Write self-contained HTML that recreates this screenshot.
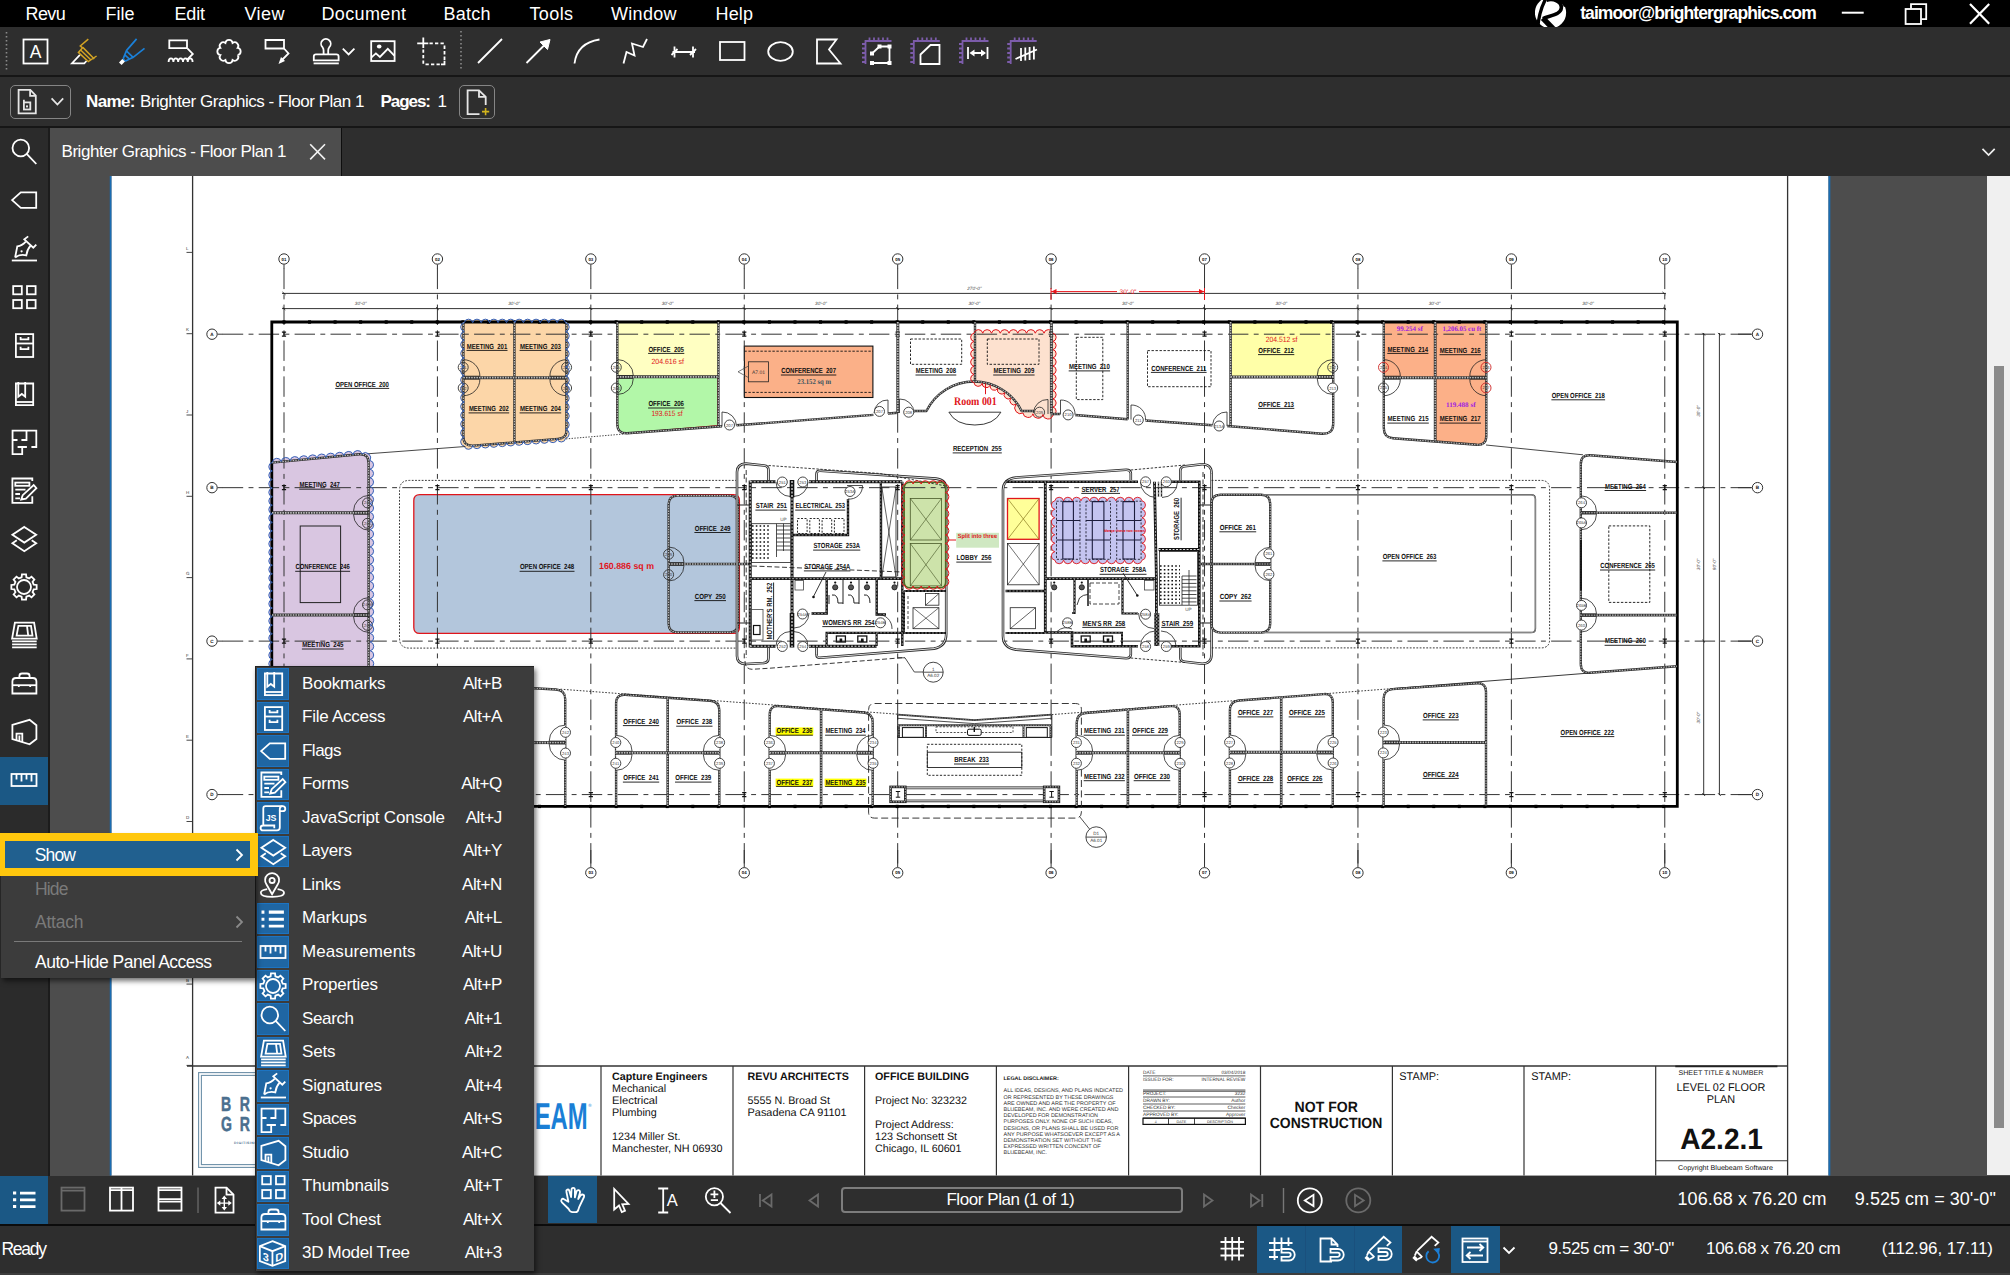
<!DOCTYPE html>
<html><head><meta charset="utf-8"><title>Revu</title>
<style>
html,body{margin:0;padding:0}
body{width:2010px;height:1275px;position:relative;overflow:hidden;background:#4d4d4d;font-family:"Liberation Sans",sans-serif}
div,svg{-webkit-font-smoothing:antialiased}
</style></head><body>
<svg style="position:absolute;left:0;top:0" width="2010" height="1275" viewBox="0 0 2010 1275" shape-rendering="geometricPrecision" text-rendering="geometricPrecision"><defs><clipPath id="dc"><rect x="49.5" y="176" width="1937.5" height="999.5"/></clipPath></defs><g clip-path="url(#dc)"><rect x="111.4" y="170" width="1717.1" height="1010" rx="0" stroke="none" fill="#fff" /><path d="M110.6 176L110.6 1176" stroke="#1a6db3" stroke-width="1.7" fill="none" /><path d="M1829.4 176L1829.4 1176" stroke="#1a6db3" stroke-width="1.9" fill="none" /><path d="M192.6 176L192.6 1176" stroke="#333" stroke-width="1.3" fill="none" /><path d="M1787.6 176L1787.6 1176" stroke="#333" stroke-width="1.3" fill="none" /><path d="M186.5 252.4L192 252.4" stroke="#333" stroke-width="0.9" fill="none" /><text x="186" y="250.1" font-family="Liberation Sans" font-size="4.5" fill="#333">L</text><path d="M186.5 333.7L192 333.7" stroke="#333" stroke-width="0.9" fill="none" /><text x="186" y="331.4" font-family="Liberation Sans" font-size="4.5" fill="#333">K</text><path d="M186.5 415L192 415" stroke="#333" stroke-width="0.9" fill="none" /><text x="186" y="412.7" font-family="Liberation Sans" font-size="4.5" fill="#333">J</text><path d="M186.5 496.3L192 496.3" stroke="#333" stroke-width="0.9" fill="none" /><text x="186" y="494" font-family="Liberation Sans" font-size="4.5" fill="#333">H</text><path d="M186.5 577.6L192 577.6" stroke="#333" stroke-width="0.9" fill="none" /><text x="186" y="575.3" font-family="Liberation Sans" font-size="4.5" fill="#333">G</text><path d="M186.5 658.9L192 658.9" stroke="#333" stroke-width="0.9" fill="none" /><text x="186" y="656.6" font-family="Liberation Sans" font-size="4.5" fill="#333">F</text><path d="M186.5 740.2L192 740.2" stroke="#333" stroke-width="0.9" fill="none" /><text x="186" y="737.9" font-family="Liberation Sans" font-size="4.5" fill="#333">E</text><path d="M186.5 821.5L192 821.5" stroke="#333" stroke-width="0.9" fill="none" /><text x="186" y="819.2" font-family="Liberation Sans" font-size="4.5" fill="#333">D</text><path d="M186.5 902.8L192 902.8" stroke="#333" stroke-width="0.9" fill="none" /><text x="186" y="900.5" font-family="Liberation Sans" font-size="4.5" fill="#333">C</text><path d="M186.5 984.1L192 984.1" stroke="#333" stroke-width="0.9" fill="none" /><text x="186" y="981.8" font-family="Liberation Sans" font-size="4.5" fill="#333">B</text><path d="M186.5 1065.4L192 1065.4" stroke="#333" stroke-width="0.9" fill="none" /><text x="186" y="1059" font-family="Liberation Sans" font-size="4.5" fill="#333">A</text><path d="M464.3 322.6A4.31 4.31 0 0 1 472.74 322.6A4.31 4.31 0 0 1 481.18 322.6A4.31 4.31 0 0 1 489.62 322.6A4.31 4.31 0 0 1 498.07 322.6A4.31 4.31 0 0 1 506.51 322.6A4.31 4.31 0 0 1 514.95 322.6A4.31 4.31 0 0 1 523.39 322.6A4.31 4.31 0 0 1 531.83 322.6A4.31 4.31 0 0 1 540.27 322.6A4.31 4.31 0 0 1 548.72 322.6A4.31 4.31 0 0 1 557.16 322.6A4.31 4.31 0 0 1 565.6 322.6A4.54 4.54 0 0 1 565.6 331.49A4.54 4.54 0 0 1 565.6 340.38A4.54 4.54 0 0 1 565.6 349.28A4.54 4.54 0 0 1 565.6 358.17A4.54 4.54 0 0 1 565.6 367.06A4.54 4.54 0 0 1 565.6 375.95A4.54 4.54 0 0 1 565.6 384.85A4.54 4.54 0 0 1 565.6 393.74A4.54 4.54 0 0 1 565.6 402.63A4.54 4.54 0 0 1 565.6 411.52A4.54 4.54 0 0 1 565.6 420.42A4.54 4.54 0 0 1 565.6 429.31A4.54 4.54 0 0 1 565.6 438.2A4.32 4.32 0 0 1 557.16 438.87A4.32 4.32 0 0 1 548.72 439.53A4.32 4.32 0 0 1 540.27 440.2A4.32 4.32 0 0 1 531.83 440.87A4.32 4.32 0 0 1 523.39 441.53A4.32 4.32 0 0 1 514.95 442.2A4.32 4.32 0 0 1 506.51 442.87A4.32 4.32 0 0 1 498.07 443.53A4.32 4.32 0 0 1 489.62 444.2A4.32 4.32 0 0 1 481.18 444.87A4.32 4.32 0 0 1 472.74 445.53A4.32 4.32 0 0 1 464.3 446.2A4.5 4.5 0 0 1 464.3 437.37A4.5 4.5 0 0 1 464.3 428.54A4.5 4.5 0 0 1 464.3 419.71A4.5 4.5 0 0 1 464.3 410.89A4.5 4.5 0 0 1 464.3 402.06A4.5 4.5 0 0 1 464.3 393.23A4.5 4.5 0 0 1 464.3 384.4A4.5 4.5 0 0 1 464.3 375.57A4.5 4.5 0 0 1 464.3 366.74A4.5 4.5 0 0 1 464.3 357.91A4.5 4.5 0 0 1 464.3 349.09A4.5 4.5 0 0 1 464.3 340.26A4.5 4.5 0 0 1 464.3 331.43A4.5 4.5 0 0 1 464.3 322.6Z" stroke="none" stroke-width="0" fill="#fcd6a8" /><rect x="617.3" y="322" width="100.6" height="54.5" rx="0" stroke="none" fill="#ffffc2" /><path d="M617.3 377.5H717.9V425.6L627 433.3Q617.3 433.6 617.3 424Z" stroke="#e0151b" stroke-width="1.2" fill="#b2f7a8" /><rect x="744.4" y="346.1" width="128.5" height="51.4" rx="0" stroke="#111" stroke-width="1.1" fill="#fbb088" /><path d="M974 333.2A4.47 4.47 0 0 1 982.76 333.2A4.47 4.47 0 0 1 991.51 333.2A4.47 4.47 0 0 1 1000.27 333.2A4.47 4.47 0 0 1 1009.02 333.2A4.47 4.47 0 0 1 1017.78 333.2A4.47 4.47 0 0 1 1026.53 333.2A4.47 4.47 0 0 1 1035.29 333.2A4.47 4.47 0 0 1 1044.04 333.2A4.47 4.47 0 0 1 1052.8 333.2A4.19 4.19 0 0 1 1052.8 341.41A4.19 4.19 0 0 1 1052.8 349.62A4.19 4.19 0 0 1 1052.8 357.83A4.19 4.19 0 0 1 1052.8 366.04A4.19 4.19 0 0 1 1052.8 374.25A4.19 4.19 0 0 1 1052.8 382.46A4.19 4.19 0 0 1 1052.8 390.67A4.19 4.19 0 0 1 1052.8 398.88A4.19 4.19 0 0 1 1052.8 407.09A4.19 4.19 0 0 1 1052.8 415.3A5.08 5.08 0 0 1 1042.87 414.53A5.08 5.08 0 0 1 1032.93 413.77A5.08 5.08 0 0 1 1023 413A5.63 5.63 0 0 1 1016.06 404.41A4.18 4.18 0 0 1 1010.8 398.13A4.18 4.18 0 0 1 1004.62 392.77A4.18 4.18 0 0 1 997.67 388.45A4.18 4.18 0 0 1 990.12 385.28A4.18 4.18 0 0 1 982.16 383.35A4.18 4.18 0 0 1 974 382.7A4.21 4.21 0 0 1 974 374.45A4.21 4.21 0 0 1 974 366.2A4.21 4.21 0 0 1 974 357.95A4.21 4.21 0 0 1 974 349.7A4.21 4.21 0 0 1 974 341.45A4.21 4.21 0 0 1 974 333.2Z" stroke="none" stroke-width="0" fill="#fde1cf" /><rect x="1231.8" y="322" width="99.9" height="54.3" rx="0" stroke="none" fill="#ffffa8" /><rect x="1384.5" y="322" width="101.5" height="55.6" rx="0" stroke="none" fill="#fcb088" /><path d="M1435.5 377H1486V436Q1486 445 1477 444.6L1435.5 441Z" stroke="#222" stroke-width="0" fill="#fcb088" /><path d="M272.3 462.4A4.6 4.6 0 0 1 281.27 461.54A4.6 4.6 0 0 1 290.24 460.68A4.6 4.6 0 0 1 299.21 459.82A4.6 4.6 0 0 1 308.18 458.96A4.6 4.6 0 0 1 317.15 458.1A4.6 4.6 0 0 1 326.12 457.24A4.6 4.6 0 0 1 335.09 456.38A4.6 4.6 0 0 1 344.06 455.52A4.6 4.6 0 0 1 353.03 454.66A4.6 4.6 0 0 1 362 453.8A5.32 5.32 0 0 1 370 460.5A4.41 4.41 0 0 1 370.01 469.15A4.41 4.41 0 0 1 370.02 477.79A4.41 4.41 0 0 1 370.02 486.44A4.41 4.41 0 0 1 370.03 495.08A4.41 4.41 0 0 1 370.04 503.73A4.41 4.41 0 0 1 370.05 512.38A4.41 4.41 0 0 1 370.06 521.02A4.41 4.41 0 0 1 370.07 529.67A4.41 4.41 0 0 1 370.07 538.31A4.41 4.41 0 0 1 370.08 546.96A4.41 4.41 0 0 1 370.09 555.6A4.41 4.41 0 0 1 370.1 564.25A4.41 4.41 0 0 1 370.11 572.9A4.41 4.41 0 0 1 370.12 581.54A4.41 4.41 0 0 1 370.12 590.19A4.41 4.41 0 0 1 370.13 598.83A4.41 4.41 0 0 1 370.14 607.48A4.41 4.41 0 0 1 370.15 616.12A4.41 4.41 0 0 1 370.16 624.77A4.41 4.41 0 0 1 370.17 633.42A4.41 4.41 0 0 1 370.18 642.06A4.41 4.41 0 0 1 370.18 650.71A4.41 4.41 0 0 1 370.19 659.35A4.41 4.41 0 0 1 370.2 668A4.54 4.54 0 0 1 361.3 668A4.54 4.54 0 0 1 352.4 668A4.54 4.54 0 0 1 343.5 668A4.54 4.54 0 0 1 334.6 668A4.54 4.54 0 0 1 325.7 668A4.54 4.54 0 0 1 316.8 668A4.54 4.54 0 0 1 307.9 668A4.54 4.54 0 0 1 299 668A4.54 4.54 0 0 1 290.1 668A4.54 4.54 0 0 1 281.2 668A4.54 4.54 0 0 1 272.3 668A4.37 4.37 0 0 1 272.3 659.43A4.37 4.37 0 0 1 272.3 650.87A4.37 4.37 0 0 1 272.3 642.3A4.37 4.37 0 0 1 272.3 633.73A4.37 4.37 0 0 1 272.3 625.17A4.37 4.37 0 0 1 272.3 616.6A4.37 4.37 0 0 1 272.3 608.03A4.37 4.37 0 0 1 272.3 599.47A4.37 4.37 0 0 1 272.3 590.9A4.37 4.37 0 0 1 272.3 582.33A4.37 4.37 0 0 1 272.3 573.77A4.37 4.37 0 0 1 272.3 565.2A4.37 4.37 0 0 1 272.3 556.63A4.37 4.37 0 0 1 272.3 548.07A4.37 4.37 0 0 1 272.3 539.5A4.37 4.37 0 0 1 272.3 530.93A4.37 4.37 0 0 1 272.3 522.37A4.37 4.37 0 0 1 272.3 513.8A4.37 4.37 0 0 1 272.3 505.23A4.37 4.37 0 0 1 272.3 496.67A4.37 4.37 0 0 1 272.3 488.1A4.37 4.37 0 0 1 272.3 479.53A4.37 4.37 0 0 1 272.3 470.97A4.37 4.37 0 0 1 272.3 462.4Z" stroke="none" stroke-width="0" fill="#d9c6e1" /><path d="M419.8 494.6H733.4Q739.4 494.6 739.4 500.6V627.4Q739.4 633.4 733.4 633.4H419.8Q413.8 633.4 413.8 627.4V500.6Q413.8 494.6 419.8 494.6Z" stroke="#e0151b" stroke-width="1.3" fill="#b3c6dc" /><path d="M905 484A3.43 3.43 0 0 1 911.73 484A3.43 3.43 0 0 1 918.47 484A3.43 3.43 0 0 1 925.2 484A3.43 3.43 0 0 1 931.93 484A3.43 3.43 0 0 1 938.67 484A3.43 3.43 0 0 1 945.4 484A3.47 3.47 0 0 1 945.4 490.8A3.47 3.47 0 0 1 945.4 497.6A3.47 3.47 0 0 1 945.4 504.4A3.47 3.47 0 0 1 945.4 511.2A3.47 3.47 0 0 1 945.4 518A3.47 3.47 0 0 1 945.4 524.8A3.47 3.47 0 0 1 945.4 531.6A3.47 3.47 0 0 1 945.4 538.4A3.47 3.47 0 0 1 945.4 545.2A3.47 3.47 0 0 1 945.4 552A3.47 3.47 0 0 1 945.4 558.8A3.47 3.47 0 0 1 945.4 565.6A3.47 3.47 0 0 1 945.4 572.4A3.47 3.47 0 0 1 945.4 579.2A3.47 3.47 0 0 1 945.4 586A3.43 3.43 0 0 1 938.67 586A3.43 3.43 0 0 1 931.93 586A3.43 3.43 0 0 1 925.2 586A3.43 3.43 0 0 1 918.47 586A3.43 3.43 0 0 1 911.73 586A3.43 3.43 0 0 1 905 586A3.47 3.47 0 0 1 905 579.2A3.47 3.47 0 0 1 905 572.4A3.47 3.47 0 0 1 905 565.6A3.47 3.47 0 0 1 905 558.8A3.47 3.47 0 0 1 905 552A3.47 3.47 0 0 1 905 545.2A3.47 3.47 0 0 1 905 538.4A3.47 3.47 0 0 1 905 531.6A3.47 3.47 0 0 1 905 524.8A3.47 3.47 0 0 1 905 518A3.47 3.47 0 0 1 905 511.2A3.47 3.47 0 0 1 905 504.4A3.47 3.47 0 0 1 905 497.6A3.47 3.47 0 0 1 905 490.8A3.47 3.47 0 0 1 905 484Z" stroke="none" stroke-width="0" fill="#cde3aa" /><rect x="956.2" y="532.8" width="42.8" height="14.9" rx="0" stroke="none" fill="#cfe8c2" /><rect x="1007.5" y="498.5" width="31.6" height="40.8" rx="0" stroke="#e0151b" stroke-width="1.3" fill="#ffff99" /><path d="M1054.8 500.8A4.45 4.45 0 0 1 1063.52 500.8A4.45 4.45 0 0 1 1072.24 500.8A4.45 4.45 0 0 1 1080.96 500.8A4.45 4.45 0 0 1 1089.68 500.8A4.45 4.45 0 0 1 1098.4 500.8A4.45 4.45 0 0 1 1107.12 500.8A4.45 4.45 0 0 1 1115.84 500.8A4.45 4.45 0 0 1 1124.56 500.8A4.45 4.45 0 0 1 1133.28 500.8A4.45 4.45 0 0 1 1142 500.8A4.33 4.33 0 0 1 1142 509.29A4.33 4.33 0 0 1 1142 517.77A4.33 4.33 0 0 1 1142 526.26A4.33 4.33 0 0 1 1142 534.74A4.33 4.33 0 0 1 1142 543.23A4.33 4.33 0 0 1 1142 551.71A4.33 4.33 0 0 1 1142 560.2A4.45 4.45 0 0 1 1133.28 560.2A4.45 4.45 0 0 1 1124.56 560.2A4.45 4.45 0 0 1 1115.84 560.2A4.45 4.45 0 0 1 1107.12 560.2A4.45 4.45 0 0 1 1098.4 560.2A4.45 4.45 0 0 1 1089.68 560.2A4.45 4.45 0 0 1 1080.96 560.2A4.45 4.45 0 0 1 1072.24 560.2A4.45 4.45 0 0 1 1063.52 560.2A4.45 4.45 0 0 1 1054.8 560.2A4.33 4.33 0 0 1 1054.8 551.71A4.33 4.33 0 0 1 1054.8 543.23A4.33 4.33 0 0 1 1054.8 534.74A4.33 4.33 0 0 1 1054.8 526.26A4.33 4.33 0 0 1 1054.8 517.77A4.33 4.33 0 0 1 1054.8 509.29A4.33 4.33 0 0 1 1054.8 500.8Z" stroke="none" stroke-width="0" fill="#c4c4f0" /><path d="M284 264.3L284 269" stroke="#333" stroke-width="1" fill="none" /><path d="M284 268.7L284 867.5" stroke="#333" stroke-width="1" fill="none" stroke-dasharray="20.4 5.35 4.9 5.25" /><path d="M284 850L284 867.5" stroke="#333" stroke-width="1" fill="none" /><circle cx="284" cy="259" r="5.2" fill="#fff" stroke="#333" stroke-width="1"/><text x="284" y="260.58" text-anchor="middle" font-family="Liberation Sans" font-size="4.4" font-weight="bold" fill="#111">01</text><circle cx="284" cy="872.8" r="5.2" fill="#fff" stroke="#333" stroke-width="1"/><text x="284" y="874.38" text-anchor="middle" font-family="Liberation Sans" font-size="4.4" font-weight="bold" fill="#111">01</text><path d="M437.42 264.3L437.42 269" stroke="#333" stroke-width="1" fill="none" /><path d="M437.42 268.7L437.42 867.5" stroke="#333" stroke-width="1" fill="none" stroke-dasharray="20.4 5.35 4.9 5.25" /><path d="M437.42 850L437.42 867.5" stroke="#333" stroke-width="1" fill="none" /><circle cx="437.42" cy="259" r="5.2" fill="#fff" stroke="#333" stroke-width="1"/><text x="437.42" y="260.58" text-anchor="middle" font-family="Liberation Sans" font-size="4.4" font-weight="bold" fill="#111">02</text><circle cx="437.42" cy="872.8" r="5.2" fill="#fff" stroke="#333" stroke-width="1"/><text x="437.42" y="874.38" text-anchor="middle" font-family="Liberation Sans" font-size="4.4" font-weight="bold" fill="#111">02</text><path d="M590.84 264.3L590.84 269" stroke="#333" stroke-width="1" fill="none" /><path d="M590.84 268.7L590.84 867.5" stroke="#333" stroke-width="1" fill="none" stroke-dasharray="20.4 5.35 4.9 5.25" /><path d="M590.84 850L590.84 867.5" stroke="#333" stroke-width="1" fill="none" /><circle cx="590.84" cy="259" r="5.2" fill="#fff" stroke="#333" stroke-width="1"/><text x="590.84" y="260.58" text-anchor="middle" font-family="Liberation Sans" font-size="4.4" font-weight="bold" fill="#111">03</text><circle cx="590.84" cy="872.8" r="5.2" fill="#fff" stroke="#333" stroke-width="1"/><text x="590.84" y="874.38" text-anchor="middle" font-family="Liberation Sans" font-size="4.4" font-weight="bold" fill="#111">03</text><path d="M744.26 264.3L744.26 269" stroke="#333" stroke-width="1" fill="none" /><path d="M744.26 268.7L744.26 867.5" stroke="#333" stroke-width="1" fill="none" stroke-dasharray="20.4 5.35 4.9 5.25" /><path d="M744.26 850L744.26 867.5" stroke="#333" stroke-width="1" fill="none" /><circle cx="744.26" cy="259" r="5.2" fill="#fff" stroke="#333" stroke-width="1"/><text x="744.26" y="260.58" text-anchor="middle" font-family="Liberation Sans" font-size="4.4" font-weight="bold" fill="#111">04</text><circle cx="744.26" cy="872.8" r="5.2" fill="#fff" stroke="#333" stroke-width="1"/><text x="744.26" y="874.38" text-anchor="middle" font-family="Liberation Sans" font-size="4.4" font-weight="bold" fill="#111">04</text><path d="M897.68 264.3L897.68 269" stroke="#333" stroke-width="1" fill="none" /><path d="M897.68 268.7L897.68 867.5" stroke="#333" stroke-width="1" fill="none" stroke-dasharray="20.4 5.35 4.9 5.25" /><path d="M897.68 850L897.68 867.5" stroke="#333" stroke-width="1" fill="none" /><circle cx="897.68" cy="259" r="5.2" fill="#fff" stroke="#333" stroke-width="1"/><text x="897.68" y="260.58" text-anchor="middle" font-family="Liberation Sans" font-size="4.4" font-weight="bold" fill="#111">05</text><circle cx="897.68" cy="872.8" r="5.2" fill="#fff" stroke="#333" stroke-width="1"/><text x="897.68" y="874.38" text-anchor="middle" font-family="Liberation Sans" font-size="4.4" font-weight="bold" fill="#111">05</text><path d="M1051.1 264.3L1051.1 269" stroke="#333" stroke-width="1" fill="none" /><path d="M1051.1 268.7L1051.1 867.5" stroke="#333" stroke-width="1" fill="none" stroke-dasharray="20.4 5.35 4.9 5.25" /><path d="M1051.1 850L1051.1 867.5" stroke="#333" stroke-width="1" fill="none" /><circle cx="1051.1" cy="259" r="5.2" fill="#fff" stroke="#333" stroke-width="1"/><text x="1051.1" y="260.58" text-anchor="middle" font-family="Liberation Sans" font-size="4.4" font-weight="bold" fill="#111">06</text><circle cx="1051.1" cy="872.8" r="5.2" fill="#fff" stroke="#333" stroke-width="1"/><text x="1051.1" y="874.38" text-anchor="middle" font-family="Liberation Sans" font-size="4.4" font-weight="bold" fill="#111">06</text><path d="M1204.52 264.3L1204.52 269" stroke="#333" stroke-width="1" fill="none" /><path d="M1204.52 268.7L1204.52 867.5" stroke="#333" stroke-width="1" fill="none" stroke-dasharray="20.4 5.35 4.9 5.25" /><path d="M1204.52 850L1204.52 867.5" stroke="#333" stroke-width="1" fill="none" /><circle cx="1204.52" cy="259" r="5.2" fill="#fff" stroke="#333" stroke-width="1"/><text x="1204.52" y="260.58" text-anchor="middle" font-family="Liberation Sans" font-size="4.4" font-weight="bold" fill="#111">07</text><circle cx="1204.52" cy="872.8" r="5.2" fill="#fff" stroke="#333" stroke-width="1"/><text x="1204.52" y="874.38" text-anchor="middle" font-family="Liberation Sans" font-size="4.4" font-weight="bold" fill="#111">07</text><path d="M1357.94 264.3L1357.94 269" stroke="#333" stroke-width="1" fill="none" /><path d="M1357.94 268.7L1357.94 867.5" stroke="#333" stroke-width="1" fill="none" stroke-dasharray="20.4 5.35 4.9 5.25" /><path d="M1357.94 850L1357.94 867.5" stroke="#333" stroke-width="1" fill="none" /><circle cx="1357.94" cy="259" r="5.2" fill="#fff" stroke="#333" stroke-width="1"/><text x="1357.94" y="260.58" text-anchor="middle" font-family="Liberation Sans" font-size="4.4" font-weight="bold" fill="#111">08</text><circle cx="1357.94" cy="872.8" r="5.2" fill="#fff" stroke="#333" stroke-width="1"/><text x="1357.94" y="874.38" text-anchor="middle" font-family="Liberation Sans" font-size="4.4" font-weight="bold" fill="#111">08</text><path d="M1511.36 264.3L1511.36 269" stroke="#333" stroke-width="1" fill="none" /><path d="M1511.36 268.7L1511.36 867.5" stroke="#333" stroke-width="1" fill="none" stroke-dasharray="20.4 5.35 4.9 5.25" /><path d="M1511.36 850L1511.36 867.5" stroke="#333" stroke-width="1" fill="none" /><circle cx="1511.36" cy="259" r="5.2" fill="#fff" stroke="#333" stroke-width="1"/><text x="1511.36" y="260.58" text-anchor="middle" font-family="Liberation Sans" font-size="4.4" font-weight="bold" fill="#111">09</text><circle cx="1511.36" cy="872.8" r="5.2" fill="#fff" stroke="#333" stroke-width="1"/><text x="1511.36" y="874.38" text-anchor="middle" font-family="Liberation Sans" font-size="4.4" font-weight="bold" fill="#111">09</text><path d="M1664.78 264.3L1664.78 269" stroke="#333" stroke-width="1" fill="none" /><path d="M1664.78 268.7L1664.78 867.5" stroke="#333" stroke-width="1" fill="none" stroke-dasharray="20.4 5.35 4.9 5.25" /><path d="M1664.78 850L1664.78 867.5" stroke="#333" stroke-width="1" fill="none" /><circle cx="1664.78" cy="259" r="5.2" fill="#fff" stroke="#333" stroke-width="1"/><text x="1664.78" y="260.58" text-anchor="middle" font-family="Liberation Sans" font-size="4.4" font-weight="bold" fill="#111">10</text><circle cx="1664.78" cy="872.8" r="5.2" fill="#fff" stroke="#333" stroke-width="1"/><text x="1664.78" y="874.38" text-anchor="middle" font-family="Liberation Sans" font-size="4.4" font-weight="bold" fill="#111">10</text><path d="M217.3 334.2L223 334.2" stroke="#333" stroke-width="1" fill="none" /><path d="M222.8 334.2L1752.3 334.2" stroke="#333" stroke-width="1" fill="none" stroke-dasharray="20.4 5.35 4.9 5.25" /><path d="M1738 334.2L1752.3 334.2" stroke="#333" stroke-width="1" fill="none" /><circle cx="212" cy="334.2" r="5.2" fill="#fff" stroke="#333" stroke-width="1"/><text x="212" y="335.86" text-anchor="middle" font-family="Liberation Sans" font-size="4.6" font-weight="bold" fill="#111">A</text><circle cx="1757.5" cy="334.2" r="5.2" fill="#fff" stroke="#333" stroke-width="1"/><text x="1757.5" y="335.86" text-anchor="middle" font-family="Liberation Sans" font-size="4.6" font-weight="bold" fill="#111">A</text><path d="M217.3 487.66L223 487.66" stroke="#333" stroke-width="1" fill="none" /><path d="M222.8 487.66L1752.3 487.66" stroke="#333" stroke-width="1" fill="none" stroke-dasharray="20.4 5.35 4.9 5.25" /><path d="M1738 487.66L1752.3 487.66" stroke="#333" stroke-width="1" fill="none" /><circle cx="212" cy="487.66" r="5.2" fill="#fff" stroke="#333" stroke-width="1"/><text x="212" y="489.32" text-anchor="middle" font-family="Liberation Sans" font-size="4.6" font-weight="bold" fill="#111">B</text><circle cx="1757.5" cy="487.66" r="5.2" fill="#fff" stroke="#333" stroke-width="1"/><text x="1757.5" y="489.32" text-anchor="middle" font-family="Liberation Sans" font-size="4.6" font-weight="bold" fill="#111">B</text><path d="M217.3 641.12L223 641.12" stroke="#333" stroke-width="1" fill="none" /><path d="M222.8 641.12L1752.3 641.12" stroke="#333" stroke-width="1" fill="none" stroke-dasharray="20.4 5.35 4.9 5.25" /><path d="M1738 641.12L1752.3 641.12" stroke="#333" stroke-width="1" fill="none" /><circle cx="212" cy="641.12" r="5.2" fill="#fff" stroke="#333" stroke-width="1"/><text x="212" y="642.78" text-anchor="middle" font-family="Liberation Sans" font-size="4.6" font-weight="bold" fill="#111">C</text><circle cx="1757.5" cy="641.12" r="5.2" fill="#fff" stroke="#333" stroke-width="1"/><text x="1757.5" y="642.78" text-anchor="middle" font-family="Liberation Sans" font-size="4.6" font-weight="bold" fill="#111">C</text><path d="M217.3 794.58L223 794.58" stroke="#333" stroke-width="1" fill="none" /><path d="M222.8 794.58L1752.3 794.58" stroke="#333" stroke-width="1" fill="none" stroke-dasharray="20.4 5.35 4.9 5.25" /><path d="M1738 794.58L1752.3 794.58" stroke="#333" stroke-width="1" fill="none" /><circle cx="212" cy="794.58" r="5.2" fill="#fff" stroke="#333" stroke-width="1"/><text x="212" y="796.24" text-anchor="middle" font-family="Liberation Sans" font-size="4.6" font-weight="bold" fill="#111">D</text><circle cx="1757.5" cy="794.58" r="5.2" fill="#fff" stroke="#333" stroke-width="1"/><text x="1757.5" y="796.24" text-anchor="middle" font-family="Liberation Sans" font-size="4.6" font-weight="bold" fill="#111">D</text><path d="M281.9 332.2H286.1M281.9 336.2H286.1M284 332.2V336.2" stroke="#111" stroke-width="1.2" fill="none" /><path d="M281.9 485.66H286.1M281.9 489.66H286.1M284 485.66V489.66" stroke="#111" stroke-width="1.2" fill="none" /><path d="M281.9 639.12H286.1M281.9 643.12H286.1M284 639.12V643.12" stroke="#111" stroke-width="1.2" fill="none" /><path d="M281.9 792.58H286.1M281.9 796.58H286.1M284 792.58V796.58" stroke="#111" stroke-width="1.2" fill="none" /><path d="M435.32 332.2H439.52M435.32 336.2H439.52M437.42 332.2V336.2" stroke="#111" stroke-width="1.2" fill="none" /><path d="M435.32 485.66H439.52M435.32 489.66H439.52M437.42 485.66V489.66" stroke="#111" stroke-width="1.2" fill="none" /><path d="M435.32 639.12H439.52M435.32 643.12H439.52M437.42 639.12V643.12" stroke="#111" stroke-width="1.2" fill="none" /><path d="M435.32 792.58H439.52M435.32 796.58H439.52M437.42 792.58V796.58" stroke="#111" stroke-width="1.2" fill="none" /><path d="M588.74 332.2H592.94M588.74 336.2H592.94M590.84 332.2V336.2" stroke="#111" stroke-width="1.2" fill="none" /><path d="M588.74 485.66H592.94M588.74 489.66H592.94M590.84 485.66V489.66" stroke="#111" stroke-width="1.2" fill="none" /><path d="M588.74 639.12H592.94M588.74 643.12H592.94M590.84 639.12V643.12" stroke="#111" stroke-width="1.2" fill="none" /><path d="M588.74 792.58H592.94M588.74 796.58H592.94M590.84 792.58V796.58" stroke="#111" stroke-width="1.2" fill="none" /><path d="M742.16 332.2H746.36M742.16 336.2H746.36M744.26 332.2V336.2" stroke="#111" stroke-width="1.2" fill="none" /><path d="M742.16 485.66H746.36M742.16 489.66H746.36M744.26 485.66V489.66" stroke="#111" stroke-width="1.2" fill="none" /><path d="M742.16 639.12H746.36M742.16 643.12H746.36M744.26 639.12V643.12" stroke="#111" stroke-width="1.2" fill="none" /><path d="M742.16 792.58H746.36M742.16 796.58H746.36M744.26 792.58V796.58" stroke="#111" stroke-width="1.2" fill="none" /><path d="M895.58 332.2H899.78M895.58 336.2H899.78M897.68 332.2V336.2" stroke="#111" stroke-width="1.2" fill="none" /><path d="M895.58 485.66H899.78M895.58 489.66H899.78M897.68 485.66V489.66" stroke="#111" stroke-width="1.2" fill="none" /><path d="M895.58 639.12H899.78M895.58 643.12H899.78M897.68 639.12V643.12" stroke="#111" stroke-width="1.2" fill="none" /><path d="M895.58 792.58H899.78M895.58 796.58H899.78M897.68 792.58V796.58" stroke="#111" stroke-width="1.2" fill="none" /><path d="M1049 332.2H1053.2M1049 336.2H1053.2M1051.1 332.2V336.2" stroke="#111" stroke-width="1.2" fill="none" /><path d="M1049 485.66H1053.2M1049 489.66H1053.2M1051.1 485.66V489.66" stroke="#111" stroke-width="1.2" fill="none" /><path d="M1049 639.12H1053.2M1049 643.12H1053.2M1051.1 639.12V643.12" stroke="#111" stroke-width="1.2" fill="none" /><path d="M1049 792.58H1053.2M1049 796.58H1053.2M1051.1 792.58V796.58" stroke="#111" stroke-width="1.2" fill="none" /><path d="M1202.42 332.2H1206.62M1202.42 336.2H1206.62M1204.52 332.2V336.2" stroke="#111" stroke-width="1.2" fill="none" /><path d="M1202.42 485.66H1206.62M1202.42 489.66H1206.62M1204.52 485.66V489.66" stroke="#111" stroke-width="1.2" fill="none" /><path d="M1202.42 639.12H1206.62M1202.42 643.12H1206.62M1204.52 639.12V643.12" stroke="#111" stroke-width="1.2" fill="none" /><path d="M1202.42 792.58H1206.62M1202.42 796.58H1206.62M1204.52 792.58V796.58" stroke="#111" stroke-width="1.2" fill="none" /><path d="M1355.84 332.2H1360.04M1355.84 336.2H1360.04M1357.94 332.2V336.2" stroke="#111" stroke-width="1.2" fill="none" /><path d="M1355.84 485.66H1360.04M1355.84 489.66H1360.04M1357.94 485.66V489.66" stroke="#111" stroke-width="1.2" fill="none" /><path d="M1355.84 639.12H1360.04M1355.84 643.12H1360.04M1357.94 639.12V643.12" stroke="#111" stroke-width="1.2" fill="none" /><path d="M1355.84 792.58H1360.04M1355.84 796.58H1360.04M1357.94 792.58V796.58" stroke="#111" stroke-width="1.2" fill="none" /><path d="M1509.26 332.2H1513.46M1509.26 336.2H1513.46M1511.36 332.2V336.2" stroke="#111" stroke-width="1.2" fill="none" /><path d="M1509.26 485.66H1513.46M1509.26 489.66H1513.46M1511.36 485.66V489.66" stroke="#111" stroke-width="1.2" fill="none" /><path d="M1509.26 639.12H1513.46M1509.26 643.12H1513.46M1511.36 639.12V643.12" stroke="#111" stroke-width="1.2" fill="none" /><path d="M1509.26 792.58H1513.46M1509.26 796.58H1513.46M1511.36 792.58V796.58" stroke="#111" stroke-width="1.2" fill="none" /><path d="M1662.68 332.2H1666.88M1662.68 336.2H1666.88M1664.78 332.2V336.2" stroke="#111" stroke-width="1.2" fill="none" /><path d="M1662.68 485.66H1666.88M1662.68 489.66H1666.88M1664.78 485.66V489.66" stroke="#111" stroke-width="1.2" fill="none" /><path d="M1662.68 639.12H1666.88M1662.68 643.12H1666.88M1664.78 639.12V643.12" stroke="#111" stroke-width="1.2" fill="none" /><path d="M1662.68 792.58H1666.88M1662.68 796.58H1666.88M1664.78 792.58V796.58" stroke="#111" stroke-width="1.2" fill="none" /><path d="M282 293.4L1666 293.4" stroke="#333" stroke-width="1" fill="none" /><path d="M282 308.6L1666 308.6" stroke="#333" stroke-width="1" fill="none" /><path d="M282.7 307.3L285.3 309.9" stroke="#111" stroke-width="0.9" fill="none" /><path d="M436.12 307.3L438.72 309.9" stroke="#111" stroke-width="0.9" fill="none" /><path d="M589.54 307.3L592.14 309.9" stroke="#111" stroke-width="0.9" fill="none" /><path d="M742.96 307.3L745.56 309.9" stroke="#111" stroke-width="0.9" fill="none" /><path d="M896.38 307.3L898.98 309.9" stroke="#111" stroke-width="0.9" fill="none" /><path d="M1049.8 307.3L1052.4 309.9" stroke="#111" stroke-width="0.9" fill="none" /><path d="M1203.22 307.3L1205.82 309.9" stroke="#111" stroke-width="0.9" fill="none" /><path d="M1356.64 307.3L1359.24 309.9" stroke="#111" stroke-width="0.9" fill="none" /><path d="M1510.06 307.3L1512.66 309.9" stroke="#111" stroke-width="0.9" fill="none" /><path d="M1663.48 307.3L1666.08 309.9" stroke="#111" stroke-width="0.9" fill="none" /><path d="M282.5 292L285.5 294.8" stroke="#111" stroke-width="0.9" fill="none" /><path d="M1662.5 292L1665.5 294.8" stroke="#111" stroke-width="0.9" fill="none" /><text x="360.71" y="305" text-anchor="middle" font-family="Liberation Sans" font-style="italic" font-size="4.6" fill="#444">30'-0"</text><text x="514.13" y="305" text-anchor="middle" font-family="Liberation Sans" font-style="italic" font-size="4.6" fill="#444">30'-0"</text><text x="667.55" y="305" text-anchor="middle" font-family="Liberation Sans" font-style="italic" font-size="4.6" fill="#444">30'-0"</text><text x="820.97" y="305" text-anchor="middle" font-family="Liberation Sans" font-style="italic" font-size="4.6" fill="#444">30'-0"</text><text x="974.39" y="305" text-anchor="middle" font-family="Liberation Sans" font-style="italic" font-size="4.6" fill="#444">30'-0"</text><text x="1127.81" y="305" text-anchor="middle" font-family="Liberation Sans" font-style="italic" font-size="4.6" fill="#444">30'-0"</text><text x="1281.23" y="305" text-anchor="middle" font-family="Liberation Sans" font-style="italic" font-size="4.6" fill="#444">30'-0"</text><text x="1434.65" y="305" text-anchor="middle" font-family="Liberation Sans" font-style="italic" font-size="4.6" fill="#444">30'-0"</text><text x="1588.07" y="305" text-anchor="middle" font-family="Liberation Sans" font-style="italic" font-size="4.6" fill="#444">30'-0"</text><text x="974.4" y="289.6" text-anchor="middle" font-family="Liberation Sans" font-style="italic" font-size="4.6" fill="#444">270'-0"</text><path d="M1703.7 333L1703.7 795" stroke="#333" stroke-width="1" fill="none" /><path d="M1719.4 333L1719.4 795" stroke="#333" stroke-width="1" fill="none" /><path d="M1702.4 332.9L1705 335.5" stroke="#111" stroke-width="0.9" fill="none" /><path d="M1702.4 486.36L1705 488.96" stroke="#111" stroke-width="0.9" fill="none" /><path d="M1702.4 639.82L1705 642.42" stroke="#111" stroke-width="0.9" fill="none" /><path d="M1702.4 793.28L1705 795.88" stroke="#111" stroke-width="0.9" fill="none" /><path d="M1718.1 332.9L1720.7 335.5" stroke="#111" stroke-width="0.9" fill="none" /><path d="M1718.1 793.28L1720.7 795.88" stroke="#111" stroke-width="0.9" fill="none" /><text transform="translate(1700.2 410.9) rotate(-90)" text-anchor="middle" font-family="Liberation Sans" font-style="italic" font-size="4.6" fill="#444">30'-0"</text><text transform="translate(1700.2 564.3) rotate(-90)" text-anchor="middle" font-family="Liberation Sans" font-style="italic" font-size="4.6" fill="#444">30'-0"</text><text transform="translate(1700.2 717.7) rotate(-90)" text-anchor="middle" font-family="Liberation Sans" font-style="italic" font-size="4.6" fill="#444">30'-0"</text><text transform="translate(1715.8 564.3) rotate(-90)" text-anchor="middle" font-family="Liberation Sans" font-style="italic" font-size="4.6" fill="#444">90'-0"</text><path d="M1051 291.6L1117 291.6" stroke="#e8151b" stroke-width="1" fill="none" /><path d="M1139 291.6L1204.5 291.6" stroke="#e8151b" stroke-width="1" fill="none" /><path d="M1051 288L1051 300" stroke="#e8151b" stroke-width="1" fill="none" /><path d="M1204.5 288L1204.5 300" stroke="#e8151b" stroke-width="1" fill="none" /><path d="M1051.5 291.6L1056.5 289V294.2ZM1204 291.6L1199 289V294.2Z" fill="#e8151b"/><text x="1128" y="294" text-anchor="middle" font-family="Liberation Sans" font-size="6.6" fill="#e8151b">30'-0"</text><path d="M271.8 806.4V322H1677.3V806.4H520" stroke="#000" stroke-width="2.8" fill="none" stroke-linejoin="miter"/><rect x="282.5" y="320.3" width="3" height="3.4" rx="0" stroke="none" fill="#000" /><rect x="282.5" y="804.8" width="3" height="3.3" rx="0" stroke="none" fill="#000" /><rect x="308.05" y="320.3" width="3" height="3.4" rx="0" stroke="none" fill="#000" /><rect x="308.05" y="804.8" width="3" height="3.3" rx="0" stroke="none" fill="#000" /><rect x="333.6" y="320.3" width="3" height="3.4" rx="0" stroke="none" fill="#000" /><rect x="333.6" y="804.8" width="3" height="3.3" rx="0" stroke="none" fill="#000" /><rect x="359.15" y="320.3" width="3" height="3.4" rx="0" stroke="none" fill="#000" /><rect x="359.15" y="804.8" width="3" height="3.3" rx="0" stroke="none" fill="#000" /><rect x="384.7" y="320.3" width="3" height="3.4" rx="0" stroke="none" fill="#000" /><rect x="384.7" y="804.8" width="3" height="3.3" rx="0" stroke="none" fill="#000" /><rect x="410.25" y="320.3" width="3" height="3.4" rx="0" stroke="none" fill="#000" /><rect x="410.25" y="804.8" width="3" height="3.3" rx="0" stroke="none" fill="#000" /><rect x="435.8" y="320.3" width="3" height="3.4" rx="0" stroke="none" fill="#000" /><rect x="435.8" y="804.8" width="3" height="3.3" rx="0" stroke="none" fill="#000" /><rect x="461.35" y="320.3" width="3" height="3.4" rx="0" stroke="none" fill="#000" /><rect x="461.35" y="804.8" width="3" height="3.3" rx="0" stroke="none" fill="#000" /><rect x="486.9" y="320.3" width="3" height="3.4" rx="0" stroke="none" fill="#000" /><rect x="486.9" y="804.8" width="3" height="3.3" rx="0" stroke="none" fill="#000" /><rect x="512.45" y="320.3" width="3" height="3.4" rx="0" stroke="none" fill="#000" /><rect x="512.45" y="804.8" width="3" height="3.3" rx="0" stroke="none" fill="#000" /><rect x="538" y="320.3" width="3" height="3.4" rx="0" stroke="none" fill="#000" /><rect x="538" y="804.8" width="3" height="3.3" rx="0" stroke="none" fill="#000" /><rect x="563.55" y="320.3" width="3" height="3.4" rx="0" stroke="none" fill="#000" /><rect x="563.55" y="804.8" width="3" height="3.3" rx="0" stroke="none" fill="#000" /><rect x="589.1" y="320.3" width="3" height="3.4" rx="0" stroke="none" fill="#000" /><rect x="589.1" y="804.8" width="3" height="3.3" rx="0" stroke="none" fill="#000" /><rect x="614.65" y="320.3" width="3" height="3.4" rx="0" stroke="none" fill="#000" /><rect x="614.65" y="804.8" width="3" height="3.3" rx="0" stroke="none" fill="#000" /><rect x="640.2" y="320.3" width="3" height="3.4" rx="0" stroke="none" fill="#000" /><rect x="640.2" y="804.8" width="3" height="3.3" rx="0" stroke="none" fill="#000" /><rect x="665.75" y="320.3" width="3" height="3.4" rx="0" stroke="none" fill="#000" /><rect x="665.75" y="804.8" width="3" height="3.3" rx="0" stroke="none" fill="#000" /><rect x="691.3" y="320.3" width="3" height="3.4" rx="0" stroke="none" fill="#000" /><rect x="691.3" y="804.8" width="3" height="3.3" rx="0" stroke="none" fill="#000" /><rect x="716.85" y="320.3" width="3" height="3.4" rx="0" stroke="none" fill="#000" /><rect x="716.85" y="804.8" width="3" height="3.3" rx="0" stroke="none" fill="#000" /><rect x="742.4" y="320.3" width="3" height="3.4" rx="0" stroke="none" fill="#000" /><rect x="742.4" y="804.8" width="3" height="3.3" rx="0" stroke="none" fill="#000" /><rect x="767.95" y="320.3" width="3" height="3.4" rx="0" stroke="none" fill="#000" /><rect x="767.95" y="804.8" width="3" height="3.3" rx="0" stroke="none" fill="#000" /><rect x="793.5" y="320.3" width="3" height="3.4" rx="0" stroke="none" fill="#000" /><rect x="793.5" y="804.8" width="3" height="3.3" rx="0" stroke="none" fill="#000" /><rect x="819.05" y="320.3" width="3" height="3.4" rx="0" stroke="none" fill="#000" /><rect x="819.05" y="804.8" width="3" height="3.3" rx="0" stroke="none" fill="#000" /><rect x="844.6" y="320.3" width="3" height="3.4" rx="0" stroke="none" fill="#000" /><rect x="844.6" y="804.8" width="3" height="3.3" rx="0" stroke="none" fill="#000" /><rect x="870.15" y="320.3" width="3" height="3.4" rx="0" stroke="none" fill="#000" /><rect x="870.15" y="804.8" width="3" height="3.3" rx="0" stroke="none" fill="#000" /><rect x="895.7" y="320.3" width="3" height="3.4" rx="0" stroke="none" fill="#000" /><rect x="895.7" y="804.8" width="3" height="3.3" rx="0" stroke="none" fill="#000" /><rect x="921.25" y="320.3" width="3" height="3.4" rx="0" stroke="none" fill="#000" /><rect x="921.25" y="804.8" width="3" height="3.3" rx="0" stroke="none" fill="#000" /><rect x="946.8" y="320.3" width="3" height="3.4" rx="0" stroke="none" fill="#000" /><rect x="946.8" y="804.8" width="3" height="3.3" rx="0" stroke="none" fill="#000" /><rect x="972.35" y="320.3" width="3" height="3.4" rx="0" stroke="none" fill="#000" /><rect x="972.35" y="804.8" width="3" height="3.3" rx="0" stroke="none" fill="#000" /><rect x="997.9" y="320.3" width="3" height="3.4" rx="0" stroke="none" fill="#000" /><rect x="997.9" y="804.8" width="3" height="3.3" rx="0" stroke="none" fill="#000" /><rect x="1023.45" y="320.3" width="3" height="3.4" rx="0" stroke="none" fill="#000" /><rect x="1023.45" y="804.8" width="3" height="3.3" rx="0" stroke="none" fill="#000" /><rect x="1049" y="320.3" width="3" height="3.4" rx="0" stroke="none" fill="#000" /><rect x="1049" y="804.8" width="3" height="3.3" rx="0" stroke="none" fill="#000" /><rect x="1074.55" y="320.3" width="3" height="3.4" rx="0" stroke="none" fill="#000" /><rect x="1074.55" y="804.8" width="3" height="3.3" rx="0" stroke="none" fill="#000" /><rect x="1100.1" y="320.3" width="3" height="3.4" rx="0" stroke="none" fill="#000" /><rect x="1100.1" y="804.8" width="3" height="3.3" rx="0" stroke="none" fill="#000" /><rect x="1125.65" y="320.3" width="3" height="3.4" rx="0" stroke="none" fill="#000" /><rect x="1125.65" y="804.8" width="3" height="3.3" rx="0" stroke="none" fill="#000" /><rect x="1151.2" y="320.3" width="3" height="3.4" rx="0" stroke="none" fill="#000" /><rect x="1151.2" y="804.8" width="3" height="3.3" rx="0" stroke="none" fill="#000" /><rect x="1176.75" y="320.3" width="3" height="3.4" rx="0" stroke="none" fill="#000" /><rect x="1176.75" y="804.8" width="3" height="3.3" rx="0" stroke="none" fill="#000" /><rect x="1202.3" y="320.3" width="3" height="3.4" rx="0" stroke="none" fill="#000" /><rect x="1202.3" y="804.8" width="3" height="3.3" rx="0" stroke="none" fill="#000" /><rect x="1227.85" y="320.3" width="3" height="3.4" rx="0" stroke="none" fill="#000" /><rect x="1227.85" y="804.8" width="3" height="3.3" rx="0" stroke="none" fill="#000" /><rect x="1253.4" y="320.3" width="3" height="3.4" rx="0" stroke="none" fill="#000" /><rect x="1253.4" y="804.8" width="3" height="3.3" rx="0" stroke="none" fill="#000" /><rect x="1278.95" y="320.3" width="3" height="3.4" rx="0" stroke="none" fill="#000" /><rect x="1278.95" y="804.8" width="3" height="3.3" rx="0" stroke="none" fill="#000" /><rect x="1304.5" y="320.3" width="3" height="3.4" rx="0" stroke="none" fill="#000" /><rect x="1304.5" y="804.8" width="3" height="3.3" rx="0" stroke="none" fill="#000" /><rect x="1330.05" y="320.3" width="3" height="3.4" rx="0" stroke="none" fill="#000" /><rect x="1330.05" y="804.8" width="3" height="3.3" rx="0" stroke="none" fill="#000" /><rect x="1355.6" y="320.3" width="3" height="3.4" rx="0" stroke="none" fill="#000" /><rect x="1355.6" y="804.8" width="3" height="3.3" rx="0" stroke="none" fill="#000" /><rect x="1381.15" y="320.3" width="3" height="3.4" rx="0" stroke="none" fill="#000" /><rect x="1381.15" y="804.8" width="3" height="3.3" rx="0" stroke="none" fill="#000" /><rect x="1406.7" y="320.3" width="3" height="3.4" rx="0" stroke="none" fill="#000" /><rect x="1406.7" y="804.8" width="3" height="3.3" rx="0" stroke="none" fill="#000" /><rect x="1432.25" y="320.3" width="3" height="3.4" rx="0" stroke="none" fill="#000" /><rect x="1432.25" y="804.8" width="3" height="3.3" rx="0" stroke="none" fill="#000" /><rect x="1457.8" y="320.3" width="3" height="3.4" rx="0" stroke="none" fill="#000" /><rect x="1457.8" y="804.8" width="3" height="3.3" rx="0" stroke="none" fill="#000" /><rect x="1483.35" y="320.3" width="3" height="3.4" rx="0" stroke="none" fill="#000" /><rect x="1483.35" y="804.8" width="3" height="3.3" rx="0" stroke="none" fill="#000" /><rect x="1508.9" y="320.3" width="3" height="3.4" rx="0" stroke="none" fill="#000" /><rect x="1508.9" y="804.8" width="3" height="3.3" rx="0" stroke="none" fill="#000" /><rect x="1534.45" y="320.3" width="3" height="3.4" rx="0" stroke="none" fill="#000" /><rect x="1534.45" y="804.8" width="3" height="3.3" rx="0" stroke="none" fill="#000" /><rect x="1560" y="320.3" width="3" height="3.4" rx="0" stroke="none" fill="#000" /><rect x="1560" y="804.8" width="3" height="3.3" rx="0" stroke="none" fill="#000" /><rect x="1585.55" y="320.3" width="3" height="3.4" rx="0" stroke="none" fill="#000" /><rect x="1585.55" y="804.8" width="3" height="3.3" rx="0" stroke="none" fill="#000" /><rect x="1611.1" y="320.3" width="3" height="3.4" rx="0" stroke="none" fill="#000" /><rect x="1611.1" y="804.8" width="3" height="3.3" rx="0" stroke="none" fill="#000" /><rect x="1636.65" y="320.3" width="3" height="3.4" rx="0" stroke="none" fill="#000" /><rect x="1636.65" y="804.8" width="3" height="3.3" rx="0" stroke="none" fill="#000" /><rect x="1662.2" y="320.3" width="3" height="3.4" rx="0" stroke="none" fill="#000" /><rect x="1662.2" y="804.8" width="3" height="3.3" rx="0" stroke="none" fill="#000" /><path d="M463.4 322V437Q463.4 446 473 445.6L558 438.9Q566.4 438.2 566.4 431V322" stroke="#303030" stroke-width="2.4" fill="none" stroke-linejoin="round"/><path d="M463.4 322V437Q463.4 446 473 445.6L558 438.9Q566.4 438.2 566.4 431V322" stroke="#bdbdbd" stroke-width="1.0999999999999999" fill="none" stroke-dasharray="1.5 1.1" stroke-linejoin="round"/><path d="M514.4 322V442.3" stroke="#303030" stroke-width="2.4" fill="none" stroke-linejoin="round"/><path d="M514.4 322V442.3" stroke="#bdbdbd" stroke-width="1.0999999999999999" fill="none" stroke-dasharray="1.5 1.1" stroke-linejoin="round"/><path d="M463.4 377.7H566.4" stroke="#303030" stroke-width="3" fill="none" stroke-linejoin="round"/><path d="M463.4 377.7H566.4" stroke="#bdbdbd" stroke-width="1.7" fill="none" stroke-dasharray="1.5 1.1" stroke-linejoin="round"/><path d="M463.4 376.2L479.9 376.2A16.5 16.5 0 0 0 463.4 359.7" stroke="#222" stroke-width="0.8" fill="none" /><path d="M463.4 379.2L479.9 379.2A16.5 16.5 0 0 1 463.4 395.7" stroke="#222" stroke-width="0.8" fill="none" /><path d="M566.4 376.2L549.9 376.2A16.5 16.5 0 0 1 566.4 359.7" stroke="#222" stroke-width="0.8" fill="none" /><path d="M566.4 379.2L549.9 379.2A16.5 16.5 0 0 0 566.4 395.7" stroke="#222" stroke-width="0.8" fill="none" /><circle cx="463.2" cy="367.3" r="5" fill="none" stroke="#333" stroke-width="0.9"/><text x="463.2" y="368.81" text-anchor="middle" font-family="Liberation Sans" font-size="4.2"  fill="#444">201</text><circle cx="463.2" cy="388" r="5" fill="none" stroke="#333" stroke-width="0.9"/><text x="463.2" y="389.51" text-anchor="middle" font-family="Liberation Sans" font-size="4.2"  fill="#444">202</text><circle cx="566.6" cy="367.3" r="5" fill="none" stroke="#333" stroke-width="0.9"/><text x="566.6" y="368.81" text-anchor="middle" font-family="Liberation Sans" font-size="4.2"  fill="#444">203</text><circle cx="566.6" cy="388" r="5" fill="none" stroke="#333" stroke-width="0.9"/><text x="566.6" y="389.51" text-anchor="middle" font-family="Liberation Sans" font-size="4.2"  fill="#444">204</text><path d="M464.3 322.6A4.31 4.31 0 0 1 472.74 322.6A4.31 4.31 0 0 1 481.18 322.6A4.31 4.31 0 0 1 489.62 322.6A4.31 4.31 0 0 1 498.07 322.6A4.31 4.31 0 0 1 506.51 322.6A4.31 4.31 0 0 1 514.95 322.6A4.31 4.31 0 0 1 523.39 322.6A4.31 4.31 0 0 1 531.83 322.6A4.31 4.31 0 0 1 540.27 322.6A4.31 4.31 0 0 1 548.72 322.6A4.31 4.31 0 0 1 557.16 322.6A4.31 4.31 0 0 1 565.6 322.6A4.54 4.54 0 0 1 565.6 331.49A4.54 4.54 0 0 1 565.6 340.38A4.54 4.54 0 0 1 565.6 349.28A4.54 4.54 0 0 1 565.6 358.17A4.54 4.54 0 0 1 565.6 367.06A4.54 4.54 0 0 1 565.6 375.95A4.54 4.54 0 0 1 565.6 384.85A4.54 4.54 0 0 1 565.6 393.74A4.54 4.54 0 0 1 565.6 402.63A4.54 4.54 0 0 1 565.6 411.52A4.54 4.54 0 0 1 565.6 420.42A4.54 4.54 0 0 1 565.6 429.31A4.54 4.54 0 0 1 565.6 438.2A4.32 4.32 0 0 1 557.16 438.87A4.32 4.32 0 0 1 548.72 439.53A4.32 4.32 0 0 1 540.27 440.2A4.32 4.32 0 0 1 531.83 440.87A4.32 4.32 0 0 1 523.39 441.53A4.32 4.32 0 0 1 514.95 442.2A4.32 4.32 0 0 1 506.51 442.87A4.32 4.32 0 0 1 498.07 443.53A4.32 4.32 0 0 1 489.62 444.2A4.32 4.32 0 0 1 481.18 444.87A4.32 4.32 0 0 1 472.74 445.53A4.32 4.32 0 0 1 464.3 446.2A4.5 4.5 0 0 1 464.3 437.37A4.5 4.5 0 0 1 464.3 428.54A4.5 4.5 0 0 1 464.3 419.71A4.5 4.5 0 0 1 464.3 410.89A4.5 4.5 0 0 1 464.3 402.06A4.5 4.5 0 0 1 464.3 393.23A4.5 4.5 0 0 1 464.3 384.4A4.5 4.5 0 0 1 464.3 375.57A4.5 4.5 0 0 1 464.3 366.74A4.5 4.5 0 0 1 464.3 357.91A4.5 4.5 0 0 1 464.3 349.09A4.5 4.5 0 0 1 464.3 340.26A4.5 4.5 0 0 1 464.3 331.43A4.5 4.5 0 0 1 464.3 322.6Z" stroke="#3560b8" stroke-width="1.0" fill="none" /><text x="466.8" y="348.55" textLength="40.4" lengthAdjust="spacingAndGlyphs" xml:space="preserve" font-family="Liberation Sans" font-size="7.4" font-weight="bold" fill="#111">MEETING  201</text><path d="M466.5 350.4L507.5 350.4" stroke="#111" stroke-width="0.9" fill="none" /><text x="519.9" y="348.55" textLength="41" lengthAdjust="spacingAndGlyphs" xml:space="preserve" font-family="Liberation Sans" font-size="7.4" font-weight="bold" fill="#111">MEETING  203</text><path d="M519.6 350.4L561.2 350.4" stroke="#111" stroke-width="0.9" fill="none" /><text x="468.9" y="411.05" textLength="40" lengthAdjust="spacingAndGlyphs" xml:space="preserve" font-family="Liberation Sans" font-size="7.4" font-weight="bold" fill="#111">MEETING  202</text><path d="M468.6 412.9L509.2 412.9" stroke="#111" stroke-width="0.9" fill="none" /><text x="519.9" y="411.05" textLength="41" lengthAdjust="spacingAndGlyphs" xml:space="preserve" font-family="Liberation Sans" font-size="7.4" font-weight="bold" fill="#111">MEETING  204</text><path d="M519.6 412.9L561.2 412.9" stroke="#111" stroke-width="0.9" fill="none" /><text x="335.5" y="386.55" textLength="53.4" lengthAdjust="spacingAndGlyphs" xml:space="preserve" font-family="Liberation Sans" font-size="7.4" font-weight="bold" fill="#111">OPEN OFFICE  200</text><path d="M335.2 388.4L389.2 388.4" stroke="#111" stroke-width="0.9" fill="none" /><path d="M617.3 322V424Q617.3 433.6 627 433.3L722 426.2M718.4 322V426.5" stroke="#303030" stroke-width="2.4" fill="none" stroke-linejoin="round"/><path d="M617.3 322V424Q617.3 433.6 627 433.3L722 426.2M718.4 322V426.5" stroke="#bdbdbd" stroke-width="1.0999999999999999" fill="none" stroke-dasharray="1.5 1.1" stroke-linejoin="round"/><path d="M617.3 376.8H718.4" stroke="#303030" stroke-width="3" fill="none" stroke-linejoin="round"/><path d="M617.3 376.8H718.4" stroke="#bdbdbd" stroke-width="1.7" fill="none" stroke-dasharray="1.5 1.1" stroke-linejoin="round"/><path d="M617.3 375.5L633.3 375.5A16 16 0 0 0 617.3 359.5" stroke="#222" stroke-width="0.8" fill="none" /><path d="M617.3 378.5L633.3 378.5A16 16 0 0 1 617.3 394.5" stroke="#222" stroke-width="0.8" fill="none" /><circle cx="616.3" cy="367.3" r="5" fill="none" stroke="#333" stroke-width="0.9"/><text x="616.3" y="368.81" text-anchor="middle" font-family="Liberation Sans" font-size="4.2"  fill="#444">205</text><circle cx="616.3" cy="388" r="5" fill="none" stroke="#333" stroke-width="0.9"/><text x="616.3" y="389.51" text-anchor="middle" font-family="Liberation Sans" font-size="4.2"  fill="#444">206</text><path d="M722 426.5V412A14 14 0 0 1 736.5 426" stroke="#222" stroke-width="0.8" fill="#fff" /><circle cx="729.5" cy="425" r="5" fill="#fff" stroke="#333" stroke-width="0.9"/><text x="729.5" y="426.51" text-anchor="middle" font-family="Liberation Sans" font-size="4.2"  fill="#444">207</text><text x="648.4" y="351.55" textLength="35.6" lengthAdjust="spacingAndGlyphs" xml:space="preserve" font-family="Liberation Sans" font-size="7.4" font-weight="bold" fill="#111">OFFICE  205</text><path d="M648.1 353.4L684.3 353.4" stroke="#111" stroke-width="0.9" fill="none" /><text x="648.4" y="406.15" textLength="35.6" lengthAdjust="spacingAndGlyphs" xml:space="preserve" font-family="Liberation Sans" font-size="7.4" font-weight="bold" fill="#111">OFFICE  206</text><path d="M648.1 408L684.3 408" stroke="#111" stroke-width="0.9" fill="none" /><text x="651.4" y="363.81" textLength="32.6" lengthAdjust="spacingAndGlyphs" xml:space="preserve" font-family="Liberation Sans" font-size="7.6"  fill="#e0151b">204.616 sf</text><text x="651.4" y="415.81" textLength="31.2" lengthAdjust="spacingAndGlyphs" xml:space="preserve" font-family="Liberation Sans" font-size="7.6"  fill="#e0151b">193.615 sf</text><path d="M736.5 425.3L873.4 414.9" stroke="#303030" stroke-width="2.4" fill="none" stroke-linejoin="round"/><path d="M736.5 425.3L873.4 414.9" stroke="#bdbdbd" stroke-width="1.0999999999999999" fill="none" stroke-dasharray="1.5 1.1" stroke-linejoin="round"/><path d="M888 413.5L897.8 412.8" stroke="#303030" stroke-width="2.4" fill="none" stroke-linejoin="round"/><path d="M888 413.5L897.8 412.8" stroke="#bdbdbd" stroke-width="1.0999999999999999" fill="none" stroke-dasharray="1.5 1.1" stroke-linejoin="round"/><path d="M744.4 351.2L872.9 351.2" stroke="#111" stroke-width="0.9" fill="none" stroke-dasharray="2.4 1.6" /><path d="M744.4 392.4L872.9 392.4" stroke="#111" stroke-width="0.9" fill="none" stroke-dasharray="2.4 1.6" /><rect x="748.5" y="361.8" width="20" height="20" rx="0" stroke="#222" stroke-width="0.8" fill="none" /><path d="M748.5 366L738 371.8L748.5 377.6" stroke="#444" stroke-width="0.7" fill="none" /><text x="758.5" y="373.6" text-anchor="middle" font-family="Liberation Sans" font-size="5" fill="#333">A7.01</text><text x="781.2" y="373.15" textLength="54.8" lengthAdjust="spacingAndGlyphs" xml:space="preserve" font-family="Liberation Sans" font-size="7.4" font-weight="bold" fill="#111">CONFERENCE  207</text><path d="M780.9 375L836.3 375" stroke="#111" stroke-width="0.9" fill="none" /><text x="797.3" y="384.35" textLength="33.8" lengthAdjust="spacingAndGlyphs" xml:space="preserve" font-family="Liberation Serif" font-size="7.4" font-weight="bold" fill="#3b5560">23.152 sq m</text><path d="M888 413.8V400A13.5 13.5 0 0 0 874 413" stroke="#222" stroke-width="0.8" fill="#fff" /><circle cx="879.5" cy="411.4" r="5" fill="#fff" stroke="#333" stroke-width="0.9"/><text x="879.5" y="412.91" text-anchor="middle" font-family="Liberation Sans" font-size="4.2"  fill="#444">207</text><path d="M897.8 322V413" stroke="#303030" stroke-width="3" fill="none" stroke-linejoin="round"/><path d="M897.8 322V413" stroke="#bdbdbd" stroke-width="1.7" fill="none" stroke-dasharray="1.5 1.1" stroke-linejoin="round"/><path d="M899.5 413V399A14 14 0 0 1 914 413" stroke="#222" stroke-width="0.8" fill="#fff" /><circle cx="908.7" cy="412.2" r="5" fill="#fff" stroke="#333" stroke-width="0.9"/><text x="908.7" y="413.71" text-anchor="middle" font-family="Liberation Sans" font-size="4.2"  fill="#444">208</text><rect x="910.5" y="339" width="51.2" height="25.3" rx="0" stroke="#111" stroke-width="0.9" fill="none" stroke-dasharray="2.4 1.6" /><text x="915.8" y="373.15" textLength="40.2" lengthAdjust="spacingAndGlyphs" xml:space="preserve" font-family="Liberation Sans" font-size="7.4" font-weight="bold" fill="#111">MEETING  208</text><path d="M915.5 375L956.3 375" stroke="#111" stroke-width="0.9" fill="none" /><path d="M975 322V381.5" stroke="#303030" stroke-width="2.4" fill="none" stroke-linejoin="round"/><path d="M975 322V381.5" stroke="#bdbdbd" stroke-width="1.0999999999999999" fill="none" stroke-dasharray="1.5 1.1" stroke-linejoin="round"/><path d="M914 411H926.4A53.1 53.1 0 0 1 1021.6 411H1034" stroke="#303030" stroke-width="2.4" fill="none" stroke-linejoin="round"/><path d="M914 411H926.4A53.1 53.1 0 0 1 1021.6 411H1034" stroke="#bdbdbd" stroke-width="1.0999999999999999" fill="none" stroke-dasharray="1.5 1.1" stroke-linejoin="round"/><rect x="987.3" y="339" width="51.7" height="25.3" rx="0" stroke="#111" stroke-width="0.9" fill="none" stroke-dasharray="2.4 1.6" /><text x="993.5" y="373.15" textLength="40.8" lengthAdjust="spacingAndGlyphs" xml:space="preserve" font-family="Liberation Sans" font-size="7.4" font-weight="bold" fill="#111">MEETING  209</text><path d="M993.2 375L1034.6 375" stroke="#111" stroke-width="0.9" fill="none" /><path d="M1048 414V399.5A14 14 0 0 0 1033.5 413" stroke="#222" stroke-width="0.8" fill="none" /><circle cx="1039.6" cy="412.2" r="5" fill="none" stroke="#333" stroke-width="0.9"/><text x="1039.6" y="413.71" text-anchor="middle" font-family="Liberation Sans" font-size="4.2"  fill="#444">209</text><path d="M974 333.2A4.47 4.47 0 0 1 982.76 333.2A4.47 4.47 0 0 1 991.51 333.2A4.47 4.47 0 0 1 1000.27 333.2A4.47 4.47 0 0 1 1009.02 333.2A4.47 4.47 0 0 1 1017.78 333.2A4.47 4.47 0 0 1 1026.53 333.2A4.47 4.47 0 0 1 1035.29 333.2A4.47 4.47 0 0 1 1044.04 333.2A4.47 4.47 0 0 1 1052.8 333.2A4.19 4.19 0 0 1 1052.8 341.41A4.19 4.19 0 0 1 1052.8 349.62A4.19 4.19 0 0 1 1052.8 357.83A4.19 4.19 0 0 1 1052.8 366.04A4.19 4.19 0 0 1 1052.8 374.25A4.19 4.19 0 0 1 1052.8 382.46A4.19 4.19 0 0 1 1052.8 390.67A4.19 4.19 0 0 1 1052.8 398.88A4.19 4.19 0 0 1 1052.8 407.09A4.19 4.19 0 0 1 1052.8 415.3A5.08 5.08 0 0 1 1042.87 414.53A5.08 5.08 0 0 1 1032.93 413.77A5.08 5.08 0 0 1 1023 413A5.63 5.63 0 0 1 1016.06 404.41A4.18 4.18 0 0 1 1010.8 398.13A4.18 4.18 0 0 1 1004.62 392.77A4.18 4.18 0 0 1 997.67 388.45A4.18 4.18 0 0 1 990.12 385.28A4.18 4.18 0 0 1 982.16 383.35A4.18 4.18 0 0 1 974 382.7A4.21 4.21 0 0 1 974 374.45A4.21 4.21 0 0 1 974 366.2A4.21 4.21 0 0 1 974 357.95A4.21 4.21 0 0 1 974 349.7A4.21 4.21 0 0 1 974 341.45A4.21 4.21 0 0 1 974 333.2Z" stroke="#e0151b" stroke-width="1.0" fill="none" /><path d="M985.5 383.4L985.5 394.2" stroke="#e0151b" stroke-width="1" fill="none" /><text x="954" y="404.59" textLength="42.8" lengthAdjust="spacingAndGlyphs" xml:space="preserve" font-family="Liberation Serif" font-size="11.6" font-weight="bold" fill="#e0151b">Room 001</text><path d="M948.9 412.2H1000.9Q994 425 974.9 425Q955.8 425 948.9 412.2Z" stroke="#222" stroke-width="0.9" fill="none" /><text x="953" y="451.05" textLength="48.5" lengthAdjust="spacingAndGlyphs" xml:space="preserve" font-family="Liberation Sans" font-size="7.4" font-weight="bold" fill="#111">RECEPTION  255</text><path d="M952.7 452.9L1001.8 452.9" stroke="#111" stroke-width="0.9" fill="none" /><path d="M1051.4 322V414" stroke="#303030" stroke-width="3" fill="none" stroke-linejoin="round"/><path d="M1051.4 322V414" stroke="#bdbdbd" stroke-width="1.7" fill="none" stroke-dasharray="1.5 1.1" stroke-linejoin="round"/><path d="M1060.5 414.5V400A14 14 0 0 1 1075 414.8" stroke="#222" stroke-width="0.8" fill="#fff" /><circle cx="1068.1" cy="414.9" r="5" fill="#fff" stroke="#333" stroke-width="0.9"/><text x="1068.1" y="416.41" text-anchor="middle" font-family="Liberation Sans" font-size="4.2"  fill="#444">210</text><rect x="1076.3" y="337.3" width="26.5" height="62.3" rx="0" stroke="#111" stroke-width="0.9" fill="none" stroke-dasharray="2.4 1.6" /><text x="1069" y="369.05" textLength="40.8" lengthAdjust="spacingAndGlyphs" xml:space="preserve" font-family="Liberation Sans" font-size="7.4" font-weight="bold" fill="#111">MEETING  210</text><path d="M1068.7 370.9L1110.1 370.9" stroke="#111" stroke-width="0.9" fill="none" /><path d="M1127.7 322V419.5" stroke="#303030" stroke-width="2.4" fill="none" stroke-linejoin="round"/><path d="M1127.7 322V419.5" stroke="#bdbdbd" stroke-width="1.0999999999999999" fill="none" stroke-dasharray="1.5 1.1" stroke-linejoin="round"/><path d="M1131 419.6V405A14 14 0 0 1 1145.5 420.3" stroke="#222" stroke-width="0.8" fill="#fff" /><circle cx="1138.3" cy="420" r="5" fill="#fff" stroke="#333" stroke-width="0.9"/><text x="1138.3" y="421.51" text-anchor="middle" font-family="Liberation Sans" font-size="4.2"  fill="#444">211</text><rect x="1147.5" y="350.6" width="63.5" height="36.1" rx="0" stroke="#111" stroke-width="0.9" fill="none" stroke-dasharray="2.4 1.6" /><text x="1151.2" y="370.55" textLength="55.1" lengthAdjust="spacingAndGlyphs" xml:space="preserve" font-family="Liberation Sans" font-size="7.4" font-weight="bold" fill="#111">CONFERENCE  211</text><path d="M1150.9 372.4L1206.6 372.4" stroke="#111" stroke-width="0.9" fill="none" /><path d="M1051.4 414H1060M1075 415L1127.7 419.2M1145.5 420.5L1212.4 425.2M1227 426L1322 433.7Q1333.2 434.3 1333.2 424V322" stroke="#303030" stroke-width="2.4" fill="none" stroke-linejoin="round"/><path d="M1051.4 414H1060M1075 415L1127.7 419.2M1145.5 420.5L1212.4 425.2M1227 426L1322 433.7Q1333.2 434.3 1333.2 424V322" stroke="#bdbdbd" stroke-width="1.0999999999999999" fill="none" stroke-dasharray="1.5 1.1" stroke-linejoin="round"/><path d="M1227 426V412A14 14 0 0 0 1212.5 425" stroke="#222" stroke-width="0.8" fill="#fff" /><circle cx="1219.1" cy="426" r="5" fill="#fff" stroke="#333" stroke-width="0.9"/><text x="1219.1" y="427.51" text-anchor="middle" font-family="Liberation Sans" font-size="4.2"  fill="#444">213A</text><path d="M1230.6 322V426.2" stroke="#303030" stroke-width="2.6" fill="none" stroke-linejoin="round"/><path d="M1230.6 322V426.2" stroke="#bdbdbd" stroke-width="1.3" fill="none" stroke-dasharray="1.5 1.1" stroke-linejoin="round"/><path d="M1230.6 376.9H1333.2" stroke="#303030" stroke-width="3" fill="none" stroke-linejoin="round"/><path d="M1230.6 376.9H1333.2" stroke="#bdbdbd" stroke-width="1.7" fill="none" stroke-dasharray="1.5 1.1" stroke-linejoin="round"/><path d="M1333.2 375.5L1317.2 375.5A16 16 0 0 1 1333.2 359.5" stroke="#222" stroke-width="0.8" fill="none" /><path d="M1333.2 378.5L1317.2 378.5A16 16 0 0 0 1333.2 394.5" stroke="#222" stroke-width="0.8" fill="none" /><circle cx="1332.7" cy="367.3" r="5" fill="none" stroke="#333" stroke-width="0.9"/><text x="1332.7" y="368.81" text-anchor="middle" font-family="Liberation Sans" font-size="4.2"  fill="#444">212</text><circle cx="1332.7" cy="388" r="5" fill="#fff" stroke="#333" stroke-width="0.9"/><text x="1332.7" y="389.51" text-anchor="middle" font-family="Liberation Sans" font-size="4.2"  fill="#444">213</text><text x="1265.8" y="341.61" textLength="31.7" lengthAdjust="spacingAndGlyphs" xml:space="preserve" font-family="Liberation Sans" font-size="7.6"  fill="#e0151b">204.512 sf</text><text x="1258.3" y="352.75" textLength="35.7" lengthAdjust="spacingAndGlyphs" xml:space="preserve" font-family="Liberation Sans" font-size="7.4" font-weight="bold" fill="#111">OFFICE  212</text><path d="M1258 354.6L1294.3 354.6" stroke="#111" stroke-width="0.9" fill="none" /><text x="1258.3" y="406.55" textLength="35.7" lengthAdjust="spacingAndGlyphs" xml:space="preserve" font-family="Liberation Sans" font-size="7.4" font-weight="bold" fill="#111">OFFICE  213</text><path d="M1258 408.4L1294.3 408.4" stroke="#111" stroke-width="0.9" fill="none" /><path d="M1383.8 322V428Q1383.8 437.6 1393 438.3L1477 444.8Q1486.3 445.3 1486.3 436V322" stroke="#303030" stroke-width="2.4" fill="none" stroke-linejoin="round"/><path d="M1383.8 322V428Q1383.8 437.6 1393 438.3L1477 444.8Q1486.3 445.3 1486.3 436V322" stroke="#bdbdbd" stroke-width="1.0999999999999999" fill="none" stroke-dasharray="1.5 1.1" stroke-linejoin="round"/><path d="M1435.2 322V441.5" stroke="#303030" stroke-width="2.8" fill="none" stroke-linejoin="round"/><path d="M1435.2 322V441.5" stroke="#bdbdbd" stroke-width="1.4999999999999998" fill="none" stroke-dasharray="1.5 1.1" stroke-linejoin="round"/><path d="M1383.8 377.7H1486.3" stroke="#303030" stroke-width="3" fill="none" stroke-linejoin="round"/><path d="M1383.8 377.7H1486.3" stroke="#bdbdbd" stroke-width="1.7" fill="none" stroke-dasharray="1.5 1.1" stroke-linejoin="round"/><path d="M1383.8 376.2L1400.3 376.2A16.5 16.5 0 0 0 1383.8 359.7" stroke="#222" stroke-width="0.8" fill="none" /><path d="M1383.8 379.2L1400.3 379.2A16.5 16.5 0 0 1 1383.8 395.7" stroke="#222" stroke-width="0.8" fill="none" /><path d="M1486.3 376.2L1469.8 376.2A16.5 16.5 0 0 1 1486.3 359.7" stroke="#222" stroke-width="0.8" fill="none" /><path d="M1486.3 379.2L1469.8 379.2A16.5 16.5 0 0 0 1486.3 395.7" stroke="#222" stroke-width="0.8" fill="none" /><circle cx="1383.5" cy="367.3" r="5" fill="none" stroke="#c22" stroke-width="0.9"/><text x="1383.5" y="368.81" text-anchor="middle" font-family="Liberation Sans" font-size="4.2"  fill="#444">214</text><circle cx="1383.5" cy="387.9" r="5" fill="none" stroke="#333" stroke-width="0.9"/><text x="1383.5" y="389.41" text-anchor="middle" font-family="Liberation Sans" font-size="4.2"  fill="#444">215</text><circle cx="1486" cy="367.3" r="5" fill="none" stroke="#c22" stroke-width="0.9"/><text x="1486" y="368.81" text-anchor="middle" font-family="Liberation Sans" font-size="4.2"  fill="#444">216</text><circle cx="1486" cy="387.9" r="5" fill="none" stroke="#c22" stroke-width="0.9"/><text x="1486" y="389.41" text-anchor="middle" font-family="Liberation Sans" font-size="4.2"  fill="#444">217</text><text x="1396.8" y="331.41" textLength="26" lengthAdjust="spacingAndGlyphs" xml:space="preserve" font-family="Liberation Serif" font-size="7" font-weight="bold" fill="#a01ce0">99.254 sf</text><text x="1442.5" y="331.41" textLength="38.7" lengthAdjust="spacingAndGlyphs" xml:space="preserve" font-family="Liberation Serif" font-size="7" font-weight="bold" fill="#a01ce0">1,206.05 cu ft</text><text x="1446" y="407.41" textLength="29.5" lengthAdjust="spacingAndGlyphs" xml:space="preserve" font-family="Liberation Serif" font-size="7" font-weight="bold" fill="#a01ce0">119.488 sf</text><text x="1387.6" y="351.55" textLength="40.5" lengthAdjust="spacingAndGlyphs" xml:space="preserve" font-family="Liberation Sans" font-size="7.4" font-weight="bold" fill="#111">MEETING  214</text><path d="M1387.3 353.4L1428.4 353.4" stroke="#111" stroke-width="0.9" fill="none" /><text x="1439.8" y="352.85" textLength="40.9" lengthAdjust="spacingAndGlyphs" xml:space="preserve" font-family="Liberation Sans" font-size="7.4" font-weight="bold" fill="#111">MEETING  216</text><path d="M1439.5 354.7L1481 354.7" stroke="#111" stroke-width="0.9" fill="none" /><text x="1387.6" y="421.25" textLength="40.9" lengthAdjust="spacingAndGlyphs" xml:space="preserve" font-family="Liberation Sans" font-size="7.4" font-weight="bold" fill="#111">MEETING  215</text><path d="M1387.3 423.1L1428.8 423.1" stroke="#111" stroke-width="0.9" fill="none" /><text x="1439.8" y="421.25" textLength="40.9" lengthAdjust="spacingAndGlyphs" xml:space="preserve" font-family="Liberation Sans" font-size="7.4" font-weight="bold" fill="#111">MEETING  217</text><path d="M1439.5 423.1L1481 423.1" stroke="#111" stroke-width="0.9" fill="none" /><text x="1551.7" y="397.95" textLength="53.1" lengthAdjust="spacingAndGlyphs" xml:space="preserve" font-family="Liberation Sans" font-size="7.4" font-weight="bold" fill="#111">OPEN OFFICE  218</text><path d="M1551.4 399.8L1605.1 399.8" stroke="#111" stroke-width="0.9" fill="none" /><path d="M367.5 453.8L465.4 446.5" stroke="#333" stroke-width="0.9" fill="none" /><path d="M566 438.9L624 434" stroke="#333" stroke-width="0.9" fill="none" stroke-dasharray="1.4 1.4" /><path d="M1486 445L1583 454.8" stroke="#333" stroke-width="0.9" fill="none" /><path d="M272 462.6L359.5 454.3Q368.6 453.6 368.6 463V668" stroke="#303030" stroke-width="2.4" fill="none" stroke-linejoin="round"/><path d="M272 462.6L359.5 454.3Q368.6 453.6 368.6 463V668" stroke="#bdbdbd" stroke-width="1.0999999999999999" fill="none" stroke-dasharray="1.5 1.1" stroke-linejoin="round"/><path d="M272 512.8H368.6" stroke="#303030" stroke-width="3" fill="none" stroke-linejoin="round"/><path d="M272 512.8H368.6" stroke="#bdbdbd" stroke-width="1.7" fill="none" stroke-dasharray="1.5 1.1" stroke-linejoin="round"/><path d="M272 615H368.6" stroke="#303030" stroke-width="3" fill="none" stroke-linejoin="round"/><path d="M272 615H368.6" stroke="#bdbdbd" stroke-width="1.7" fill="none" stroke-dasharray="1.5 1.1" stroke-linejoin="round"/><rect x="300.2" y="526" width="40.4" height="76.6" rx="0" stroke="#222" stroke-width="1" fill="none" /><path d="M369.5 511.3H353.5A16 16 0 0 1 369.5 495.3" stroke="#222" stroke-width="0.8" fill="none" /><path d="M369.5 514.3H353.5A16 16 0 0 0 369.5 530.3" stroke="#222" stroke-width="0.8" fill="none" /><path d="M369.5 613.5H353.5A16 16 0 0 1 369.5 597.5" stroke="#222" stroke-width="0.8" fill="none" /><path d="M369.5 616.5H353.5A16 16 0 0 0 369.5 632.5" stroke="#222" stroke-width="0.8" fill="none" /><circle cx="367.5" cy="502.9" r="5" fill="none" stroke="#333" stroke-width="0.9"/><text x="367.5" y="504.41" text-anchor="middle" font-family="Liberation Sans" font-size="4.2"  fill="#444">247</text><circle cx="367.5" cy="523.3" r="5" fill="none" stroke="#333" stroke-width="0.9"/><text x="367.5" y="524.81" text-anchor="middle" font-family="Liberation Sans" font-size="4.2"  fill="#444">246</text><circle cx="367.5" cy="604.9" r="5" fill="none" stroke="#333" stroke-width="0.9"/><text x="367.5" y="606.41" text-anchor="middle" font-family="Liberation Sans" font-size="4.2"  fill="#444">246A</text><circle cx="367.5" cy="625.3" r="5" fill="none" stroke="#333" stroke-width="0.9"/><text x="367.5" y="626.81" text-anchor="middle" font-family="Liberation Sans" font-size="4.2"  fill="#444">245</text><path d="M272.3 462.4A4.6 4.6 0 0 1 281.27 461.54A4.6 4.6 0 0 1 290.24 460.68A4.6 4.6 0 0 1 299.21 459.82A4.6 4.6 0 0 1 308.18 458.96A4.6 4.6 0 0 1 317.15 458.1A4.6 4.6 0 0 1 326.12 457.24A4.6 4.6 0 0 1 335.09 456.38A4.6 4.6 0 0 1 344.06 455.52A4.6 4.6 0 0 1 353.03 454.66A4.6 4.6 0 0 1 362 453.8A5.32 5.32 0 0 1 370 460.5A4.41 4.41 0 0 1 370.01 469.15A4.41 4.41 0 0 1 370.02 477.79A4.41 4.41 0 0 1 370.02 486.44A4.41 4.41 0 0 1 370.03 495.08A4.41 4.41 0 0 1 370.04 503.73A4.41 4.41 0 0 1 370.05 512.38A4.41 4.41 0 0 1 370.06 521.02A4.41 4.41 0 0 1 370.07 529.67A4.41 4.41 0 0 1 370.07 538.31A4.41 4.41 0 0 1 370.08 546.96A4.41 4.41 0 0 1 370.09 555.6A4.41 4.41 0 0 1 370.1 564.25A4.41 4.41 0 0 1 370.11 572.9A4.41 4.41 0 0 1 370.12 581.54A4.41 4.41 0 0 1 370.12 590.19A4.41 4.41 0 0 1 370.13 598.83A4.41 4.41 0 0 1 370.14 607.48A4.41 4.41 0 0 1 370.15 616.12A4.41 4.41 0 0 1 370.16 624.77A4.41 4.41 0 0 1 370.17 633.42A4.41 4.41 0 0 1 370.18 642.06A4.41 4.41 0 0 1 370.18 650.71A4.41 4.41 0 0 1 370.19 659.35A4.41 4.41 0 0 1 370.2 668" stroke="#3560b8" stroke-width="1.0" fill="none" /><path d="M272.3 668A4.37 4.37 0 0 1 272.3 659.43A4.37 4.37 0 0 1 272.3 650.87A4.37 4.37 0 0 1 272.3 642.3A4.37 4.37 0 0 1 272.3 633.73A4.37 4.37 0 0 1 272.3 625.17A4.37 4.37 0 0 1 272.3 616.6A4.37 4.37 0 0 1 272.3 608.03A4.37 4.37 0 0 1 272.3 599.47A4.37 4.37 0 0 1 272.3 590.9A4.37 4.37 0 0 1 272.3 582.33A4.37 4.37 0 0 1 272.3 573.77A4.37 4.37 0 0 1 272.3 565.2A4.37 4.37 0 0 1 272.3 556.63A4.37 4.37 0 0 1 272.3 548.07A4.37 4.37 0 0 1 272.3 539.5A4.37 4.37 0 0 1 272.3 530.93A4.37 4.37 0 0 1 272.3 522.37A4.37 4.37 0 0 1 272.3 513.8A4.37 4.37 0 0 1 272.3 505.23A4.37 4.37 0 0 1 272.3 496.67A4.37 4.37 0 0 1 272.3 488.1A4.37 4.37 0 0 1 272.3 479.53A4.37 4.37 0 0 1 272.3 470.97A4.37 4.37 0 0 1 272.3 462.4" stroke="#3560b8" stroke-width="1.0" fill="none" /><text x="299.5" y="487.35" textLength="40.4" lengthAdjust="spacingAndGlyphs" xml:space="preserve" font-family="Liberation Sans" font-size="7.4" font-weight="bold" fill="#111">MEETING  247</text><path d="M299.2 489.2L340.2 489.2" stroke="#111" stroke-width="0.9" fill="none" /><text x="295.5" y="569.45" textLength="54.3" lengthAdjust="spacingAndGlyphs" xml:space="preserve" font-family="Liberation Sans" font-size="7.4" font-weight="bold" fill="#111">CONFERENCE  246</text><path d="M295.2 571.3L350.1 571.3" stroke="#111" stroke-width="0.9" fill="none" /><text x="302.2" y="647.15" textLength="41.2" lengthAdjust="spacingAndGlyphs" xml:space="preserve" font-family="Liberation Sans" font-size="7.4" font-weight="bold" fill="#111">MEETING  245</text><path d="M301.9 649L343.7 649" stroke="#111" stroke-width="0.9" fill="none" /><path d="M737 480.4H409.5Q399.5 480.4 399.5 490.4V638.1Q399.5 648.1 409.5 648.1H737" stroke="#222" stroke-width="0.9" fill="none" stroke-dasharray="1.8 1.5" /><text x="519.9" y="569.45" textLength="54.3" lengthAdjust="spacingAndGlyphs" xml:space="preserve" font-family="Liberation Sans" font-size="7.4" font-weight="bold" fill="#111">OPEN OFFICE  248</text><path d="M519.6 571.3L574.5 571.3" stroke="#111" stroke-width="0.9" fill="none" /><text x="599" y="568.9" textLength="55" lengthAdjust="spacingAndGlyphs" xml:space="preserve" font-family="Liberation Sans" font-size="9" font-weight="bold" fill="#e0151b">160.886 sq m</text><path d="M677.6 495.6H729.2Q738.2 495.6 738.2 504.6V623.4Q738.2 632.4 729.2 632.4H677.6Q668.6 632.4 668.6 623.4V504.6Q668.6 495.6 677.6 495.6Z" stroke="#303030" stroke-width="2.4" fill="none" stroke-linejoin="round"/><path d="M677.6 495.6H729.2Q738.2 495.6 738.2 504.6V623.4Q738.2 632.4 729.2 632.4H677.6Q668.6 632.4 668.6 623.4V504.6Q668.6 495.6 677.6 495.6Z" stroke="#bdbdbd" stroke-width="1.0999999999999999" fill="none" stroke-dasharray="1.5 1.1" stroke-linejoin="round"/><path d="M668.6 564H750" stroke="#303030" stroke-width="2.6" fill="none" stroke-linejoin="round"/><path d="M668.6 564H750" stroke="#bdbdbd" stroke-width="1.3" fill="none" stroke-dasharray="1.5 1.1" stroke-linejoin="round"/><path d="M668.6 562.5H684A15.5 15.5 0 0 0 668.6 547" stroke="#222" stroke-width="0.8" fill="none" /><path d="M668.6 565.5H684A15.5 15.5 0 0 1 668.6 581" stroke="#222" stroke-width="0.8" fill="none" /><circle cx="668.6" cy="554.3" r="5" fill="none" stroke="#333" stroke-width="0.9"/><text x="668.6" y="555.81" text-anchor="middle" font-family="Liberation Sans" font-size="4.2"  fill="#444">249</text><circle cx="668.6" cy="574.7" r="5" fill="none" stroke="#333" stroke-width="0.9"/><text x="668.6" y="576.21" text-anchor="middle" font-family="Liberation Sans" font-size="4.2"  fill="#444">250</text><text x="694.7" y="530.65" textLength="35.7" lengthAdjust="spacingAndGlyphs" xml:space="preserve" font-family="Liberation Sans" font-size="7.4" font-weight="bold" fill="#111">OFFICE  249</text><path d="M694.4 532.5L730.7 532.5" stroke="#111" stroke-width="0.9" fill="none" /><text x="694.7" y="598.75" textLength="31" lengthAdjust="spacingAndGlyphs" xml:space="preserve" font-family="Liberation Sans" font-size="7.4" font-weight="bold" fill="#111">COPY  250</text><path d="M694.4 600.6L726 600.6" stroke="#111" stroke-width="0.9" fill="none" /><path d="M737 472Q737 464 746 463.6L764 465.5Q768.5 466 768.5 470V480.5M816.5 481V474Q816.5 470.6 820 470.8L936 478.6Q946.2 479.6 946.2 489V634Q946.2 646.5 934 648.6L820 657.8Q816.5 658 816.5 654.5V647M768.5 647.5V658Q768.5 662.5 764 663L746 664Q737 664 737 656V472" stroke="#2a2a2a" stroke-width="2.6" fill="none" /><path d="M737 472Q737 464 746 463.6L764 465.5Q768.5 466 768.5 470V480.5M816.5 481V474Q816.5 470.6 820 470.8L936 478.6Q946.2 479.6 946.2 489V634Q946.2 646.5 934 648.6L820 657.8Q816.5 658 816.5 654.5V647M768.5 647.5V658Q768.5 662.5 764 663L746 664Q737 664 737 656V472" stroke="#ddd" stroke-width="1" fill="none" /><path d="M768.5 465.5L880 473.5L946 486" stroke="#222" stroke-width="0.9" fill="none" stroke-dasharray="2.4 1.6" /><path d="M745 661Q745 669 752 669.3L770 668.2L905 657.5" stroke="#222" stroke-width="0.9" fill="none" stroke-dasharray="5 2.5" /><path d="M746.2 470L746.2 658" stroke="#222" stroke-width="0.9" fill="none" stroke-dasharray="5 2.5" /><path d="M750.2 481.8H775.5M809 481.8H902.2M750.2 480.4V647.6M750.2 646.2H775.5M809 646.2H876.6" stroke="#111" stroke-width="3" fill="none" stroke-linejoin="miter"/><path d="M750.2 481.8H775.5M809 481.8H902.2M750.2 480.4V647.6M750.2 646.2H775.5M809 646.2H876.6" stroke="#f4f4f4" stroke-width="0.8999999999999999" fill="none" stroke-dasharray="2 1.5" stroke-linejoin="miter"/><path d="M792 481V647" stroke="#111" stroke-width="3" fill="none" stroke-linejoin="miter"/><path d="M792 481V647" stroke="#f4f4f4" stroke-width="0.8999999999999999" fill="none" stroke-dasharray="2 1.5" stroke-linejoin="miter"/><path d="M750.2 578.7H902.5" stroke="#111" stroke-width="2.8" fill="none" stroke-linejoin="miter"/><path d="M750.2 578.7H902.5" stroke="#f4f4f4" stroke-width="0.6999999999999997" fill="none" stroke-dasharray="2 1.5" stroke-linejoin="miter"/><path d="M880.8 481.8V578.7" stroke="#111" stroke-width="2.2" fill="none" stroke-linejoin="miter"/><path d="M880.8 481.8V578.7" stroke="#f4f4f4" stroke-width="0.5" fill="none" stroke-dasharray="2 1.5" stroke-linejoin="miter"/><path d="M902.3 481.8V646" stroke="#111" stroke-width="2.4" fill="none" stroke-linejoin="miter"/><path d="M902.3 481.8V646" stroke="#f4f4f4" stroke-width="0.5" fill="none" stroke-dasharray="2 1.5" stroke-linejoin="miter"/><path d="M848 499V535H792" stroke="#111" stroke-width="2.4" fill="none" stroke-linejoin="miter"/><path d="M848 499V535H792" stroke="#f4f4f4" stroke-width="0.5" fill="none" stroke-dasharray="2 1.5" stroke-linejoin="miter"/><path d="M826.7 578.7V613.5H811.5M876.7 578.7V614.5H886" stroke="#111" stroke-width="2.4" fill="none" stroke-linejoin="miter"/><path d="M826.7 578.7V613.5H811.5M876.7 578.7V614.5H886" stroke="#f4f4f4" stroke-width="0.5" fill="none" stroke-dasharray="2 1.5" stroke-linejoin="miter"/><path d="M826.6 646V632.8H876.6V646M876.6 632.8H902" stroke="#111" stroke-width="2.2" fill="none" stroke-linejoin="miter"/><path d="M826.6 646V632.8H876.6V646M876.6 632.8H902" stroke="#f4f4f4" stroke-width="0.5" fill="none" stroke-dasharray="2 1.5" stroke-linejoin="miter"/><path d="M737 505L750 505" stroke="#222" stroke-width="1" fill="none" /><path d="M737 623L750 623" stroke="#222" stroke-width="1" fill="none" /><rect x="751.5" y="523.7" width="39.5" height="38.7" rx="0" stroke="#222" stroke-width="0.8" fill="none" /><path d="M752 526L770.5 526" stroke="#111" stroke-width="1.6" fill="none" stroke-dasharray="1.6 2.2" /><path d="M752 530L770.5 530" stroke="#111" stroke-width="1.6" fill="none" stroke-dasharray="1.6 2.2" /><path d="M752 534L770.5 534" stroke="#111" stroke-width="1.6" fill="none" stroke-dasharray="1.6 2.2" /><path d="M752 538L770.5 538" stroke="#111" stroke-width="1.6" fill="none" stroke-dasharray="1.6 2.2" /><path d="M752 542L770.5 542" stroke="#111" stroke-width="1.6" fill="none" stroke-dasharray="1.6 2.2" /><path d="M752 546L770.5 546" stroke="#111" stroke-width="1.6" fill="none" stroke-dasharray="1.6 2.2" /><path d="M752 550L770.5 550" stroke="#111" stroke-width="1.6" fill="none" stroke-dasharray="1.6 2.2" /><path d="M752 554L770.5 554" stroke="#111" stroke-width="1.6" fill="none" stroke-dasharray="1.6 2.2" /><path d="M752 558L770.5 558" stroke="#111" stroke-width="1.6" fill="none" stroke-dasharray="1.6 2.2" /><path d="M776.5 526L790.5 526" stroke="#222" stroke-width="0.8" fill="none" /><path d="M776.5 530L790.5 530" stroke="#222" stroke-width="0.8" fill="none" /><path d="M776.5 534L790.5 534" stroke="#222" stroke-width="0.8" fill="none" /><path d="M776.5 538L790.5 538" stroke="#222" stroke-width="0.8" fill="none" /><path d="M776.5 542L790.5 542" stroke="#222" stroke-width="0.8" fill="none" /><path d="M776.5 546L790.5 546" stroke="#222" stroke-width="0.8" fill="none" /><path d="M776.5 550L790.5 550" stroke="#222" stroke-width="0.8" fill="none" /><path d="M776.5 523.7L776.5 557" stroke="#222" stroke-width="0.8" fill="none" /><path d="M783.5 523.7L783.5 551" stroke="#222" stroke-width="0.8" fill="none" /><path d="M752 566L902 572" stroke="#222" stroke-width="0.9" fill="none" stroke-dasharray="5 2.5" /><text x="783.4" y="521.3" text-anchor="middle" font-family="Liberation Sans" font-size="4.6" fill="#555">UP</text><rect x="797.5" y="518.5" width="9.6" height="15" rx="0" stroke="#111" stroke-width="0.9" fill="none" stroke-dasharray="2 1.5" /><rect x="809.8" y="518.5" width="9.6" height="15" rx="0" stroke="#111" stroke-width="0.9" fill="none" stroke-dasharray="2 1.5" /><rect x="822.1" y="518.5" width="9.6" height="15" rx="0" stroke="#111" stroke-width="0.9" fill="none" stroke-dasharray="2 1.5" /><rect x="834.4" y="518.5" width="9.6" height="15" rx="0" stroke="#111" stroke-width="0.9" fill="none" stroke-dasharray="2 1.5" /><rect x="881.8" y="487" width="14.2" height="90" rx="0" stroke="#222" stroke-width="0.8" fill="none" /><path d="M881.8 487L896 577M896 487L881.8 577" stroke="#222" stroke-width="0.7" fill="none" /><path d="M776 482A14.5 14.5 0 0 0 790.5 496.5" stroke="#222" stroke-width="0.8" fill="none" /><path d="M808 482A14.5 14.5 0 0 1 793.5 496.5" stroke="#222" stroke-width="0.8" fill="none" /><circle cx="782.3" cy="482" r="5" fill="#fff" stroke="#333" stroke-width="0.9"/><text x="782.3" y="483.51" text-anchor="middle" font-family="Liberation Sans" font-size="4.2"  fill="#444">251</text><circle cx="802.8" cy="482" r="5" fill="#fff" stroke="#333" stroke-width="0.9"/><text x="802.8" y="483.51" text-anchor="middle" font-family="Liberation Sans" font-size="4.2"  fill="#444">253</text><path d="M792 480V497.5" stroke="#111" stroke-width="4.6" fill="none" /><path d="M792 481V497" stroke="#f4f4f4" stroke-width="1.2" fill="none" stroke-dasharray="2 1.5" /><path d="M848 499A13 13 0 0 0 862.5 485.5H847" stroke="#222" stroke-width="0.8" fill="none" /><circle cx="850" cy="491.5" r="5" fill="#fff" stroke="#333" stroke-width="0.9"/><text x="850" y="493.01" text-anchor="middle" font-family="Liberation Sans" font-size="4.2"  fill="#444">253A</text><path d="M776 646A14.5 14.5 0 0 1 790.5 631.5" stroke="#222" stroke-width="0.8" fill="none" /><path d="M808 646A14.5 14.5 0 0 0 793.5 631.5" stroke="#222" stroke-width="0.8" fill="none" /><circle cx="782.3" cy="646.5" r="5" fill="#fff" stroke="#333" stroke-width="0.9"/><text x="782.3" y="648.01" text-anchor="middle" font-family="Liberation Sans" font-size="4.2"  fill="#444">252</text><circle cx="802.8" cy="646.5" r="5" fill="#fff" stroke="#333" stroke-width="0.9"/><text x="802.8" y="648.01" text-anchor="middle" font-family="Liberation Sans" font-size="4.2"  fill="#444">254</text><path d="M792 613V647.5" stroke="#111" stroke-width="4.6" fill="none" /><path d="M792 614V647" stroke="#f4f4f4" stroke-width="1.2" fill="none" stroke-dasharray="2 1.5" /><path d="M794 628A15 15 0 0 0 809 613" stroke="#222" stroke-width="0.8" fill="none" /><circle cx="802.5" cy="614" r="5" fill="#fff" stroke="#333" stroke-width="0.9"/><text x="802.5" y="615.51" text-anchor="middle" font-family="Liberation Sans" font-size="4.2"  fill="#444">254A</text><path d="M876.7 614.5A14 14 0 0 1 892 629" stroke="#222" stroke-width="0.8" fill="none" /><circle cx="880.5" cy="622.8" r="5" fill="#fff" stroke="#333" stroke-width="0.9"/><text x="880.5" y="624.31" text-anchor="middle" font-family="Liberation Sans" font-size="4.2"  fill="#444">254B</text><rect x="750.5" y="609.5" width="12.5" height="30.5" rx="0" stroke="#444" stroke-width="0.8" fill="none" /><rect x="753.5" y="625.5" width="6.5" height="9" rx="0" stroke="#111" stroke-width="1.2" fill="none" /><rect x="795" y="580.5" width="8.5" height="9.5" rx="0" stroke="#444" stroke-width="0.8" fill="none" /><path d="M826 572L813.5 596.5" stroke="#222" stroke-width="0.9" fill="none" /><circle cx="813.5" cy="597" r="1.3" fill="#111"/><circle cx="835.2" cy="587.3" r="2.6" fill="#555" stroke="#111" stroke-width="0.8"/><circle cx="835.2" cy="582.6" r="1.1" fill="#111"/><circle cx="851" cy="587.3" r="2.6" fill="#555" stroke="#111" stroke-width="0.8"/><circle cx="851" cy="582.6" r="1.1" fill="#111"/><circle cx="867" cy="587.3" r="2.6" fill="#555" stroke="#111" stroke-width="0.8"/><circle cx="867" cy="582.6" r="1.1" fill="#111"/><circle cx="894.5" cy="587.3" r="2.6" fill="#555" stroke="#111" stroke-width="0.8"/><circle cx="894.5" cy="582.6" r="1.1" fill="#111"/><path d="M843 578.7V604M859 578.7V604M829 595V604M832 595Q838 594 838 603H843M848 595Q854 594 854 603H859M864 595Q870 594 870 603" stroke="#222" stroke-width="1" fill="none" /><rect x="836.4" y="636" width="9" height="6" rx="0" stroke="#111" stroke-width="1.3" fill="none" /><rect x="839.6" y="638.5" width="2.6" height="3.5" rx="0" stroke="none" fill="#111" /><rect x="857.8" y="636" width="9" height="6" rx="0" stroke="#111" stroke-width="1.3" fill="none" /><rect x="861" y="638.5" width="2.6" height="3.5" rx="0" stroke="none" fill="#111" /><rect x="910.3" y="498.5" width="31.2" height="41.5" rx="0" stroke="#4a5a2a" stroke-width="0.8" fill="none" /><path d="M910.3 498.5L941.5 540M941.5 498.5L910.3 540" stroke="#4a5a2a" stroke-width="0.6400000000000001" fill="none" /><rect x="910.3" y="543.5" width="31.2" height="42.4" rx="0" stroke="#4a5a2a" stroke-width="0.8" fill="none" /><path d="M910.3 543.5L941.5 585.9M941.5 543.5L910.3 585.9" stroke="#4a5a2a" stroke-width="0.6400000000000001" fill="none" /><path d="M910.2 482.3H939.8Q945.8 482.3 945.8 488.3V581.8Q945.8 587.8 939.8 587.8H910.2Q904.2 587.8 904.2 581.8V488.3Q904.2 482.3 910.2 482.3Z" stroke="#4f6b25" stroke-width="1.5" fill="none" /><path d="M905 484A4.12 4.12 0 0 1 913.08 484A4.12 4.12 0 0 1 921.16 484A4.12 4.12 0 0 1 929.24 484A4.12 4.12 0 0 1 937.32 484A4.12 4.12 0 0 1 945.4 484A4.33 4.33 0 0 1 945.4 492.5A4.33 4.33 0 0 1 945.4 501A4.33 4.33 0 0 1 945.4 509.5A4.33 4.33 0 0 1 945.4 518A4.33 4.33 0 0 1 945.4 526.5A4.33 4.33 0 0 1 945.4 535A4.33 4.33 0 0 1 945.4 543.5A4.33 4.33 0 0 1 945.4 552A4.33 4.33 0 0 1 945.4 560.5A4.33 4.33 0 0 1 945.4 569A4.33 4.33 0 0 1 945.4 577.5A4.33 4.33 0 0 1 945.4 586A4.12 4.12 0 0 1 937.32 586A4.12 4.12 0 0 1 929.24 586A4.12 4.12 0 0 1 921.16 586A4.12 4.12 0 0 1 913.08 586A4.12 4.12 0 0 1 905 586A4.33 4.33 0 0 1 905 577.5A4.33 4.33 0 0 1 905 569A4.33 4.33 0 0 1 905 560.5A4.33 4.33 0 0 1 905 552A4.33 4.33 0 0 1 905 543.5A4.33 4.33 0 0 1 905 535A4.33 4.33 0 0 1 905 526.5A4.33 4.33 0 0 1 905 518A4.33 4.33 0 0 1 905 509.5A4.33 4.33 0 0 1 905 501A4.33 4.33 0 0 1 905 492.5A4.33 4.33 0 0 1 905 484Z" stroke="#e0151b" stroke-width="1.0" fill="none" /><path d="M904 591H946" stroke="#111" stroke-width="2.2" fill="none" stroke-linejoin="miter"/><path d="M904 591H946" stroke="#f4f4f4" stroke-width="0.5" fill="none" stroke-dasharray="2 1.5" stroke-linejoin="miter"/><path d="M904 591V633H946" stroke="#111" stroke-width="2" fill="none" stroke-linejoin="miter"/><path d="M904 591V633H946" stroke="#f4f4f4" stroke-width="0.5" fill="none" stroke-dasharray="2 1.5" stroke-linejoin="miter"/><path d="M908 596L908 630" stroke="#222" stroke-width="0.8" fill="none" stroke-dasharray="3 2" /><rect x="913" y="607.7" width="25.9" height="21" rx="0" stroke="#222" stroke-width="0.8" fill="none" /><path d="M913 607.7L938.9 628.7M938.9 607.7L913 628.7" stroke="#222" stroke-width="0.6400000000000001" fill="none" /><rect x="925.6" y="593.6" width="13.3" height="11.6" rx="0" stroke="#222" stroke-width="0.8" fill="none" /><path d="M925.6 605.2L938.9 593.6" stroke="#222" stroke-width="0.7" fill="none" /><path d="M947 540L956 540" stroke="#e0151b" stroke-width="1" fill="none" /><text x="957.8" y="538.33" textLength="39.2" lengthAdjust="spacingAndGlyphs" xml:space="preserve" font-family="Liberation Sans" font-size="6.2" font-weight="bold" fill="#e0151b">Split into three</text><text x="956.6" y="560.25" textLength="34.7" lengthAdjust="spacingAndGlyphs" xml:space="preserve" font-family="Liberation Sans" font-size="7.4" font-weight="bold" fill="#111">LOBBY  256</text><path d="M956.3 562.1L991.6 562.1" stroke="#111" stroke-width="0.9" fill="none" /><text x="755.7" y="508.25" textLength="31.2" lengthAdjust="spacingAndGlyphs" xml:space="preserve" font-family="Liberation Sans" font-size="7.4" font-weight="bold" fill="#111">STAIR  251</text><path d="M755.4 510.1L787.2 510.1" stroke="#111" stroke-width="0.9" fill="none" /><text x="795.5" y="508.25" textLength="49.5" lengthAdjust="spacingAndGlyphs" xml:space="preserve" font-family="Liberation Sans" font-size="7.4" font-weight="bold" fill="#111">ELECTRICAL  253</text><path d="M795.2 510.1L845.3 510.1" stroke="#111" stroke-width="0.9" fill="none" /><text x="813.4" y="548.25" textLength="46.6" lengthAdjust="spacingAndGlyphs" xml:space="preserve" font-family="Liberation Sans" font-size="7.4" font-weight="bold" fill="#111">STORAGE  253A</text><path d="M813.1 550.1L860.3 550.1" stroke="#111" stroke-width="0.9" fill="none" /><text x="804.2" y="569.05" textLength="45.9" lengthAdjust="spacingAndGlyphs" xml:space="preserve" font-family="Liberation Sans" font-size="7.4" font-weight="bold" fill="#111">STORAGE  254A</text><path d="M803.9 570.9L850.4 570.9" stroke="#111" stroke-width="0.9" fill="none" /><text x="822.6" y="624.75" textLength="52" lengthAdjust="spacingAndGlyphs" xml:space="preserve" font-family="Liberation Sans" font-size="7.4" font-weight="bold" fill="#111">WOMEN&#x27;S RR  254</text><path d="M822.3 626.6L874.9 626.6" stroke="#111" stroke-width="0.9" fill="none" /><g transform="translate(769.2 639.5) rotate(-90)"><text x="0" y="2.55" textLength="56.7" lengthAdjust="spacingAndGlyphs" xml:space="preserve" font-family="Liberation Sans" font-size="7.4" font-weight="bold" fill="#111">MOTHER&#x27;S RM.  252</text><path d="M-0.3 4.4L57 4.4" stroke="#111" stroke-width="0.9" fill="none" /></g><path d="M898 657.8H905L914.3 672H923" stroke="#222" stroke-width="0.8" fill="none" /><circle cx="933.2" cy="672.2" r="10" fill="#fff" stroke="#333" stroke-width="0.9"/><path d="M923.2 672.2L943.2 672.2" stroke="#222" stroke-width="0.8" fill="none" /><text x="933.2" y="670.5" text-anchor="middle" font-family="Liberation Sans" font-size="4.6" fill="#444">1</text><text x="933.2" y="677.2" text-anchor="middle" font-family="Liberation Sans" font-size="4.6" fill="#444">A6.02</text><path d="M1003 490Q1003 479 1016 477.5L1126 469.8Q1130.3 469.6 1130.8 473V480M1180.3 480.5V471Q1180.3 466.6 1185 466.3L1202 464.2Q1211.6 464 1211.6 473.5V654Q1211.6 664 1202 663.8L1185 661.8Q1180.3 661.5 1180.3 657V648M1130.8 647.5V654.5Q1130.3 658.4 1126 658.2L1016 649.6Q1003 648 1003 636V490" stroke="#2a2a2a" stroke-width="2.6" fill="none" /><path d="M1003 490Q1003 479 1016 477.5L1126 469.8Q1130.3 469.6 1130.8 473V480M1180.3 480.5V471Q1180.3 466.6 1185 466.3L1202 464.2Q1211.6 464 1211.6 473.5V654Q1211.6 664 1202 663.8L1185 661.8Q1180.3 661.5 1180.3 657V648M1130.8 647.5V654.5Q1130.3 658.4 1126 658.2L1016 649.6Q1003 648 1003 636V490" stroke="#ddd" stroke-width="1" fill="none" /><path d="M1130.8 470L1185 465" stroke="#222" stroke-width="0.9" fill="none" stroke-dasharray="2.4 1.6" /><path d="M1130.8 658L1185 662.5" stroke="#222" stroke-width="0.9" fill="none" stroke-dasharray="2.4 1.6" /><path d="M1203 472L1203 656" stroke="#222" stroke-width="0.9" fill="none" stroke-dasharray="5 2.5" /><path d="M1005.5 481.8H1138M1168 481.8H1199.3V646.2H1168M1138 646.2H1072V632.5H1045.5" stroke="#111" stroke-width="2.6" fill="none" stroke-linejoin="miter"/><path d="M1005.5 481.8H1138M1168 481.8H1199.3V646.2H1168M1138 646.2H1072V632.5H1045.5" stroke="#f4f4f4" stroke-width="0.5" fill="none" stroke-dasharray="2 1.5" stroke-linejoin="miter"/><path d="M1045.3 481.8V633" stroke="#111" stroke-width="2.8" fill="none" stroke-linejoin="miter"/><path d="M1045.3 481.8V633" stroke="#f4f4f4" stroke-width="0.6999999999999997" fill="none" stroke-dasharray="2 1.5" stroke-linejoin="miter"/><path d="M1005.5 591H1045.3" stroke="#111" stroke-width="2.6" fill="none" stroke-linejoin="miter"/><path d="M1005.5 591H1045.3" stroke="#f4f4f4" stroke-width="0.5" fill="none" stroke-dasharray="2 1.5" stroke-linejoin="miter"/><path d="M1005.5 633H1045.3" stroke="#111" stroke-width="2.2" fill="none" stroke-linejoin="miter"/><path d="M1005.5 633H1045.3" stroke="#f4f4f4" stroke-width="0.5" fill="none" stroke-dasharray="2 1.5" stroke-linejoin="miter"/><path d="M1045.3 578.7H1156.8" stroke="#111" stroke-width="2.8" fill="none" stroke-linejoin="miter"/><path d="M1045.3 578.7H1156.8" stroke="#f4f4f4" stroke-width="0.6999999999999997" fill="none" stroke-dasharray="2 1.5" stroke-linejoin="miter"/><path d="M1154.5 481.8L1156.4 578.7V646" stroke="#111" stroke-width="2.8" fill="none" stroke-linejoin="miter"/><path d="M1154.5 481.8L1156.4 578.7V646" stroke="#f4f4f4" stroke-width="0.6999999999999997" fill="none" stroke-dasharray="2 1.5" stroke-linejoin="miter"/><path d="M1158.6 549.5H1199.3" stroke="#111" stroke-width="3" fill="none" stroke-linejoin="miter"/><path d="M1158.6 549.5H1199.3" stroke="#f4f4f4" stroke-width="0.8999999999999999" fill="none" stroke-dasharray="2 1.5" stroke-linejoin="miter"/><path d="M1158.5 481.8V497M1161.5 481.8V497" stroke="#111" stroke-width="1.3" fill="none" stroke-linejoin="miter"/><path d="M1158.5 481.8V497M1161.5 481.8V497" stroke="#f4f4f4" stroke-width="0.5" fill="none" stroke-dasharray="2 1.5" stroke-linejoin="miter"/><path d="M1199.5 505L1211.5 505" stroke="#222" stroke-width="1" fill="none" /><path d="M1199.5 623L1211.5 623" stroke="#222" stroke-width="1" fill="none" /><path d="M1007.5 498.5L1039.1 539.3M1039.1 498.5L1007.5 539.3" stroke="#8a7a20" stroke-width="0.7" fill="none" /><rect x="1007.5" y="543.4" width="31.6" height="41.4" rx="0" stroke="#222" stroke-width="0.8" fill="none" /><path d="M1007.5 543.4L1039.1 584.8M1039.1 543.4L1007.5 584.8" stroke="#222" stroke-width="0.6400000000000001" fill="none" /><rect x="1010.2" y="607.7" width="25.3" height="21" rx="0" stroke="#222" stroke-width="0.8" fill="none" /><path d="M1010.2 628.7L1035.5 607.7" stroke="#222" stroke-width="0.7" fill="none" /><rect x="1056.5" y="501.2" width="23.5" height="58.1" rx="0" stroke="#223" stroke-width="0.9" fill="none" stroke-dasharray="2.2 1.6" /><path d="M1062.8 501.2V559.3M1073.4 501.2V559.3M1056.5 520.5H1080M1056.5 540H1080M1062.8 501.6H1073.4M1062.8 559H1073.4" stroke="#1c1c3c" stroke-width="1.1" fill="none" /><rect x="1086" y="501.2" width="24.5" height="58.1" rx="0" stroke="#223" stroke-width="0.9" fill="none" stroke-dasharray="2.2 1.6" /><path d="M1092.3 501.2V559.3M1103.9 501.2V559.3M1086 520.5H1110.5M1086 540H1110.5M1092.3 501.6H1103.9M1092.3 559H1103.9" stroke="#1c1c3c" stroke-width="1.1" fill="none" /><rect x="1116.7" y="501.2" width="24.4" height="58.1" rx="0" stroke="#223" stroke-width="0.9" fill="none" stroke-dasharray="2.2 1.6" /><path d="M1123.0 501.2V559.3M1134.5 501.2V559.3M1116.7 520.5H1141.1M1116.7 540H1141.1M1123.0 501.6H1134.5M1123.0 559H1134.5" stroke="#1c1c3c" stroke-width="1.1" fill="none" /><path d="M1054.8 500.8A4.45 4.45 0 0 1 1063.52 500.8A4.45 4.45 0 0 1 1072.24 500.8A4.45 4.45 0 0 1 1080.96 500.8A4.45 4.45 0 0 1 1089.68 500.8A4.45 4.45 0 0 1 1098.4 500.8A4.45 4.45 0 0 1 1107.12 500.8A4.45 4.45 0 0 1 1115.84 500.8A4.45 4.45 0 0 1 1124.56 500.8A4.45 4.45 0 0 1 1133.28 500.8A4.45 4.45 0 0 1 1142 500.8A4.33 4.33 0 0 1 1142 509.29A4.33 4.33 0 0 1 1142 517.77A4.33 4.33 0 0 1 1142 526.26A4.33 4.33 0 0 1 1142 534.74A4.33 4.33 0 0 1 1142 543.23A4.33 4.33 0 0 1 1142 551.71A4.33 4.33 0 0 1 1142 560.2A4.45 4.45 0 0 1 1133.28 560.2A4.45 4.45 0 0 1 1124.56 560.2A4.45 4.45 0 0 1 1115.84 560.2A4.45 4.45 0 0 1 1107.12 560.2A4.45 4.45 0 0 1 1098.4 560.2A4.45 4.45 0 0 1 1089.68 560.2A4.45 4.45 0 0 1 1080.96 560.2A4.45 4.45 0 0 1 1072.24 560.2A4.45 4.45 0 0 1 1063.52 560.2A4.45 4.45 0 0 1 1054.8 560.2A4.33 4.33 0 0 1 1054.8 551.71A4.33 4.33 0 0 1 1054.8 543.23A4.33 4.33 0 0 1 1054.8 534.74A4.33 4.33 0 0 1 1054.8 526.26A4.33 4.33 0 0 1 1054.8 517.77A4.33 4.33 0 0 1 1054.8 509.29A4.33 4.33 0 0 1 1054.8 500.8Z" stroke="#e0151b" stroke-width="0.9" fill="none" /><text x="1104" y="531.54" textLength="41" lengthAdjust="spacingAndGlyphs" xml:space="preserve" font-family="Liberation Sans" font-size="3.6" font-weight="bold" fill="#e0151b">Merge these two rooms</text><path d="M1140.5 482A15.5 15.5 0 0 0 1156 497.5" stroke="#222" stroke-width="0.8" fill="none" /><path d="M1177.5 482A15.5 15.5 0 0 1 1162 497.5" stroke="#222" stroke-width="0.8" fill="none" /><circle cx="1145.6" cy="481.8" r="5" fill="#fff" stroke="#333" stroke-width="0.9"/><text x="1145.6" y="483.31" text-anchor="middle" font-family="Liberation Sans" font-size="4.2"  fill="#444">257</text><circle cx="1166.3" cy="481.8" r="5" fill="#fff" stroke="#333" stroke-width="0.9"/><text x="1166.3" y="483.31" text-anchor="middle" font-family="Liberation Sans" font-size="4.2"  fill="#444">260</text><path d="M1140.5 646A15 15 0 0 1 1155.5 631" stroke="#222" stroke-width="0.8" fill="none" /><path d="M1176 646A15 15 0 0 0 1161 631" stroke="#222" stroke-width="0.8" fill="none" /><circle cx="1145.6" cy="646.5" r="5" fill="#fff" stroke="#333" stroke-width="0.9"/><text x="1145.6" y="648.01" text-anchor="middle" font-family="Liberation Sans" font-size="4.2"  fill="#444">258</text><circle cx="1166.3" cy="646.5" r="5" fill="#fff" stroke="#333" stroke-width="0.9"/><text x="1166.3" y="648.01" text-anchor="middle" font-family="Liberation Sans" font-size="4.2"  fill="#444">259</text><path d="M1155 613V646M1158.6 613V646" stroke="#111" stroke-width="1.4" fill="none" stroke-linejoin="miter"/><path d="M1155 613V646M1158.6 613V646" stroke="#f4f4f4" stroke-width="0.5" fill="none" stroke-dasharray="2 1.5" stroke-linejoin="miter"/><path d="M1154 628.5A15.5 15.5 0 0 1 1138.5 613" stroke="#222" stroke-width="0.8" fill="none" /><circle cx="1145.6" cy="614.2" r="5" fill="#fff" stroke="#333" stroke-width="0.9"/><text x="1145.6" y="615.71" text-anchor="middle" font-family="Liberation Sans" font-size="4.2"  fill="#444">258A</text><path d="M1072 629A14 14 0 0 0 1057 631.5" stroke="#222" stroke-width="0.8" fill="none" /><circle cx="1067.5" cy="622.8" r="5" fill="#fff" stroke="#333" stroke-width="0.9"/><text x="1067.5" y="624.31" text-anchor="middle" font-family="Liberation Sans" font-size="4.2"  fill="#444">258B</text><path d="M1122.5 578.7V613.5H1138M1074.5 578.7V613H1072" stroke="#111" stroke-width="2.2" fill="none" stroke-linejoin="miter"/><path d="M1122.5 578.7V613.5H1138M1074.5 578.7V613H1072" stroke="#f4f4f4" stroke-width="0.5" fill="none" stroke-dasharray="2 1.5" stroke-linejoin="miter"/><path d="M1072 646V632.8H1122V646" stroke="#111" stroke-width="2" fill="none" stroke-linejoin="miter"/><path d="M1072 646V632.8H1122V646" stroke="#f4f4f4" stroke-width="0.5" fill="none" stroke-dasharray="2 1.5" stroke-linejoin="miter"/><rect x="1081.2" y="636" width="9" height="6" rx="0" stroke="#111" stroke-width="1.3" fill="none" /><rect x="1084.4" y="638.5" width="2.6" height="3.5" rx="0" stroke="none" fill="#111" /><rect x="1103.5" y="636" width="9" height="6" rx="0" stroke="#111" stroke-width="1.3" fill="none" /><rect x="1106.7" y="638.5" width="2.6" height="3.5" rx="0" stroke="none" fill="#111" /><circle cx="1054.2" cy="587.3" r="2.6" fill="#555" stroke="#111" stroke-width="0.8"/><circle cx="1054.2" cy="582.6" r="1.1" fill="#111"/><circle cx="1081.8" cy="587.3" r="2.6" fill="#555" stroke="#111" stroke-width="0.8"/><circle cx="1081.8" cy="582.6" r="1.1" fill="#111"/><rect x="1090" y="583" width="29" height="21" rx="0" stroke="#333" stroke-width="0.9" fill="none" stroke-dasharray="4 2" /><path d="M1088 578.7L1088 606" stroke="#222" stroke-width="1.6" fill="none" /><path d="M1077 605L1079.5 598Q1083 594.5 1088 594.5" stroke="#222" stroke-width="0.9" fill="none" /><rect x="1144.5" y="580.5" width="9.5" height="9.5" rx="0" stroke="#444" stroke-width="0.8" fill="none" /><path d="M1123 573L1137 595" stroke="#222" stroke-width="0.9" fill="none" /><circle cx="1137.3" cy="595.5" r="1.3" fill="#111"/><rect x="1159.5" y="551.5" width="38" height="53.7" rx="0" stroke="#222" stroke-width="0.8" fill="none" /><path d="M1160 566L1180 566" stroke="#111" stroke-width="1.5" fill="none" stroke-dasharray="1.6 2.2" /><path d="M1160 569.7L1180 569.7" stroke="#111" stroke-width="1.5" fill="none" stroke-dasharray="1.6 2.2" /><path d="M1160 573.4L1180 573.4" stroke="#111" stroke-width="1.5" fill="none" stroke-dasharray="1.6 2.2" /><path d="M1160 577.1L1180 577.1" stroke="#111" stroke-width="1.5" fill="none" stroke-dasharray="1.6 2.2" /><path d="M1160 580.8L1180 580.8" stroke="#111" stroke-width="1.5" fill="none" stroke-dasharray="1.6 2.2" /><path d="M1160 584.5L1180 584.5" stroke="#111" stroke-width="1.5" fill="none" stroke-dasharray="1.6 2.2" /><path d="M1160 588.2L1180 588.2" stroke="#111" stroke-width="1.5" fill="none" stroke-dasharray="1.6 2.2" /><path d="M1160 591.9L1180 591.9" stroke="#111" stroke-width="1.5" fill="none" stroke-dasharray="1.6 2.2" /><path d="M1160 595.6L1180 595.6" stroke="#111" stroke-width="1.5" fill="none" stroke-dasharray="1.6 2.2" /><path d="M1160 599.3L1180 599.3" stroke="#111" stroke-width="1.5" fill="none" stroke-dasharray="1.6 2.2" /><path d="M1160 603L1180 603" stroke="#111" stroke-width="1.5" fill="none" stroke-dasharray="1.6 2.2" /><path d="M1182 576L1196.5 576" stroke="#222" stroke-width="0.8" fill="none" /><path d="M1182 579.7L1196.5 579.7" stroke="#222" stroke-width="0.8" fill="none" /><path d="M1182 583.4L1196.5 583.4" stroke="#222" stroke-width="0.8" fill="none" /><path d="M1182 587.1L1196.5 587.1" stroke="#222" stroke-width="0.8" fill="none" /><path d="M1182 590.8L1196.5 590.8" stroke="#222" stroke-width="0.8" fill="none" /><path d="M1182 594.5L1196.5 594.5" stroke="#222" stroke-width="0.8" fill="none" /><path d="M1182 598.2L1196.5 598.2" stroke="#222" stroke-width="0.8" fill="none" /><path d="M1182 601.9L1196.5 601.9" stroke="#222" stroke-width="0.8" fill="none" /><path d="M1182 576L1182 605" stroke="#222" stroke-width="0.8" fill="none" /><path d="M1189 570L1189 605" stroke="#222" stroke-width="0.8" fill="none" /><text x="1188.5" y="610.5" text-anchor="middle" font-family="Liberation Sans" font-size="4.6" fill="#555">UP</text><text x="1081.6" y="491.55" textLength="38.1" lengthAdjust="spacingAndGlyphs" xml:space="preserve" font-family="Liberation Sans" font-size="7.4" font-weight="bold" fill="#111">SERVER  257</text><path d="M1081.3 493.4L1120 493.4" stroke="#111" stroke-width="0.9" fill="none" /><text x="1099.9" y="572.45" textLength="46.3" lengthAdjust="spacingAndGlyphs" xml:space="preserve" font-family="Liberation Sans" font-size="7.4" font-weight="bold" fill="#111">STORAGE  258A</text><path d="M1099.6 574.3L1146.5 574.3" stroke="#111" stroke-width="0.9" fill="none" /><text x="1082.6" y="625.55" textLength="42.6" lengthAdjust="spacingAndGlyphs" xml:space="preserve" font-family="Liberation Sans" font-size="7.4" font-weight="bold" fill="#111">MEN&#x27;S RR  258</text><path d="M1082.3 627.4L1125.5 627.4" stroke="#111" stroke-width="0.9" fill="none" /><text x="1161.5" y="625.55" textLength="31.6" lengthAdjust="spacingAndGlyphs" xml:space="preserve" font-family="Liberation Sans" font-size="7.4" font-weight="bold" fill="#111">STAIR  259</text><path d="M1161.2 627.4L1193.4 627.4" stroke="#111" stroke-width="0.9" fill="none" /><g transform="translate(1176.7 540) rotate(-90)"><text x="0" y="2.55" textLength="42" lengthAdjust="spacingAndGlyphs" xml:space="preserve" font-family="Liberation Sans" font-size="7.4" font-weight="bold" fill="#111">STORAGE  260</text><path d="M-0.3 4.4L42.3 4.4" stroke="#111" stroke-width="0.9" fill="none" /></g><path d="M1220.4 494.8H1261.2Q1270.2 494.8 1270.2 503.8V623.6Q1270.2 632.6 1261.2 632.6H1220.4Q1211.4 632.6 1211.4 623.6V503.8Q1211.4 494.8 1220.4 494.8Z" stroke="#303030" stroke-width="2.4" fill="none" stroke-linejoin="round"/><path d="M1220.4 494.8H1261.2Q1270.2 494.8 1270.2 503.8V623.6Q1270.2 632.6 1261.2 632.6H1220.4Q1211.4 632.6 1211.4 623.6V503.8Q1211.4 494.8 1220.4 494.8Z" stroke="#bdbdbd" stroke-width="1.0999999999999999" fill="none" stroke-dasharray="1.5 1.1" stroke-linejoin="round"/><path d="M1199.3 564H1270.2" stroke="#303030" stroke-width="2.4" fill="none" stroke-linejoin="round"/><path d="M1199.3 564H1270.2" stroke="#bdbdbd" stroke-width="1.0999999999999999" fill="none" stroke-dasharray="1.5 1.1" stroke-linejoin="round"/><path d="M1270.2 562.5H1255A15.2 15.2 0 0 1 1270.2 547.3" stroke="#222" stroke-width="0.8" fill="#fff" /><path d="M1270.2 565.5H1255A15.2 15.2 0 0 0 1270.2 580.7" stroke="#222" stroke-width="0.8" fill="#fff" /><circle cx="1268.9" cy="553.8" r="5" fill="#fff" stroke="#333" stroke-width="0.9"/><text x="1268.9" y="555.31" text-anchor="middle" font-family="Liberation Sans" font-size="4.2"  fill="#444">261</text><circle cx="1268.9" cy="574.4" r="5" fill="#fff" stroke="#333" stroke-width="0.9"/><text x="1268.9" y="575.91" text-anchor="middle" font-family="Liberation Sans" font-size="4.2"  fill="#444">262</text><text x="1219.7" y="529.95" textLength="36.2" lengthAdjust="spacingAndGlyphs" xml:space="preserve" font-family="Liberation Sans" font-size="7.4" font-weight="bold" fill="#111">OFFICE  261</text><path d="M1219.4 531.8L1256.2 531.8" stroke="#111" stroke-width="0.9" fill="none" /><text x="1219.7" y="599.15" textLength="31.6" lengthAdjust="spacingAndGlyphs" xml:space="preserve" font-family="Liberation Sans" font-size="7.4" font-weight="bold" fill="#111">COPY  262</text><path d="M1219.4 601L1251.6 601" stroke="#111" stroke-width="0.9" fill="none" /><text x="1382.7" y="559.05" textLength="53.7" lengthAdjust="spacingAndGlyphs" xml:space="preserve" font-family="Liberation Sans" font-size="7.4" font-weight="bold" fill="#111">OPEN OFFICE  263</text><path d="M1382.4 560.9L1436.7 560.9" stroke="#111" stroke-width="0.9" fill="none" /><path d="M1262 494.8H1531Q1535.4 494.8 1535.4 499V628.5Q1535.4 632.6 1531 632.6H1262" stroke="#333" stroke-width="1.5" fill="none" /><path d="M1262 494.8H1531Q1535.4 494.8 1535.4 499V628.5Q1535.4 632.6 1531 632.6H1262" stroke="#eee" stroke-width="0.5" fill="none" /><path d="M1211.6 480.4H1541Q1549.6 480.4 1549.6 489V639.5Q1549.6 647.9 1541 647.9H1211.6" stroke="#222" stroke-width="0.9" fill="none" stroke-dasharray="1.8 1.5" /><path d="M1677 462L1590 455.3Q1580.8 454.8 1580.8 464V664Q1580.8 673.4 1590 672.8L1677 666.2" stroke="#303030" stroke-width="2.4" fill="none" stroke-linejoin="round"/><path d="M1677 462L1590 455.3Q1580.8 454.8 1580.8 464V664Q1580.8 673.4 1590 672.8L1677 666.2" stroke="#bdbdbd" stroke-width="1.0999999999999999" fill="none" stroke-dasharray="1.5 1.1" stroke-linejoin="round"/><path d="M1580.8 512.8H1677" stroke="#303030" stroke-width="2.6" fill="none" stroke-linejoin="round"/><path d="M1580.8 512.8H1677" stroke="#bdbdbd" stroke-width="1.3" fill="none" stroke-dasharray="1.5 1.1" stroke-linejoin="round"/><path d="M1580.8 615.1H1677" stroke="#303030" stroke-width="2.6" fill="none" stroke-linejoin="round"/><path d="M1580.8 615.1H1677" stroke="#bdbdbd" stroke-width="1.3" fill="none" stroke-dasharray="1.5 1.1" stroke-linejoin="round"/><path d="M1580.8 511.5H1596.5A15.7 15.7 0 0 0 1580.8 495.8" stroke="#222" stroke-width="0.8" fill="none" /><path d="M1580.8 514.1H1596.5A15.7 15.7 0 0 1 1580.8 529.8" stroke="#222" stroke-width="0.8" fill="none" /><path d="M1580.8 613.8H1596.5A15.7 15.7 0 0 0 1580.8 598.0999999999999" stroke="#222" stroke-width="0.8" fill="none" /><path d="M1580.8 616.4H1596.5A15.7 15.7 0 0 1 1580.8 632.0999999999999" stroke="#222" stroke-width="0.8" fill="none" /><circle cx="1581.5" cy="502.8" r="5" fill="#fff" stroke="#333" stroke-width="0.9"/><text x="1581.5" y="504.31" text-anchor="middle" font-family="Liberation Sans" font-size="4.2"  fill="#444">264</text><circle cx="1581.5" cy="522.9" r="5" fill="#fff" stroke="#333" stroke-width="0.9"/><text x="1581.5" y="524.41" text-anchor="middle" font-family="Liberation Sans" font-size="4.2"  fill="#444">265A</text><circle cx="1581.5" cy="605.4" r="5" fill="#fff" stroke="#333" stroke-width="0.9"/><text x="1581.5" y="606.91" text-anchor="middle" font-family="Liberation Sans" font-size="4.2"  fill="#444">265B</text><circle cx="1581.5" cy="625.1" r="5" fill="#fff" stroke="#333" stroke-width="0.9"/><text x="1581.5" y="626.61" text-anchor="middle" font-family="Liberation Sans" font-size="4.2"  fill="#444">260</text><rect x="1608.8" y="525.9" width="41" height="76.5" rx="0" stroke="#111" stroke-width="0.9" fill="none" stroke-dasharray="2.4 1.6" /><path d="M1581 540L1581 590" stroke="#111" stroke-width="1.8" fill="none" /><text x="1604.9" y="488.65" textLength="40.9" lengthAdjust="spacingAndGlyphs" xml:space="preserve" font-family="Liberation Sans" font-size="7.4" font-weight="bold" fill="#111">MEETING  264</text><path d="M1604.6 490.5L1646.1 490.5" stroke="#111" stroke-width="0.9" fill="none" /><text x="1600.3" y="568.15" textLength="54.6" lengthAdjust="spacingAndGlyphs" xml:space="preserve" font-family="Liberation Sans" font-size="7.4" font-weight="bold" fill="#111">CONFERENCE  265</text><path d="M1600 570L1655.2 570" stroke="#111" stroke-width="0.9" fill="none" /><text x="1604.9" y="643.45" textLength="40.9" lengthAdjust="spacingAndGlyphs" xml:space="preserve" font-family="Liberation Sans" font-size="7.4" font-weight="bold" fill="#111">MEETING  260</text><path d="M1604.6 645.3L1646.1 645.3" stroke="#111" stroke-width="0.9" fill="none" /><text x="1560.6" y="734.75" textLength="53.4" lengthAdjust="spacingAndGlyphs" xml:space="preserve" font-family="Liberation Sans" font-size="7.4" font-weight="bold" fill="#111">OPEN OFFICE  222</text><path d="M1560.3 736.6L1614.3 736.6" stroke="#111" stroke-width="0.9" fill="none" /><path d="M534 688.2L556 689.5Q565.2 690 565.2 699V806" stroke="#303030" stroke-width="2.4" fill="none" stroke-linejoin="round"/><path d="M534 688.2L556 689.5Q565.2 690 565.2 699V806" stroke="#bdbdbd" stroke-width="1.0999999999999999" fill="none" stroke-dasharray="1.5 1.1" stroke-linejoin="round"/><path d="M534 742.6H565.2" stroke="#303030" stroke-width="3" fill="none" stroke-linejoin="round"/><path d="M534 742.6H565.2" stroke="#bdbdbd" stroke-width="1.7" fill="none" stroke-dasharray="1.5 1.1" stroke-linejoin="round"/><path d="M565.2 741.1H549.2A16 16 0 0 1 565.2 725.1" stroke="#222" stroke-width="0.8" fill="#fff" /><path d="M565.2 744.1H549.2A16 16 0 0 0 565.2 760.1" stroke="#222" stroke-width="0.8" fill="#fff" /><circle cx="565.5" cy="732.3" r="5" fill="#fff" stroke="#333" stroke-width="0.9"/><text x="565.5" y="733.81" text-anchor="middle" font-family="Liberation Sans" font-size="4.2"  fill="#444">242</text><circle cx="565.5" cy="753.1" r="5" fill="#fff" stroke="#333" stroke-width="0.9"/><text x="565.5" y="754.61" text-anchor="middle" font-family="Liberation Sans" font-size="4.2"  fill="#444">243</text><path d="M616.1 806V703.2Q616.1 694.2 625.1 694.82L710.3 700.68Q719.3 701.3 719.3 710.3V806" stroke="#303030" stroke-width="2.4" fill="none" stroke-linejoin="round"/><path d="M616.1 806V703.2Q616.1 694.2 625.1 694.82L710.3 700.68Q719.3 701.3 719.3 710.3V806" stroke="#bdbdbd" stroke-width="1.0999999999999999" fill="none" stroke-dasharray="1.5 1.1" stroke-linejoin="round"/><path d="M667.7 698.25V806" stroke="#303030" stroke-width="2.6" fill="none" stroke-linejoin="round"/><path d="M667.7 698.25V806" stroke="#bdbdbd" stroke-width="1.3" fill="none" stroke-dasharray="1.5 1.1" stroke-linejoin="round"/><path d="M616.1 752.8H719.3" stroke="#303030" stroke-width="3" fill="none" stroke-linejoin="round"/><path d="M616.1 752.8H719.3" stroke="#bdbdbd" stroke-width="1.7" fill="none" stroke-dasharray="1.5 1.1" stroke-linejoin="round"/><path d="M616.1 751.3H632.1A16 16 0 0 0 616.1 735.3" stroke="#222" stroke-width="0.8" fill="#fff" /><path d="M616.1 754.3H632.1A16 16 0 0 1 616.1 770.3" stroke="#222" stroke-width="0.8" fill="#fff" /><circle cx="615.8" cy="742.5" r="5" fill="#fff" stroke="#333" stroke-width="0.9"/><text x="615.8" y="744.01" text-anchor="middle" font-family="Liberation Sans" font-size="4.2"  fill="#444">240</text><circle cx="615.8" cy="763.3" r="5" fill="#fff" stroke="#333" stroke-width="0.9"/><text x="615.8" y="764.81" text-anchor="middle" font-family="Liberation Sans" font-size="4.2"  fill="#444">241</text><path d="M719.3 751.3H703.3A16 16 0 0 1 719.3 735.3" stroke="#222" stroke-width="0.8" fill="#fff" /><path d="M719.3 754.3H703.3A16 16 0 0 0 719.3 770.3" stroke="#222" stroke-width="0.8" fill="#fff" /><circle cx="719.6" cy="742.5" r="5" fill="#fff" stroke="#333" stroke-width="0.9"/><text x="719.6" y="744.01" text-anchor="middle" font-family="Liberation Sans" font-size="4.2"  fill="#444">238</text><circle cx="719.6" cy="763.3" r="5" fill="#fff" stroke="#333" stroke-width="0.9"/><text x="719.6" y="764.81" text-anchor="middle" font-family="Liberation Sans" font-size="4.2"  fill="#444">239</text><text x="623.2" y="723.75" textLength="35.7" lengthAdjust="spacingAndGlyphs" xml:space="preserve" font-family="Liberation Sans" font-size="7.4" font-weight="bold" fill="#111">OFFICE  240</text><path d="M622.9 725.6L659.2 725.6" stroke="#111" stroke-width="0.9" fill="none" /><text x="676.5" y="724.35" textLength="35.7" lengthAdjust="spacingAndGlyphs" xml:space="preserve" font-family="Liberation Sans" font-size="7.4" font-weight="bold" fill="#111">OFFICE  238</text><path d="M676.2 726.2L712.5 726.2" stroke="#111" stroke-width="0.9" fill="none" /><text x="623.2" y="780.25" textLength="35.7" lengthAdjust="spacingAndGlyphs" xml:space="preserve" font-family="Liberation Sans" font-size="7.4" font-weight="bold" fill="#111">OFFICE  241</text><path d="M622.9 782.1L659.2 782.1" stroke="#111" stroke-width="0.9" fill="none" /><text x="675.3" y="780.25" textLength="35.9" lengthAdjust="spacingAndGlyphs" xml:space="preserve" font-family="Liberation Sans" font-size="7.4" font-weight="bold" fill="#111">OFFICE  239</text><path d="M675 782.1L711.5 782.1" stroke="#111" stroke-width="0.9" fill="none" /><path d="M769.7 806V714.4Q769.7 705.4 778.7 706.08L863.7 712.52Q872.7 713.2 872.7 722.2V806" stroke="#303030" stroke-width="2.4" fill="none" stroke-linejoin="round"/><path d="M769.7 806V714.4Q769.7 705.4 778.7 706.08L863.7 712.52Q872.7 713.2 872.7 722.2V806" stroke="#bdbdbd" stroke-width="1.0999999999999999" fill="none" stroke-dasharray="1.5 1.1" stroke-linejoin="round"/><path d="M821.1 709.79V806" stroke="#303030" stroke-width="2.6" fill="none" stroke-linejoin="round"/><path d="M821.1 709.79V806" stroke="#bdbdbd" stroke-width="1.3" fill="none" stroke-dasharray="1.5 1.1" stroke-linejoin="round"/><path d="M769.7 752.8H872.7" stroke="#303030" stroke-width="3" fill="none" stroke-linejoin="round"/><path d="M769.7 752.8H872.7" stroke="#bdbdbd" stroke-width="1.7" fill="none" stroke-dasharray="1.5 1.1" stroke-linejoin="round"/><path d="M769.7 751.3H785.7A16 16 0 0 0 769.7 735.3" stroke="#222" stroke-width="0.8" fill="#fff" /><path d="M769.7 754.3H785.7A16 16 0 0 1 769.7 770.3" stroke="#222" stroke-width="0.8" fill="#fff" /><circle cx="769.4" cy="742.5" r="5" fill="#fff" stroke="#333" stroke-width="0.9"/><text x="769.4" y="744.01" text-anchor="middle" font-family="Liberation Sans" font-size="4.2"  fill="#444">236</text><circle cx="769.4" cy="763.3" r="5" fill="#fff" stroke="#333" stroke-width="0.9"/><text x="769.4" y="764.81" text-anchor="middle" font-family="Liberation Sans" font-size="4.2"  fill="#444">237</text><path d="M872.7 751.3H856.7A16 16 0 0 1 872.7 735.3" stroke="#222" stroke-width="0.8" fill="#fff" /><path d="M872.7 754.3H856.7A16 16 0 0 0 872.7 770.3" stroke="#222" stroke-width="0.8" fill="#fff" /><circle cx="873" cy="742.5" r="5" fill="#fff" stroke="#333" stroke-width="0.9"/><text x="873" y="744.01" text-anchor="middle" font-family="Liberation Sans" font-size="4.2"  fill="#444">234</text><circle cx="873" cy="763.3" r="5" fill="#fff" stroke="#333" stroke-width="0.9"/><text x="873" y="764.81" text-anchor="middle" font-family="Liberation Sans" font-size="4.2"  fill="#444">235</text><rect x="775.6" y="727.4" width="37.7" height="8" rx="0" stroke="none" fill="#ffff00" /><text x="776.4" y="733.35" textLength="36.1" lengthAdjust="spacingAndGlyphs" xml:space="preserve" font-family="Liberation Sans" font-size="7.4" font-weight="bold" fill="#111">OFFICE  236</text><path d="M776.1 735.2L812.8 735.2" stroke="#111" stroke-width="0.9" fill="none" /><text x="825.4" y="733.35" textLength="40.2" lengthAdjust="spacingAndGlyphs" xml:space="preserve" font-family="Liberation Sans" font-size="7.4" font-weight="bold" fill="#111">MEETING  234</text><path d="M825.1 735.2L865.9 735.2" stroke="#111" stroke-width="0.9" fill="none" /><rect x="775.6" y="778.6" width="37.7" height="8" rx="0" stroke="none" fill="#ffff00" /><text x="776.4" y="784.55" textLength="36.1" lengthAdjust="spacingAndGlyphs" xml:space="preserve" font-family="Liberation Sans" font-size="7.4" font-weight="bold" fill="#111">OFFICE  237</text><path d="M776.1 786.4L812.8 786.4" stroke="#111" stroke-width="0.9" fill="none" /><rect x="824.6" y="778.6" width="41.8" height="8" rx="0" stroke="none" fill="#ffff00" /><text x="825.4" y="784.55" textLength="40.2" lengthAdjust="spacingAndGlyphs" xml:space="preserve" font-family="Liberation Sans" font-size="7.4" font-weight="bold" fill="#111">MEETING  235</text><path d="M825.1 786.4L865.9 786.4" stroke="#111" stroke-width="0.9" fill="none" /><path d="M560.6 689.2L897.5 714.2" stroke="#222" stroke-width="0.9" fill="none" stroke-dasharray="1.6 1.6" /><path d="M1051.8 714.6L1391 688.7" stroke="#222" stroke-width="0.9" fill="none" stroke-dasharray="1.6 1.6" /><path d="M1391 688.7L1590 673" stroke="#222" stroke-width="0.9" fill="none" /><path d="M874.6 703.5H1075.4Q1081.4 703.5 1081.4 709.5V812.1Q1081.4 818.1 1075.4 818.1H874.6Q868.6 818.1 868.6 812.1V709.5Q868.6 703.5 874.6 703.5Z" stroke="#222" stroke-width="0.9" fill="none" stroke-dasharray="7 3.4" /><path d="M897.7 714.7L974.3 720.2L1051.8 714.7" stroke="#303030" stroke-width="1.8" fill="none" stroke-linejoin="round"/><path d="M897.7 714.7L974.3 720.2L1051.8 714.7" stroke="#bdbdbd" stroke-width="0.5" fill="none" stroke-dasharray="1.5 1.1" stroke-linejoin="round"/><path d="M897.7 718.3L974.3 723.6L1051.8 718.3" stroke="#222" stroke-width="0.8" fill="none" /><path d="M897.7 714.7V737.5H1051.8V714.7" stroke="#222" stroke-width="1" fill="none" /><path d="M897.7 725.3H1051.8" stroke="#303030" stroke-width="2" fill="none" stroke-linejoin="round"/><path d="M897.7 725.3H1051.8" stroke="#bdbdbd" stroke-width="0.7" fill="none" stroke-dasharray="1.5 1.1" stroke-linejoin="round"/><path d="M899 726V737M1050.5 726V737M926 726V737M1023.5 726V737" stroke="#303030" stroke-width="2" fill="none" stroke-linejoin="round"/><path d="M899 726V737M1050.5 726V737M926 726V737M1023.5 726V737" stroke="#bdbdbd" stroke-width="0.7" fill="none" stroke-dasharray="1.5 1.1" stroke-linejoin="round"/><rect x="902.4" y="727.6" width="20.9" height="9.7" rx="0" stroke="#111" stroke-width="1" fill="#fff" /><rect x="1026.3" y="727.6" width="21" height="9.7" rx="0" stroke="#111" stroke-width="1" fill="#fff" /><rect x="936" y="726.8" width="77" height="5.7" rx="0" stroke="#222" stroke-width="0.8" fill="none" stroke-dasharray="2 1.5" /><rect x="967.5" y="729.2" width="13.7" height="6.2" rx="1.5" stroke="#111" stroke-width="1" fill="#fff" /><path d="M974.3 727L974.3 732" stroke="#111" stroke-width="1.4" fill="none" /><rect x="927.3" y="744.3" width="94.5" height="31" rx="0" stroke="#111" stroke-width="0.9" fill="none" stroke-dasharray="2.2 1.6" /><rect x="927.3" y="752.2" width="94.5" height="15.3" rx="0" stroke="#222" stroke-width="0.9" fill="none" /><text x="954.3" y="762.15" textLength="34.6" lengthAdjust="spacingAndGlyphs" xml:space="preserve" font-family="Liberation Sans" font-size="7.4" font-weight="bold" fill="#111">BREAK  233</text><path d="M954 764L989.2 764" stroke="#111" stroke-width="0.9" fill="none" /><rect x="890.6" y="786.9" width="168.3" height="14.9" rx="0" stroke="#222" stroke-width="0.9" fill="none" /><path d="M905.3 788.8L1044.2 788.8" stroke="#222" stroke-width="0.8" fill="none" /><path d="M905.3 800L1044.2 800" stroke="#222" stroke-width="0.8" fill="none" /><rect x="890.6" y="786.9" width="14.7" height="14.9" rx="0" stroke="#222" stroke-width="2.6" fill="#fff" /><rect x="890.6" y="786.9" width="14.7" height="14.9" rx="0" stroke="#c8c8c8" stroke-width="1" fill="none" stroke-dasharray="1.5 1.2" /><path d="M895.8000000000001 791.5H900.2M895.8000000000001 797.2H900.2M898.0 791.5V797.2" stroke="#111" stroke-width="1" fill="none" /><rect x="1044.2" y="786.9" width="14.7" height="14.9" rx="0" stroke="#222" stroke-width="2.6" fill="#fff" /><rect x="1044.2" y="786.9" width="14.7" height="14.9" rx="0" stroke="#c8c8c8" stroke-width="1" fill="none" stroke-dasharray="1.5 1.2" /><path d="M1049.4 791.5H1053.8M1049.4 797.2H1053.8M1051.6000000000001 791.5V797.2" stroke="#111" stroke-width="1" fill="none" /><path d="M1076.7 806V722.8Q1076.7 713.8 1085.7 713.07L1170.7 706.13Q1179.7 705.4 1179.7 714.4V806" stroke="#303030" stroke-width="2.4" fill="none" stroke-linejoin="round"/><path d="M1076.7 806V722.8Q1076.7 713.8 1085.7 713.07L1170.7 706.13Q1179.7 705.4 1179.7 714.4V806" stroke="#bdbdbd" stroke-width="1.0999999999999999" fill="none" stroke-dasharray="1.5 1.1" stroke-linejoin="round"/><path d="M1127.9 710.12V806" stroke="#303030" stroke-width="2.6" fill="none" stroke-linejoin="round"/><path d="M1127.9 710.12V806" stroke="#bdbdbd" stroke-width="1.3" fill="none" stroke-dasharray="1.5 1.1" stroke-linejoin="round"/><path d="M1076.7 752.8H1179.7" stroke="#303030" stroke-width="3" fill="none" stroke-linejoin="round"/><path d="M1076.7 752.8H1179.7" stroke="#bdbdbd" stroke-width="1.7" fill="none" stroke-dasharray="1.5 1.1" stroke-linejoin="round"/><path d="M1076.7 751.3H1092.7A16 16 0 0 0 1076.7 735.3" stroke="#222" stroke-width="0.8" fill="#fff" /><path d="M1076.7 754.3H1092.7A16 16 0 0 1 1076.7 770.3" stroke="#222" stroke-width="0.8" fill="#fff" /><circle cx="1076.4" cy="742.5" r="5" fill="#fff" stroke="#333" stroke-width="0.9"/><text x="1076.4" y="744.01" text-anchor="middle" font-family="Liberation Sans" font-size="4.2"  fill="#444">231</text><circle cx="1076.4" cy="763.3" r="5" fill="#fff" stroke="#333" stroke-width="0.9"/><text x="1076.4" y="764.81" text-anchor="middle" font-family="Liberation Sans" font-size="4.2"  fill="#444">232</text><path d="M1179.7 751.3H1163.7A16 16 0 0 1 1179.7 735.3" stroke="#222" stroke-width="0.8" fill="#fff" /><path d="M1179.7 754.3H1163.7A16 16 0 0 0 1179.7 770.3" stroke="#222" stroke-width="0.8" fill="#fff" /><circle cx="1180" cy="742.5" r="5" fill="#fff" stroke="#333" stroke-width="0.9"/><text x="1180" y="744.01" text-anchor="middle" font-family="Liberation Sans" font-size="4.2"  fill="#444">229</text><circle cx="1180" cy="763.3" r="5" fill="#fff" stroke="#333" stroke-width="0.9"/><text x="1180" y="764.81" text-anchor="middle" font-family="Liberation Sans" font-size="4.2"  fill="#444">230</text><text x="1084" y="733.35" textLength="40.6" lengthAdjust="spacingAndGlyphs" xml:space="preserve" font-family="Liberation Sans" font-size="7.4" font-weight="bold" fill="#111">MEETING  231</text><path d="M1083.7 735.2L1124.9 735.2" stroke="#111" stroke-width="0.9" fill="none" /><text x="1132.3" y="733.35" textLength="35.7" lengthAdjust="spacingAndGlyphs" xml:space="preserve" font-family="Liberation Sans" font-size="7.4" font-weight="bold" fill="#111">OFFICE  229</text><path d="M1132 735.2L1168.3 735.2" stroke="#111" stroke-width="0.9" fill="none" /><text x="1084" y="778.85" textLength="40.6" lengthAdjust="spacingAndGlyphs" xml:space="preserve" font-family="Liberation Sans" font-size="7.4" font-weight="bold" fill="#111">MEETING  232</text><path d="M1083.7 780.7L1124.9 780.7" stroke="#111" stroke-width="0.9" fill="none" /><text x="1134" y="778.85" textLength="36" lengthAdjust="spacingAndGlyphs" xml:space="preserve" font-family="Liberation Sans" font-size="7.4" font-weight="bold" fill="#111">OFFICE  230</text><path d="M1133.7 780.7L1170.3 780.7" stroke="#111" stroke-width="0.9" fill="none" /><path d="M1229.9 806V710.2Q1229.9 701.2 1238.9 700.52L1323.8 694.08Q1332.8 693.4 1332.8 702.4V806" stroke="#303030" stroke-width="2.4" fill="none" stroke-linejoin="round"/><path d="M1229.9 806V710.2Q1229.9 701.2 1238.9 700.52L1323.8 694.08Q1332.8 693.4 1332.8 702.4V806" stroke="#bdbdbd" stroke-width="1.0999999999999999" fill="none" stroke-dasharray="1.5 1.1" stroke-linejoin="round"/><path d="M1281.2 697.81V806" stroke="#303030" stroke-width="2.6" fill="none" stroke-linejoin="round"/><path d="M1281.2 697.81V806" stroke="#bdbdbd" stroke-width="1.3" fill="none" stroke-dasharray="1.5 1.1" stroke-linejoin="round"/><path d="M1229.9 752.2H1332.8" stroke="#303030" stroke-width="3" fill="none" stroke-linejoin="round"/><path d="M1229.9 752.2H1332.8" stroke="#bdbdbd" stroke-width="1.7" fill="none" stroke-dasharray="1.5 1.1" stroke-linejoin="round"/><path d="M1229.9 751H1245.9A16 16 0 0 0 1229.9 735" stroke="#222" stroke-width="0.8" fill="#fff" /><path d="M1229.9 754H1245.9A16 16 0 0 1 1229.9 770" stroke="#222" stroke-width="0.8" fill="#fff" /><circle cx="1229.6" cy="742.2" r="5" fill="#fff" stroke="#333" stroke-width="0.9"/><text x="1229.6" y="743.71" text-anchor="middle" font-family="Liberation Sans" font-size="4.2"  fill="#444">227</text><circle cx="1229.6" cy="763" r="5" fill="#fff" stroke="#333" stroke-width="0.9"/><text x="1229.6" y="764.51" text-anchor="middle" font-family="Liberation Sans" font-size="4.2"  fill="#444">228</text><path d="M1332.8 751H1316.8A16 16 0 0 1 1332.8 735" stroke="#222" stroke-width="0.8" fill="#fff" /><path d="M1332.8 754H1316.8A16 16 0 0 0 1332.8 770" stroke="#222" stroke-width="0.8" fill="#fff" /><circle cx="1333.1" cy="742.2" r="5" fill="#fff" stroke="#333" stroke-width="0.9"/><text x="1333.1" y="743.71" text-anchor="middle" font-family="Liberation Sans" font-size="4.2"  fill="#444">225</text><circle cx="1333.1" cy="763" r="5" fill="#fff" stroke="#333" stroke-width="0.9"/><text x="1333.1" y="764.51" text-anchor="middle" font-family="Liberation Sans" font-size="4.2"  fill="#444">226</text><text x="1237.9" y="715.05" textLength="35.2" lengthAdjust="spacingAndGlyphs" xml:space="preserve" font-family="Liberation Sans" font-size="7.4" font-weight="bold" fill="#111">OFFICE  227</text><path d="M1237.6 716.9L1273.4 716.9" stroke="#111" stroke-width="0.9" fill="none" /><text x="1289" y="715.05" textLength="35.8" lengthAdjust="spacingAndGlyphs" xml:space="preserve" font-family="Liberation Sans" font-size="7.4" font-weight="bold" fill="#111">OFFICE  225</text><path d="M1288.7 716.9L1325.1 716.9" stroke="#111" stroke-width="0.9" fill="none" /><text x="1237.9" y="780.75" textLength="35.2" lengthAdjust="spacingAndGlyphs" xml:space="preserve" font-family="Liberation Sans" font-size="7.4" font-weight="bold" fill="#111">OFFICE  228</text><path d="M1237.6 782.6L1273.4 782.6" stroke="#111" stroke-width="0.9" fill="none" /><text x="1287.2" y="780.75" textLength="35.2" lengthAdjust="spacingAndGlyphs" xml:space="preserve" font-family="Liberation Sans" font-size="7.4" font-weight="bold" fill="#111">OFFICE  226</text><path d="M1286.9 782.6L1322.7 782.6" stroke="#111" stroke-width="0.9" fill="none" /><path d="M1383.6 806V698.8Q1383.6 689.8 1392.6 689.17L1477 683.23Q1486 682.6 1486 691.6V806" stroke="#303030" stroke-width="2.4" fill="none" stroke-linejoin="round"/><path d="M1383.6 806V698.8Q1383.6 689.8 1392.6 689.17L1477 683.23Q1486 682.6 1486 691.6V806" stroke="#bdbdbd" stroke-width="1.0999999999999999" fill="none" stroke-dasharray="1.5 1.1" stroke-linejoin="round"/><path d="M1383.6 742.4H1486" stroke="#303030" stroke-width="3" fill="none" stroke-linejoin="round"/><path d="M1383.6 742.4H1486" stroke="#bdbdbd" stroke-width="1.7" fill="none" stroke-dasharray="1.5 1.1" stroke-linejoin="round"/><path d="M1383.6 740.9H1399.6A16 16 0 0 0 1383.6 724.9" stroke="#222" stroke-width="0.8" fill="#fff" /><path d="M1383.6 743.9H1399.6A16 16 0 0 1 1383.6 759.9" stroke="#222" stroke-width="0.8" fill="#fff" /><circle cx="1383.3" cy="732.1" r="5" fill="#fff" stroke="#333" stroke-width="0.9"/><text x="1383.3" y="733.61" text-anchor="middle" font-family="Liberation Sans" font-size="4.2"  fill="#444">223</text><circle cx="1383.3" cy="752.9" r="5" fill="#fff" stroke="#333" stroke-width="0.9"/><text x="1383.3" y="754.41" text-anchor="middle" font-family="Liberation Sans" font-size="4.2"  fill="#444">224</text><text x="1423" y="718.05" textLength="35.5" lengthAdjust="spacingAndGlyphs" xml:space="preserve" font-family="Liberation Sans" font-size="7.4" font-weight="bold" fill="#111">OFFICE  223</text><path d="M1422.7 719.9L1458.8 719.9" stroke="#111" stroke-width="0.9" fill="none" /><text x="1423" y="776.55" textLength="35.5" lengthAdjust="spacingAndGlyphs" xml:space="preserve" font-family="Liberation Sans" font-size="7.4" font-weight="bold" fill="#111">OFFICE  224</text><path d="M1422.7 778.4L1458.8 778.4" stroke="#111" stroke-width="0.9" fill="none" /><path d="M1079.5 816.5L1089.5 829" stroke="#222" stroke-width="0.8" fill="none" /><circle cx="1096.2" cy="837.1" r="10.3" fill="#fff" stroke="#333" stroke-width="0.9"/><path d="M1086 837.1L1106.4 837.1" stroke="#222" stroke-width="0.8" fill="none" /><text x="1096.2" y="835.4" text-anchor="middle" font-family="Liberation Sans" font-size="4.6" fill="#444">D1</text><text x="1096.2" y="842.2" text-anchor="middle" font-family="Liberation Sans" font-size="4.6" fill="#444">A6.01</text><path d="M187 1066L1787.6 1066" stroke="#333" stroke-width="1.3" fill="none" /><path d="M601 1066L601 1176" stroke="#333" stroke-width="1.2" fill="none" /><path d="M733 1066L733 1176" stroke="#333" stroke-width="1.2" fill="none" /><path d="M864.6 1066L864.6 1176" stroke="#333" stroke-width="1.2" fill="none" /><path d="M996.4 1066L996.4 1176" stroke="#333" stroke-width="1.2" fill="none" /><path d="M1128.6 1066L1128.6 1176" stroke="#333" stroke-width="1.2" fill="none" /><path d="M1260.5 1066L1260.5 1176" stroke="#333" stroke-width="1.2" fill="none" /><path d="M1392.4 1066L1392.4 1176" stroke="#333" stroke-width="1.2" fill="none" /><path d="M1524 1066L1524 1176" stroke="#333" stroke-width="1.2" fill="none" /><path d="M1655.7 1066L1655.7 1176" stroke="#333" stroke-width="1.2" fill="none" /><path d="M1655.7 1160.8L1787.6 1160.8" stroke="#333" stroke-width="1.1" fill="none" /><path d="M1675.3 1066.3L1777.4 1066.3" stroke="#222" stroke-width="1.8" fill="none" /><rect x="198.6" y="1072.6" width="101.4" height="94.8" rx="0" stroke="#6d90a8" stroke-width="1.1" fill="none" /><rect x="201.4" y="1075.4" width="95.6" height="89.2" rx="0" stroke="#6d90a8" stroke-width="1.1" fill="none" /><text transform="translate(221 1111) scale(0.69 1)" font-family="Liberation Sans" font-weight="bold" font-size="20.4" fill="#4b6f8e" stroke="#4b6f8e" stroke-width="0.5">B</text><text transform="translate(239.7 1111) scale(0.69 1)" font-family="Liberation Sans" font-weight="bold" font-size="20.4" fill="#4b6f8e" stroke="#4b6f8e" stroke-width="0.5">R</text><text transform="translate(221 1131.2) scale(0.69 1)" font-family="Liberation Sans" font-weight="bold" font-size="20.4" fill="#4b6f8e" stroke="#4b6f8e" stroke-width="0.5">G</text><text transform="translate(239.7 1131.2) scale(0.69 1)" font-family="Liberation Sans" font-weight="bold" font-size="20.4" fill="#4b6f8e" stroke="#4b6f8e" stroke-width="0.5">R</text><text x="234" y="1144" font-family="Liberation Sans" font-weight="bold" font-size="3.4" fill="#47708f" letter-spacing="0.5">DIGITISING</text><text x="534.7" y="1129.4" textLength="53" lengthAdjust="spacingAndGlyphs" font-family="Liberation Sans" font-weight="bold" font-size="37.6" fill="#1a7fd6">EAM</text><text x="588.3" y="1106.5" font-family="Liberation Sans" font-size="4.5" fill="#1a7fd6">®</text><text x="612.1" y="1080.25" textLength="95.4" lengthAdjust="spacingAndGlyphs" font-family="Liberation Sans" font-size="10.9" font-weight="bold" fill="#111">Capture Engineers</text><text x="612.1" y="1092.45" textLength="54.1" lengthAdjust="spacingAndGlyphs" font-family="Liberation Sans" font-size="10.9"  fill="#111">Mechanical</text><text x="612.1" y="1104.35" textLength="45.5" lengthAdjust="spacingAndGlyphs" font-family="Liberation Sans" font-size="10.9"  fill="#111">Electrical</text><text x="612.1" y="1116.25" textLength="44.7" lengthAdjust="spacingAndGlyphs" font-family="Liberation Sans" font-size="10.9"  fill="#111">Plumbing</text><text x="612.1" y="1140.25" textLength="68.3" lengthAdjust="spacingAndGlyphs" font-family="Liberation Sans" font-size="10.9"  fill="#111">1234 Miller St.</text><text x="612.1" y="1152.45" textLength="110.5" lengthAdjust="spacingAndGlyphs" font-family="Liberation Sans" font-size="10.9"  fill="#111">Manchester, NH 06930</text><text x="747.6" y="1080.25" textLength="101.3" lengthAdjust="spacingAndGlyphs" font-family="Liberation Sans" font-size="10.9" font-weight="bold" fill="#111">REVU ARCHITECTS</text><text x="747.6" y="1104.15" textLength="82.4" lengthAdjust="spacingAndGlyphs" font-family="Liberation Sans" font-size="10.9"  fill="#111">5555 N. Broad St</text><text x="747.6" y="1116.35" textLength="99" lengthAdjust="spacingAndGlyphs" font-family="Liberation Sans" font-size="10.9"  fill="#111">Pasadena CA 91101</text><text x="875" y="1080.25" textLength="94.2" lengthAdjust="spacingAndGlyphs" font-family="Liberation Sans" font-size="10.9" font-weight="bold" fill="#111">OFFICE BUILDING</text><text x="875" y="1104.15" textLength="92" lengthAdjust="spacingAndGlyphs" font-family="Liberation Sans" font-size="10.9"  fill="#111">Project No: 323232</text><text x="875" y="1128.45" textLength="78.8" lengthAdjust="spacingAndGlyphs" font-family="Liberation Sans" font-size="10.9"  fill="#111">Project Address:</text><text x="875" y="1140.25" textLength="82.1" lengthAdjust="spacingAndGlyphs" font-family="Liberation Sans" font-size="10.9"  fill="#111">123 Schonsett St</text><text x="875" y="1152.45" textLength="86.5" lengthAdjust="spacingAndGlyphs" font-family="Liberation Sans" font-size="10.9"  fill="#111">Chicago, IL 60601</text><text x="1003.5" y="1080.19" textLength="55.2" lengthAdjust="spacingAndGlyphs" font-family="Liberation Sans" font-size="5.2" font-weight="bold" fill="#111">LEGAL DISCLAIMER:</text><text x="1003.5" y="1092.42" textLength="119.5" lengthAdjust="spacingAndGlyphs" font-family="Liberation Sans" font-size="5.3"  fill="#333">ALL IDEAS, DESIGNS, AND PLANS INDICATED</text><text x="1003.5" y="1098.6" textLength="110" lengthAdjust="spacingAndGlyphs" font-family="Liberation Sans" font-size="5.3"  fill="#333">OR REPRESENTED BY THESE DRAWINGS</text><text x="1003.5" y="1104.78" textLength="112" lengthAdjust="spacingAndGlyphs" font-family="Liberation Sans" font-size="5.3"  fill="#333">ARE OWNED AND ARE THE PROPERTY OF</text><text x="1003.5" y="1110.96" textLength="115" lengthAdjust="spacingAndGlyphs" font-family="Liberation Sans" font-size="5.3"  fill="#333">BLUEBEAM, INC. AND WERE CREATED AND</text><text x="1003.5" y="1117.14" textLength="94.5" lengthAdjust="spacingAndGlyphs" font-family="Liberation Sans" font-size="5.3"  fill="#333">DEVELOPED FOR DEMONSTRATION</text><text x="1003.5" y="1123.32" textLength="109.5" lengthAdjust="spacingAndGlyphs" font-family="Liberation Sans" font-size="5.3"  fill="#333">PURPOSES ONLY. NONE OF SUCH IDEAS,</text><text x="1003.5" y="1129.5" textLength="115" lengthAdjust="spacingAndGlyphs" font-family="Liberation Sans" font-size="5.3"  fill="#333">DESIGNS, OR PLANS SHALL BE USED FOR</text><text x="1003.5" y="1135.68" textLength="116.5" lengthAdjust="spacingAndGlyphs" font-family="Liberation Sans" font-size="5.3"  fill="#333">ANY PURPOSE WHATSOEVER EXCEPT AS A</text><text x="1003.5" y="1141.86" textLength="98" lengthAdjust="spacingAndGlyphs" font-family="Liberation Sans" font-size="5.3"  fill="#333">DEMONSTRATION SET WITHOUT THE</text><text x="1003.5" y="1148.04" textLength="97" lengthAdjust="spacingAndGlyphs" font-family="Liberation Sans" font-size="5.3"  fill="#333">EXPRESSED WRITTEN CONCENT OF</text><text x="1003.5" y="1154.22" textLength="43.5" lengthAdjust="spacingAndGlyphs" font-family="Liberation Sans" font-size="5.3"  fill="#333">BLUEBEAM, INC.</text><text x="1143" y="1074.45"  font-family="Liberation Sans" font-size="4.8"  fill="#333">DATE</text><text x="1245.4" y="1074.45" text-anchor="end" font-family="Liberation Sans" font-size="4.8"  fill="#333">03/04/2018</text><path d="M1143 1075.9L1245.4 1075.9" stroke="#333" stroke-width="0.8" fill="none" /><text x="1143" y="1081.45"  font-family="Liberation Sans" font-size="4.8"  fill="#333">ISSUED FOR:</text><text x="1245.4" y="1081.45" text-anchor="end" font-family="Liberation Sans" font-size="4.8"  fill="#333">INTERNAL REVIEW</text><path d="M1143 1090L1245.4 1090" stroke="#333" stroke-width="0.8" fill="none" /><path d="M1143 1091.3L1245.4 1091.3" stroke="#333" stroke-width="0.8" fill="none" /><text x="1143" y="1095.45"  font-family="Liberation Sans" font-size="4.8"  fill="#333">PROJECT:</text><text x="1245.4" y="1095.45" text-anchor="end" font-family="Liberation Sans" font-size="4.8"  fill="#333">3232</text><path d="M1143 1097L1245.4 1097" stroke="#333" stroke-width="0.8" fill="none" /><text x="1143" y="1102.45"  font-family="Liberation Sans" font-size="4.8"  fill="#333">DRAWN BY:</text><text x="1245.4" y="1102.45" text-anchor="end" font-family="Liberation Sans" font-size="4.8"  fill="#333">Author</text><path d="M1143 1104L1245.4 1104" stroke="#333" stroke-width="0.8" fill="none" /><text x="1143" y="1109.45"  font-family="Liberation Sans" font-size="4.8"  fill="#333">CHECKED BY:</text><text x="1245.4" y="1109.45" text-anchor="end" font-family="Liberation Sans" font-size="4.8"  fill="#333">Checker</text><path d="M1143 1111L1245.4 1111" stroke="#333" stroke-width="0.8" fill="none" /><text x="1143" y="1116.45"  font-family="Liberation Sans" font-size="4.8"  fill="#333">APPROVED BY:</text><text x="1245.4" y="1116.45" text-anchor="end" font-family="Liberation Sans" font-size="4.8"  fill="#333">Approver</text><path d="M1143 1118L1245.4 1118" stroke="#333" stroke-width="0.8" fill="none" /><rect x="1143" y="1118.2" width="102.4" height="6.2" rx="0" stroke="#111" stroke-width="1.2" fill="none" /><path d="M1168.5 1118.2L1168.5 1124.4" stroke="#111" stroke-width="0.8" fill="none" /><path d="M1194.5 1118.2L1194.5 1124.4" stroke="#111" stroke-width="0.8" fill="none" /><text x="1155.7" y="1122.71" text-anchor="middle" font-family="Liberation Sans" font-size="3.8"  fill="#333">#</text><text x="1181.5" y="1122.71" text-anchor="middle" font-family="Liberation Sans" font-size="3.8"  fill="#333">DATE</text><text x="1220" y="1122.71" text-anchor="middle" font-family="Liberation Sans" font-size="3.8"  fill="#333">DESCRIPTION</text><text x="1294.6" y="1111.79" textLength="63.2" lengthAdjust="spacingAndGlyphs" font-family="Liberation Sans" font-size="14.8" font-weight="bold" fill="#111">NOT FOR</text><text x="1269.7" y="1127.69" textLength="112.6" lengthAdjust="spacingAndGlyphs" font-family="Liberation Sans" font-size="14.8" font-weight="bold" fill="#111">CONSTRUCTION</text><text x="1399.3" y="1079.85" textLength="39.7" lengthAdjust="spacingAndGlyphs" font-family="Liberation Sans" font-size="11.2"  fill="#111">STAMP:</text><text x="1531.3" y="1079.85" textLength="39.7" lengthAdjust="spacingAndGlyphs" font-family="Liberation Sans" font-size="11.2"  fill="#111">STAMP:</text><text x="1678.4" y="1075.04" textLength="85" lengthAdjust="spacingAndGlyphs" font-family="Liberation Sans" font-size="6.8"  fill="#222">SHEET TITLE &amp; NUMBER</text><text x="1676.5" y="1090.95" textLength="88.8" lengthAdjust="spacingAndGlyphs" font-family="Liberation Sans" font-size="11.2"  fill="#111">LEVEL 02 FLOOR</text><text x="1706.7" y="1103.35" textLength="28.3" lengthAdjust="spacingAndGlyphs" font-family="Liberation Sans" font-size="11.2"  fill="#111">PLAN</text><text x="1680.2" y="1149.35" textLength="82.8" lengthAdjust="spacingAndGlyphs" font-family="Liberation Sans" font-size="29.5" font-weight="bold" fill="#111">A2.2.1</text><text x="1678" y="1169.57" textLength="94.9" lengthAdjust="spacingAndGlyphs" font-family="Liberation Sans" font-size="6.9"  fill="#111">Copyright Bluebeam Software</text></g></svg>
<div style="position:absolute;left:0px;top:0px;width:2010px;height:27px;background:#000;"></div>
<div style="position:absolute;left:25.50px;top:5.00px;font:18px/1 'Liberation Sans',sans-serif;color:#fff;white-space:pre;letter-spacing:-0.606px;">Revu</div>
<div style="position:absolute;left:105.50px;top:5.00px;font:18px/1 'Liberation Sans',sans-serif;color:#fff;white-space:pre;">File</div>
<div style="position:absolute;left:174.50px;top:5.00px;font:18px/1 'Liberation Sans',sans-serif;color:#fff;white-space:pre;letter-spacing:-0.172px;">Edit</div>
<div style="position:absolute;left:244.50px;top:5.00px;font:18px/1 'Liberation Sans',sans-serif;color:#fff;white-space:pre;letter-spacing:0.437px;">View</div>
<div style="position:absolute;left:321.50px;top:5.00px;font:18px/1 'Liberation Sans',sans-serif;color:#fff;white-space:pre;letter-spacing:0.353px;">Document</div>
<div style="position:absolute;left:443.50px;top:5.00px;font:18px/1 'Liberation Sans',sans-serif;color:#fff;white-space:pre;letter-spacing:0.243px;">Batch</div>
<div style="position:absolute;left:529.50px;top:5.00px;font:18px/1 'Liberation Sans',sans-serif;color:#fff;white-space:pre;letter-spacing:0.370px;">Tools</div>
<div style="position:absolute;left:611.00px;top:5.00px;font:18px/1 'Liberation Sans',sans-serif;color:#fff;white-space:pre;letter-spacing:0.296px;">Window</div>
<div style="position:absolute;left:715.50px;top:5.00px;font:18px/1 'Liberation Sans',sans-serif;color:#fff;white-space:pre;letter-spacing:0.161px;">Help</div>
<svg style="position:absolute;left:1532px;top:0px;" width="38" height="29" viewBox="0 0 38 29"><defs><clipPath id="lg"><rect x="3" y="0" width="35" height="28.3"/></clipPath></defs><g clip-path="url(#lg)"><circle cx="18.5" cy="12.7" r="15.6" fill="#fff"/><path d="M13.6 -1Q6.8 12 5.6 29" stroke="#000" stroke-width="3.3" fill="none"/><path d="M14.5 0.2C21 -1.8 30 1 29.3 8.2C28.8 14.5 19 15.2 10.8 18.6" stroke="#000" stroke-width="3.6" fill="none"/><path d="M15 -2H38V5L31.9 6.9Q30 0 15 -1.2Z" fill="#000"/><path d="M10.8 18.2L22.3 30" stroke="#000" stroke-width="5.4" fill="none"/></g></svg>
<div style="position:absolute;left:1580.20px;top:5.00px;font:bold 17.5px/1 'Liberation Sans',sans-serif;color:#fff;white-space:pre;letter-spacing:-0.912px;">taimoor@brightergraphics.com</div>
<svg style="position:absolute;left:1836px;top:0px;" width="174" height="27" viewBox="0 0 174 27"><path d="M5.8 12.7H27.7" stroke="#fff" stroke-width="2"/><path d="M75 8.5V4.2H90.2V19.2H85.5" stroke="#fff" stroke-width="1.8" fill="none"/><rect x="69.6" y="9" width="15.4" height="15" stroke="#fff" stroke-width="1.8" fill="none"/><path d="M134 4L153.2 23.8M153.2 4L134 23.8" stroke="#fff" stroke-width="2.2"/></svg>
<div style="position:absolute;left:0px;top:27px;width:2010px;height:48px;background:#2e2e2e;"></div>
<div style="position:absolute;left:0px;top:75px;width:2010px;height:2px;background:#161616;"></div>
<svg style="position:absolute;left:0px;top:27px;" width="1060" height="48" viewBox="0 0 1060 48"><path d="M6.5 5V44" stroke="#8a8a8a" stroke-width="1.6" stroke-dasharray="1.6 2.4"/><path d="M461 4V44" stroke="#8a8a8a" stroke-width="1.6" stroke-dasharray="1.6 2.4"/><rect x="23.5" y="12.5" width="24" height="24" fill="none" stroke="#fff" stroke-width="1.8"/><text x="35.5" y="30.7" font-family="Liberation Sans" font-size="17.5" fill="#fff" text-anchor="middle">A</text><path d="M79.9 27.9L71.9 36.3H84.3L86.5 34" fill="none" stroke="#fff" stroke-width="1.7"/><path d="M88.3 12.1L80.3 18.9L82.6 20.8M82.8 20.4L78.4 25.4L88.3 34.6L96.6 29M82.8 20.4L94.3 32M80.6 23L91 33" fill="none" stroke="#d2a324" stroke-width="1.5"/><path d="M136.6 11.9L126.6 23.4M144.5 21.4L133.1 30.3M126.1 23.7L133.6 30.8M126.6 23.4L123.1 31.8M133.1 30.3L125.1 34.3M124.8 27.8L129.5 32.2M123.1 31.8L125.1 34.3" fill="none" stroke="#1b80d8" stroke-width="1.7"/><path d="M123.6 33.2L120.3 36.8" stroke="#fff" stroke-width="3.6"/><path d="M169.3 13.3H187V21.1H169.3Z" fill="none" stroke="#fff" stroke-width="1.8"/><path d="M187.6 21.7L192.8 26.9L186.8 33" fill="none" stroke="#fff" stroke-width="1.8" stroke-width="1.6"/><path d="M168.6 35A2.4 3.7 0 0 1 173.4 35A2.4 3.7 0 0 1 178.2 35A2.4 3.7 0 0 1 183 35A2.4 3.7 0 0 1 187.8 35A2.4 3.7 0 0 1 192.6 35" fill="none" stroke="#fff" stroke-width="1.8" stroke-width="1.5"/><path d="M237.59 28.06A3.6 3.6 0 0 1 232.56 33.09A3.6 3.6 0 0 1 225.44 33.09A3.6 3.6 0 0 1 220.41 28.06A3.6 3.6 0 0 1 220.41 20.94A3.6 3.6 0 0 1 225.44 15.91A3.6 3.6 0 0 1 232.56 15.91A3.6 3.6 0 0 1 237.59 20.94A3.6 3.6 0 0 1 237.59 28.06" fill="none" stroke="#fff" stroke-width="1.8"/><path d="M265.5 13H284V21.5H265.5Z" fill="none" stroke="#fff" stroke-width="1.8"/><path d="M284 21.5L288.5 26.5L281 34" fill="none" stroke="#fff" stroke-width="1.8" stroke-width="1.7"/><path d="M278.5 37L281 30L285 34Z" fill="#fff"/><path d="M323.6 27.4V23.4Q323.6 21.6 322.5 20.2A4.8 4.8 0 1 1 329.3 20.2Q328.2 21.6 328.2 23.4V27.4" fill="none" stroke="#fff" stroke-width="1.8" stroke-width="1.7"/><path d="M316 27.4H336.4Q338.6 27.4 338.6 29.6V33.3H313.8V29.6Q313.8 27.4 316 27.4Z" fill="none" stroke="#fff" stroke-width="1.8" stroke-width="1.7"/><path d="M313.6 36.4H338.8" fill="none" stroke="#fff" stroke-width="1.8" stroke-width="1.5"/><path d="M342.8 21.6L348.6 27.5L354.4 21.6" fill="none" stroke="#fff" stroke-width="1.8" stroke-width="1.9"/><rect x="371.2" y="14.2" width="23.4" height="19.8" fill="none" stroke="#fff" stroke-width="1.8" stroke-width="1.7"/><ellipse cx="379.2" cy="19.4" rx="2.3" ry="2" fill="#fff"/><path d="M371.5 30.3L375.9 26.4L379.9 29.9L387.8 21.9L394.3 28.6" fill="none" stroke="#fff" stroke-width="1.8" stroke-width="1.6"/><path d="M429.5 16.4H444.5M444.5 18.6V35M423.3 22.5V37.3M425.5 37.3H440" fill="none" stroke="#fff" stroke-width="1.8" stroke-width="1.7" stroke-dasharray="3.3 2.2"/><path d="M441 37.3H444.5V33.8" fill="none" stroke="#fff" stroke-width="1.8" stroke-width="1.7"/><path d="M417.2 16.4H428.3M423.3 10.4V21" fill="none" stroke="#fff" stroke-width="1.8" stroke-width="1.7"/><path d="M478 36L502 12" fill="none" stroke="#fff" stroke-width="1.8"/><path d="M526.5 36L546 16.5" fill="none" stroke="#fff" stroke-width="1.8"/><path d="M540 15L550 12.5L547.5 22.5Z" fill="#fff" stroke="#fff" stroke-width="1"/><path d="M574.5 36.5Q577 16 599.5 12.5" fill="none" stroke="#fff" stroke-width="1.8"/><path d="M623.5 36.5L626.5 25L634.5 28.5L632 16.5L643 20L647 12" fill="none" stroke="#fff" stroke-width="1.8"/><path d="M672.5 25H695M674.5 19.5V30.5M693 19.5V30.5" fill="none" stroke="#fff" stroke-width="1.8" stroke-width="1.7"/><path d="M671.5 28L677.5 22M690 28L696 22" fill="none" stroke="#fff" stroke-width="1.8" stroke-width="1.3"/><rect x="720" y="15" width="24.5" height="18" fill="none" stroke="#fff" stroke-width="1.8"/><ellipse cx="780.5" cy="24.5" rx="12.3" ry="9.3" fill="none" stroke="#fff" stroke-width="1.8"/><path d="M817 12.5H836.5L829 22.5L840.5 36.5H817Z" fill="none" stroke="#fff" stroke-width="1.8"/><path d="M865.5 37V14H891.5" fill="none" stroke="#7c5caa" stroke-width="1.8" stroke-width="2"/><path d="M865.5 17H862.0M865.5 21.5H862.0M865.5 26H862.0M865.5 30.5H862.0M865.5 35H862.0M869.5 14V10.5M874.0 14V10.5M878.5 14V10.5M883.0 14V10.5M887.5 14V10.5" fill="none" stroke="#7c5caa" stroke-width="1.8" stroke-width="1.5"/><path d="M913.8 37V14H939.8" fill="none" stroke="#7c5caa" stroke-width="1.8" stroke-width="2"/><path d="M913.8 17H910.3M913.8 21.5H910.3M913.8 26H910.3M913.8 30.5H910.3M913.8 35H910.3M917.8 14V10.5M922.3 14V10.5M926.8 14V10.5M931.3 14V10.5M935.8 14V10.5" fill="none" stroke="#7c5caa" stroke-width="1.8" stroke-width="1.5"/><path d="M962.5 37V14H988.5" fill="none" stroke="#7c5caa" stroke-width="1.8" stroke-width="2"/><path d="M962.5 17H959.0M962.5 21.5H959.0M962.5 26H959.0M962.5 30.5H959.0M962.5 35H959.0M966.5 14V10.5M971.0 14V10.5M975.5 14V10.5M980.0 14V10.5M984.5 14V10.5" fill="none" stroke="#7c5caa" stroke-width="1.8" stroke-width="1.5"/><path d="M1010.7 37V14H1036.7" fill="none" stroke="#7c5caa" stroke-width="1.8" stroke-width="2"/><path d="M1010.7 17H1007.2M1010.7 21.5H1007.2M1010.7 26H1007.2M1010.7 30.5H1007.2M1010.7 35H1007.2M1014.7 14V10.5M1019.2 14V10.5M1023.7 14V10.5M1028.2 14V10.5M1032.7 14V10.5" fill="none" stroke="#7c5caa" stroke-width="1.8" stroke-width="1.5"/><path d="M872 26.5L879.5 19.5H889.5V36H872" fill="none" stroke="#fff" stroke-width="1.8" stroke-width="1.7" /><rect x="870" y="24.5" width="4" height="4" fill="#fff"/><rect x="877.5" y="17.5" width="4" height="4" fill="#fff"/><rect x="887.5" y="17.5" width="4" height="4" fill="#fff"/><rect x="887.5" y="34" width="4" height="4" fill="#fff"/><rect x="870" y="34" width="4" height="4" fill="#fff"/><path d="M920.5 37V27.5L930.5 18H939.5V37Z" fill="none" stroke="#fff" stroke-width="1.8"/><path d="M968 20V32M987.5 20V32M971 26H984.5" fill="none" stroke="#fff" stroke-width="1.8" stroke-width="1.8"/><path d="M969.5 26L974.5 22.5V29.5ZM986 26L981 22.5V29.5Z" fill="#fff"/><path d="M1021 21V34M1025.3 20.5V33.5M1029.6 20V33M1033.9 19.5V32.5M1015.5 32L1037 22.5" fill="none" stroke="#fff" stroke-width="1.8" stroke-width="1.7"/></svg>
<div style="position:absolute;left:0px;top:77px;width:2010px;height:49px;background:#2e2e2e;"></div>
<div style="position:absolute;left:0px;top:126px;width:2010px;height:2px;background:#161616;"></div>
<div style="position:absolute;left:10.2px;top:84.5px;width:61px;height:34px;border:1.6px solid #858585;border-radius:5px;box-sizing:border-box"></div>
<svg style="position:absolute;left:10px;top:84px;" width="70" height="36" viewBox="0 0 70 36"><path d="M8.6 5.8H20.3L25.8 11.6V29.4H8.6Z" fill="none" stroke="#e6e6e6" stroke-width="1.8"/><path d="M20.1 5.8V11.8H25.8" fill="none" stroke="#e6e6e6" stroke-width="1.8" stroke-width="1.6"/><rect x="13.9" y="18.4" width="6.4" height="7.1" fill="none" stroke="#e6e6e6" stroke-width="1.8" stroke-width="1.5"/><path d="M13.9 18.4V15.8" fill="none" stroke="#e6e6e6" stroke-width="1.8" stroke-width="1.3"/><rect x="16" y="21.4" width="2" height="2" fill="#e6e6e6"/><path d="M41.6 14.4L47.4 20.5L53.2 14.4" fill="none" stroke="#e6e6e6" stroke-width="1.8" stroke-width="1.9"/></svg>
<div style="position:absolute;left:86.00px;top:93.00px;font:bold 17px/1 'Liberation Sans',sans-serif;color:#fff;white-space:pre;letter-spacing:-0.615px;">Name:</div>
<div style="position:absolute;left:140.00px;top:93.00px;font:17px/1 'Liberation Sans',sans-serif;color:#fff;white-space:pre;letter-spacing:-0.468px;">Brighter Graphics - Floor Plan 1</div>
<div style="position:absolute;left:380.50px;top:93.00px;font:bold 17px/1 'Liberation Sans',sans-serif;color:#fff;white-space:pre;letter-spacing:-1.049px;">Pages:</div>
<div style="position:absolute;left:437.50px;top:93.00px;font:17px/1 'Liberation Sans',sans-serif;color:#fff;white-space:pre;">1</div>
<div style="position:absolute;left:459.1px;top:84.5px;width:35.6px;height:34px;border:1.6px solid #858585;border-radius:5px;box-sizing:border-box"></div>
<svg style="position:absolute;left:459px;top:84px;" width="36" height="36" viewBox="0 0 36 36"><path d="M26.7 20.9V12.9L20 6.4H8.6V30.1H20.5" fill="none" stroke="#e6e6e6" stroke-width="1.8"/><path d="M20 6.4V12.9H26.7" fill="none" stroke="#e6e6e6" stroke-width="1.8" stroke-width="1.6"/><path d="M23 27.6H30.2M26.6 24V31.2" stroke="#d2b41c" stroke-width="1.6"/></svg>
<div style="position:absolute;left:0px;top:128px;width:2010px;height:48px;background:#2e2e2e;"></div>
<div style="position:absolute;left:49px;top:128px;width:291.5px;height:48px;background:#4d4d4d;"></div>
<div style="position:absolute;left:340.5px;top:128px;width:1.5px;height:48px;background:#0e0e0e;"></div>
<div style="position:absolute;left:61.50px;top:143.00px;font:17px/1 'Liberation Sans',sans-serif;color:#fff;white-space:pre;letter-spacing:-0.452px;">Brighter Graphics - Floor Plan 1</div>
<svg style="position:absolute;left:305px;top:140px;" width="24" height="24" viewBox="0 0 24 24"><path d="M5.2 4.3L20 19.4M20 4.3L5.2 19.4" stroke="#f2f2f2" stroke-width="1.6"/></svg>
<svg style="position:absolute;left:1975px;top:142px;" width="24" height="20" viewBox="0 0 24 20"><path d="M7.5 6.8L13.6 13.1L19.7 6.8" stroke="#f0f0f0" stroke-width="1.7" fill="none"/></svg>
<div style="position:absolute;left:0px;top:128px;width:48px;height:1048px;background:#2b2b2b;"></div>
<div style="position:absolute;left:48px;top:128px;width:1.5px;height:1048px;background:#1c1c1c;"></div>
<div style="position:absolute;left:0px;top:757px;width:48px;height:48px;background:#1b5885;"></div>
<svg style="position:absolute;left:10px;top:138px;" width="28" height="28" viewBox="0 0 28 28"><circle cx="10.8" cy="10" r="8.3" fill="none" stroke="#fff" stroke-width="1.8" stroke-linejoin="miter"/><path d="M16.7 15.9L26.3 26" fill="none" stroke="#fff" stroke-width="1.8" stroke-linejoin="miter"/></svg>
<svg style="position:absolute;left:10px;top:186px;" width="28" height="28" viewBox="0 0 28 28"><path d="M2.1 14.1L10.8 6.4H26.2V21.9H10.8Z" fill="none" stroke="#fff" stroke-width="1.8" stroke-linejoin="miter"/></svg>
<svg style="position:absolute;left:10px;top:235px;" width="28" height="28" viewBox="0 0 28 28"><path d="M1.8 25.5H27" fill="none" stroke="#fff" stroke-width="1.8" stroke-linejoin="miter"/><path d="M5.1 22.5L7.3 11.4Q12 10.8 15.8 6.6M20.6 10.6Q17 14.5 16.3 20.4Q10 18.8 5.1 22.5" fill="none" stroke="#fff" stroke-width="1.8" stroke-linejoin="miter" stroke-width="1.7" stroke-linejoin="round"/><path d="M18.2 1.4L14.3 4.3L23.3 12.7L26.3 9.6" fill="none" stroke="#fff" stroke-width="1.8" stroke-linejoin="miter" stroke-width="1.7"/><circle cx="11.6" cy="16.3" r="1.1" fill="#fff"/></svg>
<svg style="position:absolute;left:10px;top:283px;" width="28" height="28" viewBox="0 0 28 28"><rect x="3.2" y="3.1" width="8.6" height="8.2" fill="none" stroke="#fff" stroke-width="1.8" stroke-linejoin="miter"/><rect x="3.2" y="17" width="8.6" height="8.2" fill="none" stroke="#fff" stroke-width="1.8" stroke-linejoin="miter"/><rect x="17" y="3.1" width="8.6" height="8.2" fill="none" stroke="#fff" stroke-width="1.8" stroke-linejoin="miter"/><rect x="17" y="17" width="8.6" height="8.2" fill="none" stroke="#fff" stroke-width="1.8" stroke-linejoin="miter"/></svg>
<svg style="position:absolute;left:10px;top:331px;" width="28" height="28" viewBox="0 0 28 28"><rect x="5.9" y="3.1" width="17.3" height="22.9" fill="none" stroke="#fff" stroke-width="1.8" stroke-linejoin="miter"/><path d="M5.9 12.5H23.2" fill="none" stroke="#fff" stroke-width="1.8" stroke-linejoin="miter"/><path d="M10.6 6v2.4h7.8V6M10.6 15.8v2.4h7.8V15.8" fill="none" stroke="#fff" stroke-width="1.8" stroke-linejoin="miter" stroke-width="1.5"/></svg>
<svg style="position:absolute;left:10px;top:380px;" width="28" height="28" viewBox="0 0 28 28"><path d="M5.9 25.2V3.5H23.2V25.2Z" fill="none" stroke="#fff" stroke-width="1.8" stroke-linejoin="miter"/><path d="M5.9 22H23.2" fill="none" stroke="#fff" stroke-width="1.8" stroke-linejoin="miter" stroke-width="1.3"/><path d="M8.3 2V16.6L11.8 14L15.2 16.6V2" fill="none" stroke="#fff" stroke-width="1.8" stroke-linejoin="miter" stroke-width="1.6"/></svg>
<svg style="position:absolute;left:10px;top:428px;" width="28" height="28" viewBox="0 0 28 28"><path d="M21.4 19H26.3V2.55H2.55V26.1H12.2V19M7.6 19H16.9M16.5 2.55V12H11.4M2.55 12H7.5" fill="none" stroke="#fff" stroke-width="1.8" stroke-linejoin="miter"/></svg>
<svg style="position:absolute;left:10px;top:477px;" width="28" height="28" viewBox="0 0 28 28"><path d="M22.3 4V1.5H2.4V25.8H22.3V19.3" fill="none" stroke="#fff" stroke-width="1.8" stroke-linejoin="miter"/><rect x="5.3" y="5.6" width="14.1" height="3.2" fill="none" stroke="#fff" stroke-width="1.8" stroke-linejoin="miter" stroke-width="1.5"/><path d="M5.3 12.7H15.5M5.3 17H10M5.3 21.3H10" fill="none" stroke="#fff" stroke-width="1.8" stroke-linejoin="miter" stroke-width="1.6"/><path d="M11.2 22.5L12.7 18.2L23.7 8L26.4 11.1L15.9 21.7Z" fill="none" stroke="#fff" stroke-width="1.8" stroke-linejoin="miter" stroke-width="1.7" stroke-linejoin="round"/></svg>
<svg style="position:absolute;left:10px;top:525px;" width="28" height="28" viewBox="0 0 28 28"><path d="M14.3 1.9L26.2 9.75L14.3 17.6L2.4 9.75Z" fill="none" stroke="#fff" stroke-width="1.8" stroke-linejoin="miter"/><path d="M6.8 15.2L2.4 18.2L14.3 26.2L26.2 18.2L21.7 15.2" fill="none" stroke="#fff" stroke-width="1.8" stroke-linejoin="miter"/></svg>
<svg style="position:absolute;left:10px;top:573px;" width="28" height="28" viewBox="0 0 28 28"><path d="M11.96 1.36L16.04 1.36L16.38 4.29L19.18 5.45L21.49 3.62L24.38 6.51L22.55 8.81L23.71 11.62L26.64 11.96L26.64 16.04L23.71 16.38L22.55 19.18L24.38 21.49L21.49 24.38L19.19 22.55L16.38 23.71L16.04 26.64L11.96 26.64L11.62 23.71L8.82 22.55L6.51 24.38L3.62 21.49L5.45 19.19L4.29 16.38L1.36 16.04L1.36 11.96L4.29 11.62L5.45 8.82L3.62 6.51L6.51 3.62L8.81 5.45L11.62 4.29Z" fill="none" stroke="#fff" stroke-width="1.8" stroke-linejoin="miter" stroke-width="1.6" stroke-linejoin="round"/><circle cx="14" cy="14" r="7" fill="none" stroke="#fff" stroke-width="1.8" stroke-linejoin="miter" stroke-width="1.7"/></svg>
<svg style="position:absolute;left:10px;top:621px;" width="28" height="28" viewBox="0 0 28 28"><path d="M4.9 1.6H24.1L26.7 17.7H2.1Z" fill="none" stroke="#fff" stroke-width="1.8" stroke-linejoin="miter" stroke-width="1.6"/><path d="M8.4 4.9H21L22.5 14.6H6.6ZM17 4.9L18.2 14.6" fill="none" stroke="#fff" stroke-width="1.8" stroke-linejoin="miter" stroke-width="1.5"/><path d="M2.1 20.4H26.7M2.1 23.4H26.7M2.1 26.3H26.7" fill="none" stroke="#fff" stroke-width="1.8" stroke-linejoin="miter" stroke-width="1.7"/></svg>
<svg style="position:absolute;left:10px;top:670px;" width="28" height="28" viewBox="0 0 28 28"><path d="M2.4 23.5V11.5Q2.4 8 6 8H22.8Q26.4 8 26.4 11.5V23.5Z" fill="none" stroke="#fff" stroke-width="1.8" stroke-linejoin="miter"/><path d="M9.4 8V6Q9.4 3.5 12 3.5H17Q19.6 3.5 19.6 6V8" fill="none" stroke="#fff" stroke-width="1.8" stroke-linejoin="miter"/><path d="M2.4 15.2H26.4" fill="none" stroke="#fff" stroke-width="1.8" stroke-linejoin="miter"/><path d="M8.8 15.2v1.8M20.2 15.2v1.8" fill="none" stroke="#fff" stroke-width="1.8" stroke-linejoin="miter" stroke-width="2.4"/></svg>
<svg style="position:absolute;left:10px;top:718px;" width="28" height="28" viewBox="0 0 28 28"><path d="M2.4 6.9L19.6 1.85L26.4 7.3V21L19.6 26.3L2.4 21Z" fill="none" stroke="#fff" stroke-width="1.8" stroke-linejoin="miter"/><path d="M6.5 22.3V15.6H12.3V24M9.4 17.5V23" fill="none" stroke="#fff" stroke-width="1.8" stroke-linejoin="miter" stroke-width="1.6"/></svg>
<svg style="position:absolute;left:10px;top:766px;" width="28" height="28" viewBox="0 0 28 28"><rect x="1.5" y="8" width="25" height="12" fill="none" stroke="#fff" stroke-width="1.8" stroke-linejoin="miter"/><path d="M6.5 8v5.5M11.5 8v7.5M16.5 8v5.5M21.5 8v7.5" fill="none" stroke="#fff" stroke-width="1.8" stroke-linejoin="miter"/></svg>
<div style="position:absolute;left:1987px;top:176px;width:23px;height:999px;background:#f0f0f0;"></div>
<div style="position:absolute;left:1994.3px;top:366px;width:9.8px;height:762px;background:#8a8a8a;"></div>
<div style="position:absolute;left:0px;top:1175.5px;width:2010px;height:48.5px;background:#2e2e2e;"></div>
<div style="position:absolute;left:0px;top:1223.7px;width:2010px;height:2px;background:#0c0c0c;"></div>
<div style="position:absolute;left:0px;top:1175.5px;width:48px;height:48.2px;background:#1b5885;"></div>
<div style="position:absolute;left:548.3px;top:1175.5px;width:48.5px;height:47.5px;background:#1b5885;"></div>
<svg style="position:absolute;left:0px;top:1175.5px;" width="1400" height="48" viewBox="0 0 1400 48"><g transform="translate(0 -0.9)"><path d="M13 16.5h3.2v3H13zM13 23.2h3.2v3H13zM13 30h3.2v3H13z" fill="#fff"/><path d="M20 16.6h15.5v2.8H20zM20 23.3h15.5v2.8H20zM20 30.1h15.5v2.8H20z" fill="#fff"/><rect x="61.5" y="12.5" width="23" height="23" fill="none" stroke="#6a6a6a" stroke-width="1.8"/><path d="M61.5 15.5H84.5" fill="none" stroke="#6a6a6a" stroke-width="1.8" stroke-width="1.2"/><rect x="110" y="12.5" width="23" height="23" fill="none" stroke="#fff" stroke-width="1.8"/><path d="M121.5 12.5V35.5M110 15H133" fill="none" stroke="#fff" stroke-width="1.8" stroke-width="1.6"/><rect x="158.5" y="12.5" width="23" height="23" fill="none" stroke="#fff" stroke-width="1.8"/><path d="M158.5 24H181.5M158.5 15H181.5M158.5 26.5H181.5" fill="none" stroke="#fff" stroke-width="1.8" stroke-width="1.5"/><path d="M198 12.5V38" stroke="#666" stroke-width="1.4"/><path d="M215.5 12.5H226.5L233.5 19.5V37.5H215.5Z" fill="none" stroke="#fff" stroke-width="1.8"/><path d="M226.5 12.5V19.5H233.5" fill="none" stroke="#fff" stroke-width="1.8" stroke-width="1.4"/><path d="M224.3 20.5L227 24H225V27.3H228.3V25.3L231.8 28L228.3 30.7V28.7H225V32H227L224.3 35.5L221.6 32H223.6V28.7H220.3V30.7L216.8 28L220.3 25.3V27.3H223.6V24H221.6Z" fill="#fff"/></g><path d="M561.6 23.6Q560.6 25 561.9 26.3L568.7 33Q570 36.2 572.5 36.2H575.5Q577.8 36.2 578.4 33.5L579.5 30.3L584 21Q584.6 19.2 583 18.6Q581.6 18.2 580.6 19.6L578.2 23L580 16.6Q580.3 14.6 578.6 14.2Q577 14 576.5 15.6L574.9 21.4V13.8Q574.9 11.8 573.2 11.8Q571.5 11.8 571.5 13.8L571.1 21L569.2 14.4Q568.6 13.2 567.3 13.6Q565.9 14.2 566.4 15.8L568.4 25.8L563.6 22.9Q562.4 22.4 561.6 23.6Z" fill="none" stroke="#fff" stroke-width="1.8" stroke-width="1.5" stroke-linejoin="round"/><path d="M614.2 13V33.5L619 29.5L621.8 36L625 34.7L622.3 28.3L628.5 28Z" fill="none" stroke="#fff" stroke-width="1.8" stroke-width="1.7"/><path d="M663.2 12.5V36.5M658.2 12.5H668.2M658.2 36.5H668.2" fill="none" stroke="#fff" stroke-width="1.8" stroke-width="1.7"/><text x="672.3" y="30" font-family="Liberation Sans" font-size="16.5" fill="#fff" text-anchor="middle">A</text><circle cx="714.4" cy="20.7" r="8.6" fill="none" stroke="#fff" stroke-width="1.8"/><path d="M720.5 27L730.5 37" fill="none" stroke="#fff" stroke-width="1.8"/><path d="M710.5 18.3H718.3M714.4 14.5V22M710.8 24.2H718" fill="none" stroke="#fff" stroke-width="1.8" stroke-width="1.4"/><path d="M760 18V31" fill="none" stroke="#6a6a6a" stroke-width="1.8"/><path d="M771.5 18.5V30.5L762.8 24.5Z" fill="none" stroke="#6a6a6a" stroke-width="1.8" stroke-width="1.5"/><path d="M818 18.5V30.5L809.5 24.5Z" fill="none" stroke="#6a6a6a" stroke-width="1.8" stroke-width="1.5"/><path d="M1204 18.5V30.5L1212.5 24.5Z" fill="none" stroke="#6a6a6a" stroke-width="1.8" stroke-width="1.5"/><path d="M1251 18.5V30.5L1259.5 24.5Z" fill="none" stroke="#6a6a6a" stroke-width="1.8" stroke-width="1.5"/><path d="M1262.3 18V31" fill="none" stroke="#6a6a6a" stroke-width="1.8"/><path d="M1283.5 12V37" stroke="#777" stroke-width="1.4"/><circle cx="1309.8" cy="24.4" r="12" fill="none" stroke="#fff" stroke-width="1.8" stroke-width="1.9"/><path d="M1313.5 18.8V30L1304.8 24.4Z" fill="none" stroke="#fff" stroke-width="1.8" stroke-width="1.6"/><circle cx="1358.3" cy="24.4" r="12" fill="none" stroke="#6a6a6a" stroke-width="1.8" stroke-width="1.6"/><path d="M1355 18.8V30L1363.7 24.4Z" fill="none" stroke="#6a6a6a" stroke-width="1.8" stroke-width="1.5"/></svg>
<div style="position:absolute;left:840.5px;top:1187px;width:342px;height:26px;border:2px solid #7d7d7d;border-radius:4px;box-sizing:border-box"></div>
<div style="position:absolute;left:946.40px;top:1191.00px;font:17px/1 'Liberation Sans',sans-serif;color:#fff;white-space:pre;letter-spacing:-0.436px;">Floor Plan (1 of 1)</div>
<div style="position:absolute;left:1677.50px;top:1190.00px;font:18px/1 'Liberation Sans',sans-serif;color:#fff;white-space:pre;letter-spacing:0.057px;">106.68 x 76.20 cm</div>
<div style="position:absolute;left:1854.80px;top:1190.00px;font:18px/1 'Liberation Sans',sans-serif;color:#fff;white-space:pre;letter-spacing:0.038px;">9.525 cm = 30&#x27;-0&quot;</div>
<div style="position:absolute;left:0px;top:1225.5px;width:2010px;height:47.5px;background:#2e2e2e;"></div>
<div style="position:absolute;left:0px;top:1272.7px;width:2010px;height:2.3px;background:#3d3d3d;"></div>
<div style="position:absolute;left:1257.2px;top:1225.7px;width:144.8px;height:47.2px;background:#1b5885;"></div>
<div style="position:absolute;left:1305.2px;top:1225.7px;width:1px;height:47.2px;background:#1a507d;"></div>
<div style="position:absolute;left:1353.7px;top:1225.7px;width:1px;height:47.2px;background:#1a507d;"></div>
<div style="position:absolute;left:1451px;top:1225.7px;width:48.5px;height:47.2px;background:#1b5885;"></div>
<svg style="position:absolute;left:0px;top:1225.5px;" width="1530" height="48" viewBox="0 0 1530 48"><path d="M1225.5 11V34.5M1232.2 11V34.5M1239 11V34.5M1220.5 16H1244M1220.5 22.7H1244M1220.5 29.5H1244" fill="none" stroke="#fff" stroke-width="1.8"/><path d="M1274.5 11.5V34M1281.5 11.5V24M1288.5 11.5V20M1269 17H1292.5M1269 24H1280M1269 31H1278" fill="none" stroke="#fff" stroke-width="1.8"/><path d="M1281.5 23.0H1289.0A5.7 5.7 0 0 1 1289.0 34.5H1281.5V30.8H1288.7A2 2 0 0 0 1288.7 26.7H1281.5Z" fill="none" stroke="#fff" stroke-width="1.8" stroke-width="1.6"/><path d="M1332 35.5H1320.5V12.5H1331.5L1337.5 18.5V21M1331.5 12.5V18.5H1337.5" fill="none" stroke="#fff" stroke-width="1.8" stroke-width="1.7"/><path d="M1330.5 23.0H1338.0A5.7 5.7 0 0 1 1338.0 34.5H1330.5V30.8H1337.7A2 2 0 0 0 1337.7 26.7H1330.5Z" fill="none" stroke="#fff" stroke-width="1.8" stroke-width="1.6"/><path d="M1369.1999999999998 24.8L1383.6999999999998 10.8L1390.3999999999999 16.6L1386.8 19.8" fill="none" stroke="#fff" stroke-width="1.8" stroke-width="1.6"/><path d="M1368.6 25.4L1374.3999999999999 31.2M1368.8999999999999 25.2L1366.8999999999999 29.6M1374.1 31L1370.1 33" fill="none" stroke="#fff" stroke-width="1.8" stroke-width="1.4"/><path d="M1366.6999999999998 29.6L1370.5 33.2L1368.3 35.6L1364.5 32Z" fill="#fff"/><path d="M1378.5 22.3H1386.0A5.7 5.7 0 0 1 1386.0 33.8H1378.5V30.1H1385.7A2 2 0 0 0 1385.7 26.0H1378.5Z" fill="none" stroke="#fff" stroke-width="1.8" stroke-width="1.6"/><path d="M1417.1 24.8L1431.6 10.8L1438.3 16.6L1434.7 19.8" fill="none" stroke="#fff" stroke-width="1.8" stroke-width="1.6"/><path d="M1416.5 25.4L1422.3 31.2M1416.8 25.2L1414.8 29.6M1422 31L1418 33" fill="none" stroke="#fff" stroke-width="1.8" stroke-width="1.4"/><path d="M1414.6 29.6L1418.4 33.2L1416.2 35.6L1412.4 32Z" fill="#fff"/><path d="M1428.6 25.2A6.4 6.4 0 1 0 1438 26.5" fill="none" stroke="#1c7fd6" stroke-width="1.8"/><path d="M1433.2 22.8L1439.8 22L1439 28.8Z" fill="#1c7fd6"/><rect x="1462.5" y="12.5" width="25" height="23.5" fill="none" stroke="#fff" stroke-width="1.8"/><path d="M1462.5 15.5H1487.5" fill="none" stroke="#fff" stroke-width="1.8" stroke-width="1.3"/><path d="M1467 21.5H1483M1479.5 18L1483.3 21.5L1479.5 25M1483 29.5H1467M1470.5 26L1466.7 29.5L1470.5 33" fill="none" stroke="#fff" stroke-width="1.8" stroke-width="1.6"/><path d="M1503.5 21.5L1509 27L1514.5 21.5" fill="none" stroke="#fff" stroke-width="1.8" stroke-width="2"/></svg>
<div style="position:absolute;left:1.50px;top:1241.00px;font:17.5px/1 'Liberation Sans',sans-serif;color:#fff;white-space:pre;letter-spacing:-1.271px;">Ready</div>
<div style="position:absolute;left:1548.60px;top:1240.00px;font:17px/1 'Liberation Sans',sans-serif;color:#fff;white-space:pre;letter-spacing:-0.431px;">9.525 cm = 30&#x27;-0&quot;</div>
<div style="position:absolute;left:1706.00px;top:1240.00px;font:17px/1 'Liberation Sans',sans-serif;color:#fff;white-space:pre;letter-spacing:-0.322px;">106.68 x 76.20 cm</div>
<div style="position:absolute;left:1881.80px;top:1240.00px;font:17px/1 'Liberation Sans',sans-serif;color:#fff;white-space:pre;letter-spacing:-0.112px;">(112.96, 17.11)</div>
<div style="position:absolute;left:255px;top:666px;width:278.5px;height:605px;background:#3c3c3c;box-shadow:2px 3px 5px rgba(0,0,0,.55);border-top:1px solid #222;border-left:1px solid #222;box-sizing:border-box;"></div>
<div style="position:absolute;left:257.2px;top:668.3px;width:31.4px;height:31.4px;background:#1f66a3;box-sizing:border-box;border:1px solid #1c74c2;"></div>
<svg style="position:absolute;left:259px;top:670.0px;" width="28" height="28" viewBox="0 0 28 28"><path d="M5.9 25.2V3.5H23.2V25.2Z" fill="none" stroke="#fff" stroke-width="1.8" stroke-linejoin="miter"/><path d="M5.9 22H23.2" fill="none" stroke="#fff" stroke-width="1.8" stroke-linejoin="miter" stroke-width="1.3"/><path d="M8.3 2V16.6L11.8 14L15.2 16.6V2" fill="none" stroke="#fff" stroke-width="1.8" stroke-linejoin="miter" stroke-width="1.6"/></svg>
<div style="position:absolute;left:302.00px;top:675.00px;font:17px/1 'Liberation Sans',sans-serif;color:#fff;white-space:pre;letter-spacing:-0.190px;">Bookmarks</div>
<div style="position:absolute;left:462.96px;top:675.00px;font:17px/1 'Liberation Sans',sans-serif;color:#fff;white-space:pre;letter-spacing:-0.442px;">Alt+B</div>
<div style="position:absolute;left:257.2px;top:701.8px;width:31.4px;height:31.4px;background:#1f66a3;box-sizing:border-box;border:1px solid #1c74c2;"></div>
<svg style="position:absolute;left:259px;top:703.5px;" width="28" height="28" viewBox="0 0 28 28"><rect x="5.9" y="3.1" width="17.3" height="22.9" fill="none" stroke="#fff" stroke-width="1.8" stroke-linejoin="miter"/><path d="M5.9 12.5H23.2" fill="none" stroke="#fff" stroke-width="1.8" stroke-linejoin="miter"/><path d="M10.6 6v2.4h7.8V6M10.6 15.8v2.4h7.8V15.8" fill="none" stroke="#fff" stroke-width="1.8" stroke-linejoin="miter" stroke-width="1.5"/></svg>
<div style="position:absolute;left:302.00px;top:708.00px;font:17px/1 'Liberation Sans',sans-serif;color:#fff;white-space:pre;letter-spacing:-0.247px;">File Access</div>
<div style="position:absolute;left:462.96px;top:708.00px;font:17px/1 'Liberation Sans',sans-serif;color:#fff;white-space:pre;letter-spacing:-0.442px;">Alt+A</div>
<div style="position:absolute;left:257.2px;top:735.3px;width:31.4px;height:31.4px;background:#1f66a3;box-sizing:border-box;border:1px solid #1c74c2;"></div>
<svg style="position:absolute;left:259px;top:737.0px;" width="28" height="28" viewBox="0 0 28 28"><path d="M2.1 14.1L10.8 6.4H26.2V21.9H10.8Z" fill="none" stroke="#fff" stroke-width="1.8" stroke-linejoin="miter"/></svg>
<div style="position:absolute;left:302.00px;top:742.00px;font:17px/1 'Liberation Sans',sans-serif;color:#fff;white-space:pre;letter-spacing:-0.517px;">Flags</div>
<div style="position:absolute;left:257.2px;top:768.8px;width:31.4px;height:31.4px;background:#1f66a3;box-sizing:border-box;border:1px solid #1c74c2;"></div>
<svg style="position:absolute;left:259px;top:770.5px;" width="28" height="28" viewBox="0 0 28 28"><path d="M22.3 4V1.5H2.4V25.8H22.3V19.3" fill="none" stroke="#fff" stroke-width="1.8" stroke-linejoin="miter"/><rect x="5.3" y="5.6" width="14.1" height="3.2" fill="none" stroke="#fff" stroke-width="1.8" stroke-linejoin="miter" stroke-width="1.5"/><path d="M5.3 12.7H15.5M5.3 17H10M5.3 21.3H10" fill="none" stroke="#fff" stroke-width="1.8" stroke-linejoin="miter" stroke-width="1.6"/><path d="M11.2 22.5L12.7 18.2L23.7 8L26.4 11.1L15.9 21.7Z" fill="none" stroke="#fff" stroke-width="1.8" stroke-linejoin="miter" stroke-width="1.7" stroke-linejoin="round"/></svg>
<div style="position:absolute;left:302.00px;top:775.00px;font:17px/1 'Liberation Sans',sans-serif;color:#fff;white-space:pre;letter-spacing:-0.289px;">Forms</div>
<div style="position:absolute;left:461.16px;top:775.00px;font:17px/1 'Liberation Sans',sans-serif;color:#fff;white-space:pre;letter-spacing:-0.462px;">Alt+Q</div>
<div style="position:absolute;left:257.2px;top:802.3px;width:31.4px;height:31.4px;background:#1f66a3;box-sizing:border-box;border:1px solid #1c74c2;"></div>
<svg style="position:absolute;left:259px;top:804.0px;" width="28" height="28" viewBox="0 0 28 28"><g transform="translate(0 -1)"><path d="M4.3 22.5V5.5Q4.3 3.2 6.6 3.2H23.5Q26.3 3.2 26.3 6Q26.3 8.2 23.8 8.2H20.8V24.5Q20.8 27.4 18 27.4H4Q1.6 27.4 1.6 25Q1.6 22.5 4 22.5H15.3V25.2" fill="none" stroke="#fff" stroke-width="1.8" stroke-linejoin="miter" stroke-width="1.6" stroke-linejoin="round"/><path d="M20.8 8.2V5.8Q21 3.4 23.5 3.2" fill="none" stroke="#fff" stroke-width="1.8" stroke-linejoin="miter" stroke-width="1.4"/><text x="12.1" y="17.6" font-family="Liberation Sans" font-weight="bold" font-size="8.8" fill="#fff" text-anchor="middle">JS</text></g></svg>
<div style="position:absolute;left:302.00px;top:809.00px;font:17px/1 'Liberation Sans',sans-serif;color:#fff;white-space:pre;letter-spacing:-0.203px;">JavaScript Console</div>
<div style="position:absolute;left:465.68px;top:809.00px;font:17px/1 'Liberation Sans',sans-serif;color:#fff;white-space:pre;letter-spacing:-0.411px;">Alt+J</div>
<div style="position:absolute;left:257.2px;top:835.8px;width:31.4px;height:31.4px;background:#1f66a3;box-sizing:border-box;border:1px solid #1c74c2;"></div>
<svg style="position:absolute;left:259px;top:837.5px;" width="28" height="28" viewBox="0 0 28 28"><path d="M14.3 1.9L26.2 9.75L14.3 17.6L2.4 9.75Z" fill="none" stroke="#fff" stroke-width="1.8" stroke-linejoin="miter"/><path d="M6.8 15.2L2.4 18.2L14.3 26.2L26.2 18.2L21.7 15.2" fill="none" stroke="#fff" stroke-width="1.8" stroke-linejoin="miter"/></svg>
<div style="position:absolute;left:302.00px;top:842.00px;font:17px/1 'Liberation Sans',sans-serif;color:#fff;white-space:pre;letter-spacing:-0.204px;">Layers</div>
<div style="position:absolute;left:462.96px;top:842.00px;font:17px/1 'Liberation Sans',sans-serif;color:#fff;white-space:pre;letter-spacing:-0.442px;">Alt+Y</div>
<svg style="position:absolute;left:259px;top:871.0px;" width="28" height="28" viewBox="0 0 28 28"><g transform="translate(0 -0.8)"><path d="M8.2 19Q1.8 20 1.8 22.5Q1.8 26.6 13.4 26.6Q25 26.6 25 22.5Q25 20 18.6 19" fill="none" stroke="#fff" stroke-width="1.8" stroke-linejoin="miter" stroke-width="1.7"/><path d="M13.1 24L7.4 14A7 7 0 1 1 18.8 14Z" fill="none" stroke="#fff" stroke-width="1.8" stroke-linejoin="miter" stroke-width="1.7" stroke-linejoin="round"/><circle cx="13.1" cy="10.2" r="2.6" fill="none" stroke="#fff" stroke-width="1.8" stroke-linejoin="miter" stroke-width="1.6"/></g></svg>
<div style="position:absolute;left:302.00px;top:876.00px;font:17px/1 'Liberation Sans',sans-serif;color:#fff;white-space:pre;letter-spacing:-0.171px;">Links</div>
<div style="position:absolute;left:462.06px;top:876.00px;font:17px/1 'Liberation Sans',sans-serif;color:#fff;white-space:pre;letter-spacing:-0.452px;">Alt+N</div>
<div style="position:absolute;left:257.2px;top:902.8px;width:31.4px;height:31.4px;background:#1f66a3;box-sizing:border-box;border:1px solid #1c74c2;"></div>
<svg style="position:absolute;left:259px;top:904.5px;" width="28" height="28" viewBox="0 0 28 28"><g transform="translate(0 -0.8)"><path d="M2.5 6.4h2.9v3.1H2.5zM2.5 13.5h2.9v3H2.5zM2.5 20.5h2.9v2.9H2.5z" fill="#fff"/><path d="M9.8 6.4h15.1v3.1H9.8zM9.8 13.5h15.1v3H9.8zM9.8 20.5h15.1v2.9H9.8z" fill="#fff"/></g></svg>
<div style="position:absolute;left:302.00px;top:909.00px;font:17px/1 'Liberation Sans',sans-serif;color:#fff;white-space:pre;letter-spacing:-0.030px;">Markups</div>
<div style="position:absolute;left:464.76px;top:909.00px;font:17px/1 'Liberation Sans',sans-serif;color:#fff;white-space:pre;letter-spacing:-0.422px;">Alt+L</div>
<div style="position:absolute;left:257.2px;top:936.3px;width:31.4px;height:31.4px;background:#1f66a3;box-sizing:border-box;border:1px solid #1c74c2;"></div>
<svg style="position:absolute;left:259px;top:938.0px;" width="28" height="28" viewBox="0 0 28 28"><rect x="1.5" y="8" width="25" height="12" fill="none" stroke="#fff" stroke-width="1.8" stroke-linejoin="miter"/><path d="M6.5 8v5.5M11.5 8v7.5M16.5 8v5.5M21.5 8v7.5" fill="none" stroke="#fff" stroke-width="1.8" stroke-linejoin="miter"/></svg>
<div style="position:absolute;left:302.00px;top:943.00px;font:17px/1 'Liberation Sans',sans-serif;color:#fff;white-space:pre;letter-spacing:0.098px;">Measurements</div>
<div style="position:absolute;left:462.06px;top:943.00px;font:17px/1 'Liberation Sans',sans-serif;color:#fff;white-space:pre;letter-spacing:-0.452px;">Alt+U</div>
<div style="position:absolute;left:257.2px;top:969.8px;width:31.4px;height:31.4px;background:#1f66a3;box-sizing:border-box;border:1px solid #1c74c2;"></div>
<svg style="position:absolute;left:259px;top:971.5px;" width="28" height="28" viewBox="0 0 28 28"><path d="M11.96 1.36L16.04 1.36L16.38 4.29L19.18 5.45L21.49 3.62L24.38 6.51L22.55 8.81L23.71 11.62L26.64 11.96L26.64 16.04L23.71 16.38L22.55 19.18L24.38 21.49L21.49 24.38L19.19 22.55L16.38 23.71L16.04 26.64L11.96 26.64L11.62 23.71L8.82 22.55L6.51 24.38L3.62 21.49L5.45 19.19L4.29 16.38L1.36 16.04L1.36 11.96L4.29 11.62L5.45 8.82L3.62 6.51L6.51 3.62L8.81 5.45L11.62 4.29Z" fill="none" stroke="#fff" stroke-width="1.8" stroke-linejoin="miter" stroke-width="1.6" stroke-linejoin="round"/><circle cx="14" cy="14" r="7" fill="none" stroke="#fff" stroke-width="1.8" stroke-linejoin="miter" stroke-width="1.7"/></svg>
<div style="position:absolute;left:302.00px;top:976.00px;font:17px/1 'Liberation Sans',sans-serif;color:#fff;white-space:pre;letter-spacing:-0.164px;">Properties</div>
<div style="position:absolute;left:462.96px;top:976.00px;font:17px/1 'Liberation Sans',sans-serif;color:#fff;white-space:pre;letter-spacing:-0.442px;">Alt+P</div>
<div style="position:absolute;left:257.2px;top:1003.3px;width:31.4px;height:31.4px;background:#1f66a3;box-sizing:border-box;border:1px solid #1c74c2;"></div>
<svg style="position:absolute;left:259px;top:1005.0px;" width="28" height="28" viewBox="0 0 28 28"><circle cx="10.8" cy="10" r="8.3" fill="none" stroke="#fff" stroke-width="1.8" stroke-linejoin="miter"/><path d="M16.7 15.9L26.3 26" fill="none" stroke="#fff" stroke-width="1.8" stroke-linejoin="miter"/></svg>
<div style="position:absolute;left:302.00px;top:1010.00px;font:17px/1 'Liberation Sans',sans-serif;color:#fff;white-space:pre;letter-spacing:-0.372px;">Search</div>
<div style="position:absolute;left:464.76px;top:1010.00px;font:17px/1 'Liberation Sans',sans-serif;color:#fff;white-space:pre;letter-spacing:-0.422px;">Alt+1</div>
<div style="position:absolute;left:257.2px;top:1036.8px;width:31.4px;height:31.4px;background:#1f66a3;box-sizing:border-box;border:1px solid #1c74c2;"></div>
<svg style="position:absolute;left:259px;top:1038.5px;" width="28" height="28" viewBox="0 0 28 28"><path d="M4.9 1.6H24.1L26.7 17.7H2.1Z" fill="none" stroke="#fff" stroke-width="1.8" stroke-linejoin="miter" stroke-width="1.6"/><path d="M8.4 4.9H21L22.5 14.6H6.6ZM17 4.9L18.2 14.6" fill="none" stroke="#fff" stroke-width="1.8" stroke-linejoin="miter" stroke-width="1.5"/><path d="M2.1 20.4H26.7M2.1 23.4H26.7M2.1 26.3H26.7" fill="none" stroke="#fff" stroke-width="1.8" stroke-linejoin="miter" stroke-width="1.7"/></svg>
<div style="position:absolute;left:302.00px;top:1043.00px;font:17px/1 'Liberation Sans',sans-serif;color:#fff;white-space:pre;letter-spacing:-0.172px;">Sets</div>
<div style="position:absolute;left:464.76px;top:1043.00px;font:17px/1 'Liberation Sans',sans-serif;color:#fff;white-space:pre;letter-spacing:-0.422px;">Alt+2</div>
<div style="position:absolute;left:257.2px;top:1070.3px;width:31.4px;height:31.4px;background:#1f66a3;box-sizing:border-box;border:1px solid #1c74c2;"></div>
<svg style="position:absolute;left:259px;top:1072.0px;" width="28" height="28" viewBox="0 0 28 28"><path d="M1.8 25.5H27" fill="none" stroke="#fff" stroke-width="1.8" stroke-linejoin="miter"/><path d="M5.1 22.5L7.3 11.4Q12 10.8 15.8 6.6M20.6 10.6Q17 14.5 16.3 20.4Q10 18.8 5.1 22.5" fill="none" stroke="#fff" stroke-width="1.8" stroke-linejoin="miter" stroke-width="1.7" stroke-linejoin="round"/><path d="M18.2 1.4L14.3 4.3L23.3 12.7L26.3 9.6" fill="none" stroke="#fff" stroke-width="1.8" stroke-linejoin="miter" stroke-width="1.7"/><circle cx="11.6" cy="16.3" r="1.1" fill="#fff"/></svg>
<div style="position:absolute;left:302.00px;top:1077.00px;font:17px/1 'Liberation Sans',sans-serif;color:#fff;white-space:pre;letter-spacing:-0.141px;">Signatures</div>
<div style="position:absolute;left:464.76px;top:1077.00px;font:17px/1 'Liberation Sans',sans-serif;color:#fff;white-space:pre;letter-spacing:-0.422px;">Alt+4</div>
<div style="position:absolute;left:257.2px;top:1103.8px;width:31.4px;height:31.4px;background:#1f66a3;box-sizing:border-box;border:1px solid #1c74c2;"></div>
<svg style="position:absolute;left:259px;top:1105.5px;" width="28" height="28" viewBox="0 0 28 28"><path d="M21.4 19H26.3V2.55H2.55V26.1H12.2V19M7.6 19H16.9M16.5 2.55V12H11.4M2.55 12H7.5" fill="none" stroke="#fff" stroke-width="1.8" stroke-linejoin="miter"/></svg>
<div style="position:absolute;left:302.00px;top:1110.00px;font:17px/1 'Liberation Sans',sans-serif;color:#fff;white-space:pre;letter-spacing:-0.440px;">Spaces</div>
<div style="position:absolute;left:462.96px;top:1110.00px;font:17px/1 'Liberation Sans',sans-serif;color:#fff;white-space:pre;letter-spacing:-0.442px;">Alt+S</div>
<div style="position:absolute;left:257.2px;top:1137.3px;width:31.4px;height:31.4px;background:#1f66a3;box-sizing:border-box;border:1px solid #1c74c2;"></div>
<svg style="position:absolute;left:259px;top:1139.0px;" width="28" height="28" viewBox="0 0 28 28"><path d="M2.4 6.9L19.6 1.85L26.4 7.3V21L19.6 26.3L2.4 21Z" fill="none" stroke="#fff" stroke-width="1.8" stroke-linejoin="miter"/><path d="M6.5 22.3V15.6H12.3V24M9.4 17.5V23" fill="none" stroke="#fff" stroke-width="1.8" stroke-linejoin="miter" stroke-width="1.6"/></svg>
<div style="position:absolute;left:302.00px;top:1144.00px;font:17px/1 'Liberation Sans',sans-serif;color:#fff;white-space:pre;letter-spacing:-0.240px;">Studio</div>
<div style="position:absolute;left:462.06px;top:1144.00px;font:17px/1 'Liberation Sans',sans-serif;color:#fff;white-space:pre;letter-spacing:-0.452px;">Alt+C</div>
<div style="position:absolute;left:257.2px;top:1170.8px;width:31.4px;height:31.4px;background:#1f66a3;box-sizing:border-box;border:1px solid #1c74c2;"></div>
<svg style="position:absolute;left:259px;top:1172.5px;" width="28" height="28" viewBox="0 0 28 28"><rect x="3.2" y="3.1" width="8.6" height="8.2" fill="none" stroke="#fff" stroke-width="1.8" stroke-linejoin="miter"/><rect x="3.2" y="17" width="8.6" height="8.2" fill="none" stroke="#fff" stroke-width="1.8" stroke-linejoin="miter"/><rect x="17" y="3.1" width="8.6" height="8.2" fill="none" stroke="#fff" stroke-width="1.8" stroke-linejoin="miter"/><rect x="17" y="17" width="8.6" height="8.2" fill="none" stroke="#fff" stroke-width="1.8" stroke-linejoin="miter"/></svg>
<div style="position:absolute;left:302.00px;top:1177.00px;font:17px/1 'Liberation Sans',sans-serif;color:#fff;white-space:pre;letter-spacing:-0.096px;">Thumbnails</div>
<div style="position:absolute;left:463.87px;top:1177.00px;font:17px/1 'Liberation Sans',sans-serif;color:#fff;white-space:pre;letter-spacing:-0.432px;">Alt+T</div>
<div style="position:absolute;left:257.2px;top:1204.3px;width:31.4px;height:31.4px;background:#1f66a3;box-sizing:border-box;border:1px solid #1c74c2;"></div>
<svg style="position:absolute;left:259px;top:1206.0px;" width="28" height="28" viewBox="0 0 28 28"><path d="M2.4 23.5V11.5Q2.4 8 6 8H22.8Q26.4 8 26.4 11.5V23.5Z" fill="none" stroke="#fff" stroke-width="1.8" stroke-linejoin="miter"/><path d="M9.4 8V6Q9.4 3.5 12 3.5H17Q19.6 3.5 19.6 6V8" fill="none" stroke="#fff" stroke-width="1.8" stroke-linejoin="miter"/><path d="M2.4 15.2H26.4" fill="none" stroke="#fff" stroke-width="1.8" stroke-linejoin="miter"/><path d="M8.8 15.2v1.8M20.2 15.2v1.8" fill="none" stroke="#fff" stroke-width="1.8" stroke-linejoin="miter" stroke-width="2.4"/></svg>
<div style="position:absolute;left:302.00px;top:1211.00px;font:17px/1 'Liberation Sans',sans-serif;color:#fff;white-space:pre;letter-spacing:-0.146px;">Tool Chest</div>
<div style="position:absolute;left:462.96px;top:1211.00px;font:17px/1 'Liberation Sans',sans-serif;color:#fff;white-space:pre;letter-spacing:-0.442px;">Alt+X</div>
<div style="position:absolute;left:257.2px;top:1237.8px;width:31.4px;height:31.4px;background:#1f66a3;box-sizing:border-box;border:1px solid #1c74c2;"></div>
<svg style="position:absolute;left:259px;top:1239.5px;" width="28" height="28" viewBox="0 0 28 28"><g transform="translate(0 -1.5)"><path d="M13.45 2.7L26.2 7.7V22.6L13.45 27.4L0.8 22.6V7.7Z" fill="none" stroke="#fff" stroke-width="1.8" stroke-linejoin="miter" stroke-width="1.6" stroke-linejoin="round"/><path d="M0.8 7.7L13.45 12.7L26.2 7.7M13.45 12.7V27.4" fill="none" stroke="#fff" stroke-width="1.8" stroke-linejoin="miter" stroke-width="1.6"/><text x="0" y="0" font-family="Liberation Sans" font-weight="bold" font-size="11" fill="#fff" text-anchor="middle" transform="translate(6.8 22.3) skewY(21)">3</text><text x="0" y="0" font-family="Liberation Sans" font-weight="bold" font-size="11" fill="#fff" text-anchor="middle" transform="translate(20.2 22.3) skewY(-21)">D</text></g></svg>
<div style="position:absolute;left:302.00px;top:1244.00px;font:17px/1 'Liberation Sans',sans-serif;color:#fff;white-space:pre;letter-spacing:-0.291px;">3D Model Tree</div>
<div style="position:absolute;left:464.76px;top:1244.00px;font:17px/1 'Liberation Sans',sans-serif;color:#fff;white-space:pre;letter-spacing:-0.422px;">Alt+3</div>
<div style="position:absolute;left:1px;top:834px;width:253.5px;height:144px;background:#3c3c3c;box-shadow:2px 3px 5px rgba(0,0,0,.55);"></div>
<div style="position:absolute;left:0px;top:833px;width:258px;height:43px;background:#ffc70d;"></div>
<div style="position:absolute;left:5px;top:840.7px;width:245.3px;height:27.2px;background:#21608f;"></div>
<div style="position:absolute;left:34.80px;top:847.00px;font:17.5px/1 'Liberation Sans',sans-serif;color:#fff;white-space:pre;letter-spacing:-0.858px;">Show</div>
<div style="position:absolute;left:35.00px;top:881.00px;font:17.5px/1 'Liberation Sans',sans-serif;color:#7a7a7a;white-space:pre;letter-spacing:-0.830px;">Hide</div>
<div style="position:absolute;left:35.00px;top:914.00px;font:17.5px/1 'Liberation Sans',sans-serif;color:#7a7a7a;white-space:pre;letter-spacing:-0.222px;">Attach</div>
<div style="position:absolute;left:14px;top:941px;width:228px;height:1.3px;background:#7a7a7a;"></div>
<div style="position:absolute;left:35.00px;top:954.00px;font:17.5px/1 'Liberation Sans',sans-serif;color:#fff;white-space:pre;letter-spacing:-0.511px;">Auto-Hide Panel Access</div>
<svg style="position:absolute;left:230px;top:840px;" width="20" height="100" viewBox="0 0 20 100"><path d="M6.5 9.5L12 15L6.5 20.5" stroke="#fff" stroke-width="1.8" fill="none"/><path d="M6.5 76.5L12 82L6.5 87.5" stroke="#8a8a8a" stroke-width="1.8" fill="none"/></svg>
</body></html>
